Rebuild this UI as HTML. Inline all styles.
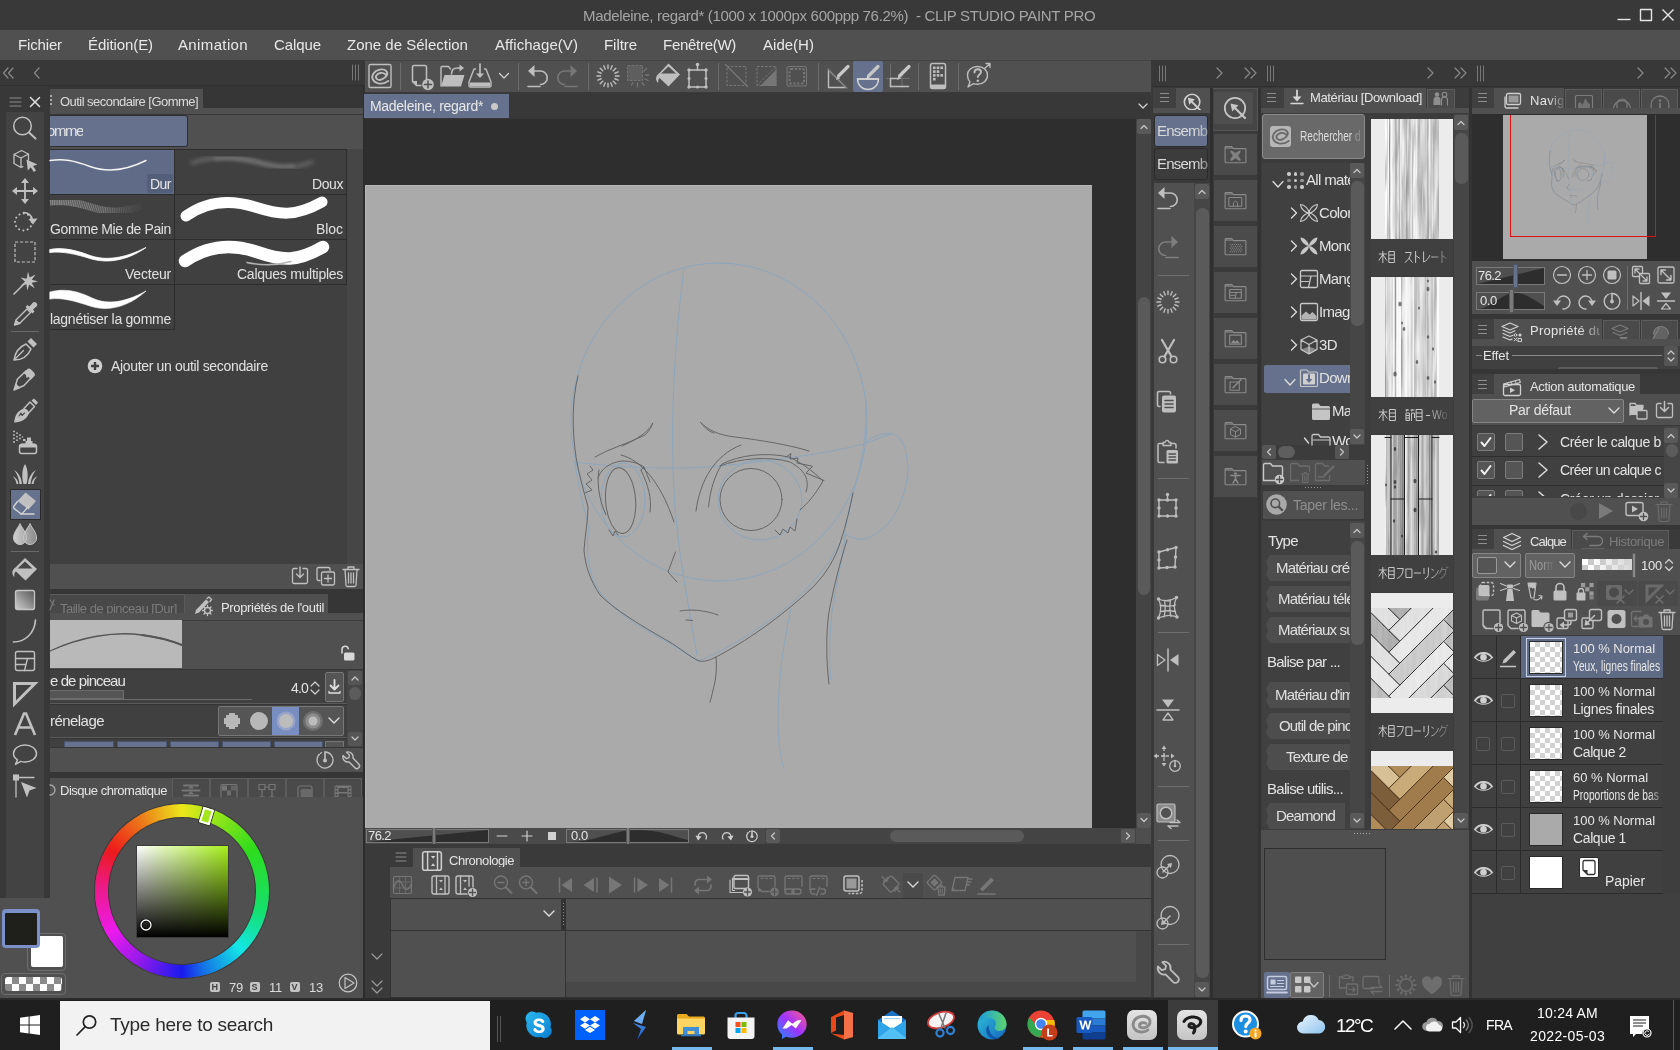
<!DOCTYPE html>
<html><head><meta charset="utf-8"><title>CLIP STUDIO PAINT PRO</title>
<style>
html,body{margin:0;padding:0;width:1680px;height:1050px;overflow:hidden;background:#3a3a3a;font-family:"Liberation Sans",sans-serif;}
div,svg{position:absolute;box-sizing:border-box;}
.t{white-space:pre;font-family:"Liberation Sans",sans-serif;}
#root{left:0;top:0;width:1680px;height:1050px;will-change:transform;}
svg{overflow:visible;fill:none;stroke:currentColor;stroke-width:1.3;stroke-linecap:round;stroke-linejoin:round;color:#b9b9b9}
.f{fill:currentColor;stroke:none}
.ff{fill:currentColor}
</style></head><body><div id="root">
<div style="left:0px;top:0px;width:1680px;height:30px;background:#393939;"></div>
<div class="t" style="left:583px;top:5.0px;height:22px;line-height:22px;font-size:15px;color:#a6a6a6;letter-spacing:-0.32px;">Madeleine, regard* (1000 x 1000px 600ppp 76.2%)  - CLIP STUDIO PAINT PRO</div>
<svg style="left:1612px;top:4px;color:#e6e6e6;stroke-width:1.4;stroke-linecap:butt" width="66" height="22" viewBox="0 0 66 22"><path d="M5.5 15.5h13"/><rect x="28.5" y="5.5" width="11" height="11"/><path d="M50.5 5.5l11 11M61.5 5.5l-11 11"/></svg>
<div style="left:0px;top:30px;width:1680px;height:30px;background:#505050;"></div>
<div class="t" style="left:18px;top:34.0px;height:22px;line-height:22px;font-size:15px;color:#e8e8e8;letter-spacing:-0.15px;">Fichier</div>
<div class="t" style="left:88px;top:34.0px;height:22px;line-height:22px;font-size:15px;color:#e8e8e8;letter-spacing:-0.09px;">Édition(E)</div>
<div class="t" style="left:178px;top:34.0px;height:22px;line-height:22px;font-size:15px;color:#e8e8e8;letter-spacing:0.37px;">Animation</div>
<div class="t" style="left:274px;top:34.0px;height:22px;line-height:22px;font-size:15px;color:#e8e8e8;letter-spacing:-0.09px;">Calque</div>
<div class="t" style="left:347px;top:34.0px;height:22px;line-height:22px;font-size:15px;color:#e8e8e8;letter-spacing:0.00px;">Zone de Sélection</div>
<div class="t" style="left:495px;top:34.0px;height:22px;line-height:22px;font-size:15px;color:#e8e8e8;letter-spacing:0.06px;">Affichage(V)</div>
<div class="t" style="left:604px;top:34.0px;height:22px;line-height:22px;font-size:15px;color:#e8e8e8;letter-spacing:-0.06px;">Filtre</div>
<div class="t" style="left:663px;top:34.0px;height:22px;line-height:22px;font-size:15px;color:#e8e8e8;letter-spacing:-0.28px;">Fenêtre(W)</div>
<div class="t" style="left:763px;top:34.0px;height:22px;line-height:22px;font-size:15px;color:#e8e8e8;letter-spacing:0.02px;">Aide(H)</div>
<div style="left:0px;top:60px;width:1680px;height:28px;background:#383838;"></div>
<div style="left:0px;top:85px;width:365px;height:1px;background:#303030;"></div>
<svg style="left:1px;top:65px;color:#8a8a8a;stroke-width:1.200" width="40" height="16" viewBox="0 0 40 16"><path d="M7 3l-4.500 5 4.500 5M12 3l-4.500 5 4.500 5M38 3l-4.500 5 4.500 5"/></svg>
<svg style="left:350px;top:65px;color:#777;stroke-width:1" width="10" height="16" viewBox="0 0 10 16"><path d="M2.500 0v15M5.500 0v15M8.500 0v15"/></svg>
<div style="left:0px;top:88px;width:50px;height:810px;background:#383838;"></div>
<div style="left:6px;top:112px;width:38px;height:786px;background:#434343;"></div>
<svg style="left:10px;top:97px;color:#8c8c8c;stroke-width:1.100" width="12" height="10" viewBox="0 0 12 10"><path d="M0 1h11M0 5h11M0 9h11"/></svg>
<svg style="left:30px;top:97px;color:#e0e0e0;stroke-width:1.500" width="10" height="10" viewBox="0 0 10 10"><path d="M0.500 0.500l9 9M9.500 0.500l-9 9"/></svg>
<div style="left:11px;top:331px;width:28px;height:1px;background:#6a6a6a;"></div>
<div style="left:11px;top:551px;width:28px;height:1px;background:#6a6a6a;"></div>
<div style="left:10px;top:489px;width:31px;height:31px;background:#65718d;border:1px solid #2c2c2c;"></div>
<div style="left:50px;top:86px;width:315px;height:508px;background:#363636;"></div>
<div style="left:50px;top:89px;width:153px;height:20px;background:#505050;"></div>
<div style="left:50px;top:108px;width:313px;height:6px;background:#505050;"></div>
<svg style="left:50px;top:94px;color:#aaa;stroke-width:2;stroke-linecap:butt" width="4" height="12" viewBox="0 0 4 12"><path d="M1 1v2M1 5v2M1 9v2"/></svg>
<div class="t" style="left:60px;top:91.5px;height:19px;line-height:19px;font-size:13px;color:#dcdcdc;letter-spacing:-0.54px;">Outil secondaire [Gomme]</div>
<div style="left:50px;top:114px;width:313px;height:35px;background:#505050;border-top:1px solid #383838;"></div>
<div style="left:50px;top:115px;width:138px;height:32px;background:#65718d;border:1px solid #2f2f2f;border-left:none;border-radius:0 3px 3px 0;"></div>
<div class="t" style="left:47px;top:120.0px;height:22px;line-height:22px;font-size:15px;color:#e4e4e4;letter-spacing:-1.42px;clip-path:inset(0 0 0 3px);">omme</div>
<div style="left:50px;top:149px;width:297px;height:415px;background:#404040;"></div>
<div style="left:347px;top:149px;width:16px;height:415px;background:#464646;"></div>
<div style="left:50px;top:150px;width:125px;height:45px;background:#5f6b87;border-right:1px solid #2d2d2d;border-bottom:1px solid #2d2d2d;"></div>
<div style="left:175px;top:150px;width:172px;height:45px;background:#404040;border-right:1px solid #2d2d2d;border-bottom:1px solid #2d2d2d;"></div>
<div style="left:50px;top:195px;width:125px;height:45px;background:#404040;border-right:1px solid #2d2d2d;border-bottom:1px solid #2d2d2d;"></div>
<div style="left:175px;top:195px;width:172px;height:45px;background:#404040;border-right:1px solid #2d2d2d;border-bottom:1px solid #2d2d2d;"></div>
<div style="left:50px;top:240px;width:125px;height:45px;background:#404040;border-right:1px solid #2d2d2d;border-bottom:1px solid #2d2d2d;"></div>
<div style="left:175px;top:240px;width:172px;height:45px;background:#404040;border-right:1px solid #2d2d2d;border-bottom:1px solid #2d2d2d;"></div>
<div style="left:50px;top:285px;width:125px;height:45px;background:#404040;border-right:1px solid #2d2d2d;border-bottom:1px solid #2d2d2d;"></div>
<div style="left:50px;top:149px;width:297px;height:1px;background:#2d2d2d;"></div>
<div style="left:147px;top:174px;width:26px;height:19px;background:#535e78;border-radius:2px;"></div>
<div class="t" style="left:150px;top:173.5px;height:21px;line-height:21px;font-size:14px;color:#e6e6e6;letter-spacing:-0.52px;">Dur</div>
<div class="t" style="left:312px;top:173.5px;height:21px;line-height:21px;font-size:14px;color:#e0e0e0;letter-spacing:-0.42px;">Doux</div>
<div class="t" style="left:50px;top:218.5px;height:21px;line-height:21px;font-size:14px;color:#e0e0e0;letter-spacing:-0.39px;">Gomme Mie de Pain</div>
<div class="t" style="left:316px;top:218.5px;height:21px;line-height:21px;font-size:14px;color:#e0e0e0;letter-spacing:-0.06px;">Bloc</div>
<div class="t" style="left:125px;top:263.5px;height:21px;line-height:21px;font-size:14px;color:#e0e0e0;letter-spacing:-0.21px;">Vecteur</div>
<div class="t" style="left:237px;top:263.5px;height:21px;line-height:21px;font-size:14px;color:#e0e0e0;letter-spacing:-0.26px;">Calques multiples</div>
<div class="t" style="left:50px;top:308.5px;height:21px;line-height:21px;font-size:14px;color:#e0e0e0;letter-spacing:-0.27px;">lagnétiser la gomme</div>
<svg style="left:50px;top:150px;" width="125" height="45" viewBox="0 0 125 45"><path d="M0 10.500c14-2 24 0 40 6 18 6.500 38 3 56-6" stroke="#f4f4f4" stroke-width="1.400"/></svg>
<svg style="left:175px;top:150px;" width="172" height="45" viewBox="0 0 172 45"><defs><filter id="bl"><feGaussianBlur stdDeviation="2"/></filter></defs><path d="M17 13C35 6 60 6 82 12S115 20 137 12" stroke="#9a9a9a" stroke-width="2.600" filter="url(#bl)" opacity=".6"/><path d="M40 8.500C55 7 68 8.500 82 12S105 17.500 118 16" stroke="#a8a8a8" stroke-width="2" filter="url(#bl)" opacity=".6"/></svg>
<svg style="left:50px;top:195px;" width="125" height="45" viewBox="0 0 125 45"><defs><filter id="b2"><feGaussianBlur stdDeviation=".55"/></filter></defs><linearGradient id="mp" x1="0" x2="1" y1="0" y2="0" gradientUnits="userSpaceOnUse" gradientTransform="scale(95 1)"><stop offset="0" stop-color="#8c8c8c"/><stop offset=".6" stop-color="#7a7a7a" stop-opacity=".85"/><stop offset="1" stop-color="#6a6a6a" stop-opacity="0"/></linearGradient><path d="M0 7C14 5 28 8 44 13S74 17 92 11" stroke="url(#mp)" stroke-width="7.500" stroke-linecap="butt" stroke-dasharray="1.300 .500" filter="url(#b2)"/></svg>
<svg style="left:175px;top:195px;" width="172" height="45" viewBox="0 0 172 45"><path d="M11 21C32 6 55 4 80 12S120 22 147 7" stroke="#fff" stroke-width="11"/></svg>
<svg style="left:50px;top:240px;" width="125" height="45" viewBox="0 0 125 45"><path d="M0 9.500c12-2.500 26 .5 40 6 16 5.500 34 3 56-8c-20 14-40 16-56 11-14-4.500-28-7.500-40-6z" fill="#fff" stroke="#fff" stroke-width=".8"/></svg>
<svg style="left:175px;top:240px;" width="172" height="45" viewBox="0 0 172 45"><path d="M10 21C32 6 56 3 82 12S122 22 148 7" stroke="#fff" stroke-width="12.500"/><path d="M72 22.500c14 3 30 3 44-1" stroke="#b4b4b4" stroke-width="1.600"/></svg>
<svg style="left:50px;top:285px;" width="125" height="45" viewBox="0 0 125 45"><path d="M0 7c14-4 28-1 42 6 16 7.500 34 4 54-7-18 16-38 21-56 15-14-4.500-28-9-40-7z" fill="#fff" stroke="#fff" stroke-width=".6"/></svg>
<svg style="left:87px;top:358px;color:#d8d8d8;" width="16" height="16" viewBox="0 0 16 16"><circle cx="8" cy="8" r="7.300" class="f" style="fill:#d0d0d0"/><path d="M8 4v8M4 8h8" stroke="#404040" stroke-width="2.400" stroke-linecap="butt"/></svg>
<div class="t" style="left:111px;top:355.5px;height:21px;line-height:21px;font-size:14px;color:#e0e0e0;letter-spacing:-0.33px;">Ajouter un outil secondaire</div>
<div style="left:50px;top:564px;width:313px;height:25px;background:#505050;"></div>
<div style="left:50px;top:594px;width:315px;height:184px;background:#363636;"></div>
<div style="left:50px;top:594px;width:135px;height:19px;background:#484848;border:1px solid #5a5a5a;border-bottom:none;border-left:none;"></div>
<div style="left:185px;top:594px;width:143px;height:20px;background:#505050;"></div>
<div style="left:50px;top:613px;width:313px;height:7px;background:#505050;"></div>
<div class="t" style="left:60px;top:598.5px;height:19px;line-height:19px;font-size:13px;color:#7c7c7c;letter-spacing:-0.51px;clip-path:inset(0 0 4px 0);">Taille de pinceau [Dur]</div>
<div class="t" style="left:221px;top:597.5px;height:19px;line-height:19px;font-size:13px;color:#e6e6e6;letter-spacing:-0.34px;">Propriétés de l'outil</div>
<div style="left:50px;top:620px;width:313px;height:49px;background:#505050;border-top:1px solid #3c3c3c;"></div>
<div style="left:50px;top:620px;width:132px;height:48px;background:#b9b9b9;"></div>
<svg style="left:50px;top:620px;" width="132" height="48" viewBox="0 0 132 48"><path d="M0 31c30-14 64-20 92-16 16 2 30 6 40 10" stroke="#555" stroke-width="1.300"/><path d="M92 15c16 2 30 6 40 10" stroke="#555" stroke-width="2"/></svg>
<div style="left:50px;top:670px;width:297px;height:34px;background:#404040;border-bottom:1px solid #5a5a5a;"></div>
<div style="left:50px;top:705px;width:297px;height:33px;background:#404040;border-bottom:1px solid #5a5a5a;"></div>
<div style="left:50px;top:739px;width:297px;height:8px;background:#404040;"></div>
<div style="left:347px;top:670px;width:16px;height:77px;background:#464646;"></div>
<div class="t" style="left:50px;top:670.0px;height:22px;line-height:22px;font-size:15px;color:#e4e4e4;letter-spacing:-0.91px;">e de pinceau</div>
<div style="left:50px;top:690px;width:74px;height:9px;background:#555555;border:1px solid #6c6c6c;border-left:none;"></div>
<div style="left:50px;top:699px;width:202px;height:1px;background:#6c6c6c;"></div>
<div class="t" style="left:291px;top:677.5px;height:21px;line-height:21px;font-size:14px;color:#e4e4e4;letter-spacing:-0.82px;">4.0</div>
<svg style="left:310px;top:680px;color:#d0d0d0;stroke-width:1.200" width="10" height="16" viewBox="0 0 10 16"><path d="M1 6l4-4 4 4M1 10l4 4 4-4"/></svg>
<div style="left:325px;top:672px;width:19px;height:30px;background:#555;border:1px solid #777;border-radius:2px;"></div>
<svg style="left:328px;top:679px;color:#e0e0e0;" width="13" height="16" viewBox="0 0 13 16"><path d="M6.500 1v9M2.500 6.500l4 4 4-4" stroke-width="1.800"/><path d="M1 12.500v1.500h11v-1.500" stroke-width="1.300"/></svg>
<div class="t" style="left:50px;top:710.0px;height:22px;line-height:22px;font-size:15px;color:#e4e4e4;letter-spacing:-0.55px;">rénelage</div>
<div style="left:218px;top:706px;width:126px;height:30px;background:#555;border:1px solid #777;border-radius:2px;"></div>
<div style="left:272px;top:707px;width:27px;height:28px;background:#788dc0;"></div>
<svg style="left:221px;top:710px;color:#b8b8b8;" width="22" height="22" viewBox="0 0 22 22"><path class="f" d="M8 3h6v2h3v3h2v6h-2v3h-3v2h-6v-2h-3v-3h-2v-6h2v-3h3z"/></svg>
<svg style="left:248px;top:710px;color:#b8b8b8;" width="22" height="22" viewBox="0 0 22 22"><circle cx="11" cy="11" r="9" class="f"/></svg>
<svg style="left:275px;top:710px;" width="22" height="22" viewBox="0 0 22 22"><circle cx="11" cy="11" r="9.500" class="f" style="fill:#97a3c8"/><circle cx="11" cy="11" r="7" class="f" style="fill:#bcbcbc"/></svg>
<svg style="left:302px;top:710px;" width="22" height="22" viewBox="0 0 22 22"><circle cx="11" cy="11" r="10" class="f" style="fill:#6e6e6e"/><circle cx="11" cy="11" r="7.500" class="f" style="fill:#8e8e8e"/><circle cx="11" cy="11" r="4.500" class="f" style="fill:#bcbcbc"/></svg>
<svg style="left:327px;top:715px;color:#e0e0e0;stroke-width:1.400" width="14" height="12" viewBox="0 0 14 12"><path d="M2 3l5 5 5-5"/></svg>
<div style="left:64px;top:741px;width:50px;height:6px;background:#66728e;border:1px solid #4a5470;border-bottom:none;"></div>
<div style="left:117px;top:741px;width:50px;height:6px;background:#66728e;border:1px solid #4a5470;border-bottom:none;"></div>
<div style="left:170px;top:741px;width:49px;height:6px;background:#66728e;border:1px solid #4a5470;border-bottom:none;"></div>
<div style="left:222px;top:741px;width:49px;height:6px;background:#66728e;border:1px solid #4a5470;border-bottom:none;"></div>
<div style="left:274px;top:741px;width:49px;height:6px;background:#66728e;border:1px solid #4a5470;border-bottom:none;"></div>
<div style="left:325px;top:741px;width:19px;height:6px;background:#555;border:1px solid #777;border-bottom:none;"></div>
<div style="left:348px;top:671px;width:14px;height:14px;background:#555;border-radius:2px;"></div>
<svg style="left:350px;top:674px;color:#c8c8c8;stroke-width:1.200" width="10" height="8" viewBox="0 0 10 8"><path d="M2 6l3-3 3 3"/></svg>
<div style="left:349px;top:687px;width:12px;height:13px;background:#5c5c5c;border-radius:6px;"></div>
<div style="left:348px;top:732px;width:14px;height:14px;background:#555;border-radius:2px;"></div>
<svg style="left:350px;top:735px;color:#c8c8c8;stroke-width:1.200" width="10" height="8" viewBox="0 0 10 8"><path d="M2 2l3 3 3-3"/></svg>
<div style="left:50px;top:748px;width:313px;height:24px;background:#505050;"></div>
<div style="left:50px;top:778px;width:315px;height:220px;background:#363636;"></div>
<div style="left:0px;top:898px;width:50px;height:100px;background:#505050;"></div>
<div style="left:50px;top:797px;width:313px;height:201px;background:#505050;"></div>
<div style="left:50px;top:778px;width:122px;height:20px;background:#505050;"></div>
<div style="left:172px;top:778px;width:38px;height:19px;background:#4a4a4a;border:1px solid #5c5c5c;border-bottom:none;"></div>
<div style="left:210px;top:778px;width:38px;height:19px;background:#4a4a4a;border:1px solid #5c5c5c;border-bottom:none;"></div>
<div style="left:248px;top:778px;width:38px;height:19px;background:#4a4a4a;border:1px solid #5c5c5c;border-bottom:none;"></div>
<div style="left:286px;top:778px;width:38px;height:19px;background:#4a4a4a;border:1px solid #5c5c5c;border-bottom:none;"></div>
<div style="left:324px;top:778px;width:38px;height:19px;background:#4a4a4a;border:1px solid #5c5c5c;border-bottom:none;"></div>
<svg style="left:50px;top:785px;color:#aaa;" width="3" height="10" viewBox="0 0 3 10"><path d="M0 0a5 5 0 0 1 0 10"/></svg>
<div class="t" style="left:60px;top:780.5px;height:19px;line-height:19px;font-size:13px;color:#e4e4e4;letter-spacing:-0.48px;">Disque chromatique</div>
<div style="left:95px;top:804px;width:174px;height:174px;border-radius:50%;background:conic-gradient(from 0deg,#ece81a 0deg,#9fe51a 22deg,#2ddc1c 60deg,#14e070 105deg,#14e6e6 135deg,#1470e6 165deg,#1a1aec 180deg,#a01aec 215deg,#ec1aec 240deg,#ec1a80 275deg,#ec1a1a 300deg,#ec7a1a 330deg,#ece81a 360deg);box-shadow:0 0 0 1px #3a3a3a;"></div>
<div style="left:109px;top:818px;width:146px;height:146px;background:#505050;border-radius:50%;box-shadow:0 0 0 1px #3a3a3a;"></div>
<div style="left:201px;top:808px;width:11px;height:16px;background:#a4e51c;border:2px solid #fff;box-shadow:0 0 0 1px #333;transform:rotate(17deg);"></div>
<div style="left:137px;top:846px;width:91px;height:91px;background:linear-gradient(to bottom,rgba(0,0,0,0),#000),linear-gradient(to right,#fff,#a6f01a);box-shadow:0 0 0 1px #3c3c3c;"></div>
<svg style="left:139px;top:918px;" width="14" height="14" viewBox="0 0 14 14"><circle cx="7" cy="7" r="5" stroke="#000" stroke-width="2.600"/><circle cx="7" cy="7" r="5" stroke="#fff" stroke-width="1.300"/></svg>
<div style="left:27px;top:933px;width:39px;height:38px;border:1px solid #6e6e6e;border-radius:4px;"></div>
<div style="left:31px;top:936px;width:32px;height:31px;background:#ffffff;border-radius:2px;"></div>
<div style="left:2px;top:909px;width:38px;height:39px;background:#7b8fc9;border-radius:4px;"></div>
<div style="left:5px;top:913px;width:32px;height:32px;background:#1f201b;border-radius:1px;"></div>
<div style="left:1px;top:973px;width:65px;height:22px;border:1px solid #6e6e6e;border-radius:4px;"></div>
<div style="left:5px;top:977px;width:57px;height:14px;border-radius:3px;background-color:#fff;background-image:linear-gradient(45deg,#8a8a8a 25%,transparent 25%,transparent 75%,#8a8a8a 75%),linear-gradient(45deg,#8a8a8a 25%,transparent 25%,transparent 75%,#8a8a8a 75%);background-size:14px 14px;background-position:0 0,7px 7px;"></div>
<div style="left:210px;top:982px;width:10px;height:10px;background:#c4c4c4;border-radius:2px;"></div>
<div class="t" style="left:211.5px;top:982.0px;height:10px;line-height:10px;font-size:9px;color:#444;font-weight:700;">H</div>
<div style="left:250px;top:982px;width:10px;height:10px;background:#c4c4c4;border-radius:2px;"></div>
<div class="t" style="left:251.5px;top:982.0px;height:10px;line-height:10px;font-size:9px;color:#444;font-weight:700;">S</div>
<div style="left:290px;top:982px;width:10px;height:10px;background:#c4c4c4;border-radius:2px;"></div>
<div class="t" style="left:291.5px;top:982.0px;height:10px;line-height:10px;font-size:9px;color:#444;font-weight:700;">V</div>
<div class="t" style="left:229px;top:977.5px;height:19px;line-height:19px;font-size:13px;color:#dcdcdc;letter-spacing:-0.23px;">79</div>
<div class="t" style="left:269px;top:977.5px;height:19px;line-height:19px;font-size:13px;color:#dcdcdc;letter-spacing:-0.25px;">11</div>
<div class="t" style="left:309px;top:977.5px;height:19px;line-height:19px;font-size:13px;color:#dcdcdc;letter-spacing:-0.23px;">13</div>
<svg style="left:338px;top:973px;color:#c4c4c4;stroke-width:1.200" width="20" height="20" viewBox="0 0 20 20"><circle cx="10" cy="10" r="8.800"/><path d="M7 4.500v11l9-5.500z"/></svg>
<div style="left:363px;top:86px;width:1px;height:912px;background:#2c2c2c;"></div>
<div style="left:364px;top:93px;width:1px;height:905px;background:#2c2c2c;"></div>
<div style="left:365px;top:60px;width:786px;height:33px;background:#505050;border-bottom:1px solid #3a3a3a;border-top:1px solid #444;"></div>
<div style="left:365px;top:93px;width:786px;height:26px;background:#383838;"></div>
<div style="left:364px;top:94px;width:145px;height:24px;background:#65718d;"></div>
<div class="t" style="left:370px;top:95.5px;height:21px;line-height:21px;font-size:14px;color:#e8e8e8;letter-spacing:-0.29px;">Madeleine, regard*</div>
<div style="left:491px;top:103px;width:7px;height:7px;background:#c9c9c9;border-radius:50%;"></div>
<svg style="left:1137px;top:101px;color:#d0d0d0;stroke-width:1.300" width="12" height="10" viewBox="0 0 12 10"><path d="M2 3l4 4 4-4"/></svg>
<div style="left:365px;top:119px;width:786px;height:709px;background:#2e2e2e;"></div>
<div style="left:365px;top:185px;width:727px;height:643px;background:#aaaaaa;border-top:1px solid #b6b6b6;border-left:1px solid #b6b6b6;"></div>
<div style="left:1136px;top:119px;width:15px;height:709px;background:#444444;"></div>
<div style="left:1137px;top:119px;width:14px;height:15px;background:#595959;border-radius:2px;"></div>
<svg style="left:1139px;top:122px;color:#c8c8c8;stroke-width:1.200" width="10" height="9" viewBox="0 0 10 9"><path d="M2 6.500l3-3 3 3"/></svg>
<div style="left:1138px;top:297px;width:12px;height:298px;background:#5a5a5a;border-radius:6px;"></div>
<div style="left:1137px;top:813px;width:14px;height:15px;background:#595959;border-radius:2px;"></div>
<svg style="left:1139px;top:816px;color:#c8c8c8;stroke-width:1.200" width="10" height="9" viewBox="0 0 10 9"><path d="M2 2.500l3 3 3-3"/></svg>
<div style="left:365px;top:828px;width:786px;height:16px;background:#4a4a4a;"></div>
<div style="left:366px;top:829px;width:123px;height:14px;background:#4f4f4f;border:1px solid #7a7a7a;"></div>
<svg style="left:367px;top:830px;stroke:none" width="121" height="12" viewBox="0 0 121 12"><polygon points="0,12 121,0 121,12" fill="#2d2d2d"/></svg>
<div class="t" style="left:368px;top:829.0px;height:14px;line-height:14px;font-size:13px;color:#e6e6e6;letter-spacing:-0.58px;">76.2</div>
<div style="left:432px;top:828px;width:4px;height:16px;background:#7a7a7a;border-left:1px solid #555;border-right:1px solid #555;"></div>
<svg style="left:495px;top:830px;color:#cfcfcf;" width="64" height="12" viewBox="0 0 64 12"><path d="M2 6h10M27 6h10M32 1v10" stroke-width="1.200"/><rect x="53" y="2" width="8" height="8" class="f"/></svg>
<div style="left:566px;top:829px;width:123px;height:14px;background:#4f4f4f;border:1px solid #7a7a7a;"></div>
<svg style="left:567px;top:830px;stroke:none" width="121" height="12" viewBox="0 0 121 12"><path d="M0 12C30 12 45 0 70 0C92 0 105 6 121 10L121 12Z" fill="#2d2d2d"/></svg>
<div class="t" style="left:571px;top:829.0px;height:14px;line-height:14px;font-size:13px;color:#e6e6e6;letter-spacing:-0.36px;">0.0</div>
<div style="left:626px;top:828px;width:4px;height:16px;background:#7a7a7a;border-left:1px solid #555;border-right:1px solid #555;"></div>
<svg style="left:695px;top:829px;color:#cfcfcf;" width="14" height="14" viewBox="0 0 14 14"><path d="M3.500 10a4.300 4.300 0 1 1 7.500 0" stroke-width="1.300"/><path class="f" d="M0.500 6.500l2.500 5 3.500-4z"/></svg>
<svg style="left:720px;top:829px;color:#cfcfcf;" width="14" height="14" viewBox="0 0 14 14"><path d="M10.500 10a4.300 4.300 0 1 0-7.500 0" stroke-width="1.300"/><path class="f" d="M13.500 6.500l-2.500 5-3.500-4z"/></svg>
<svg style="left:745px;top:829px;color:#cfcfcf;" width="14" height="14" viewBox="0 0 14 14"><path d="M7 2a5.300 5.300 0 1 1-3.800 1.600" stroke-width="1.200"/><path d="M2.500 4.500a5.300 5.300 0 0 1 3-2.300" stroke-width="1.200" stroke-dasharray="1 1.500"/><path d="M7 2v5" stroke-width="1.500"/><circle cx="7" cy="7.500" r="1.500" class="f"/></svg>
<div style="left:765px;top:828px;width:371px;height:16px;background:#444444;"></div>
<div style="left:1136px;top:828px;width:15px;height:16px;background:#4e4e4e;"></div>
<div style="left:766px;top:829px;width:14px;height:14px;background:#595959;border-radius:2px;"></div>
<svg style="left:768px;top:831px;color:#c8c8c8;stroke-width:1.200" width="10" height="10" viewBox="0 0 10 10"><path d="M6.500 2l-3 3 3 3"/></svg>
<div style="left:890px;top:830px;width:134px;height:12px;background:#5a5a5a;border-radius:6px;"></div>
<div style="left:1121px;top:829px;width:14px;height:14px;background:#595959;border-radius:2px;"></div>
<svg style="left:1123px;top:831px;color:#c8c8c8;stroke-width:1.200" width="10" height="10" viewBox="0 0 10 10"><path d="M3.500 2l3 3-3 3"/></svg>
<div style="left:365px;top:844px;width:786px;height:154px;background:#3a3a3a;"></div>
<div style="left:413px;top:848px;width:107px;height:20px;background:#505050;"></div>
<svg style="left:396px;top:852px;color:#8c8c8c;stroke-width:1.100" width="11" height="10" viewBox="0 0 11 10"><path d="M0 1h10M0 5h10M0 9h10"/></svg>
<div class="t" style="left:449px;top:850.5px;height:19px;line-height:19px;font-size:13px;color:#e4e4e4;letter-spacing:-0.46px;">Chronologie</div>
<div style="left:390px;top:867px;width:761px;height:31px;background:#505050;"></div>
<div style="left:390px;top:898px;width:761px;height:100px;background:#333;"></div>
<div style="left:391px;top:899px;width:170px;height:31px;background:#505050;"></div>
<div style="left:566px;top:899px;width:585px;height:31px;background:#505050;"></div>
<div style="left:391px;top:931px;width:174px;height:66px;background:#505050;"></div>
<div style="left:566px;top:931px;width:570px;height:51px;background:#505050;"></div>
<div style="left:566px;top:982px;width:570px;height:15px;background:#484848;"></div>
<div style="left:1136px;top:931px;width:15px;height:66px;background:#484848;"></div>
<svg style="left:542px;top:908px;color:#e0e0e0;stroke-width:1.400" width="14" height="12" viewBox="0 0 14 12"><path d="M2 3l5 5 5-5"/></svg>
<svg style="left:562px;top:902px;color:#888;stroke-width:1;stroke-linecap:butt" width="3" height="26" viewBox="0 0 3 26"><path d="M1.500 1v24" stroke-dasharray="1 2"/></svg>
<svg style="left:370px;top:950px;color:#9a9a9a;stroke-width:1.200" width="14" height="14" viewBox="0 0 14 14"><path d="M2 4l5 5 5-5"/></svg>
<svg style="left:370px;top:978px;color:#9a9a9a;stroke-width:1.200" width="14" height="18" viewBox="0 0 14 18"><path d="M2 3l5 5 5-5M2 10l5 5 5-5"/></svg>
<div style="left:1152px;top:60px;width:528px;height:938px;background:#383838;"></div>
<div style="left:1152px;top:86px;width:528px;height:1px;background:#303030;"></div>
<svg style="left:1158px;top:66px;color:#777;stroke-width:1" width="10" height="16" viewBox="0 0 10 16"><path d="M1.500 0v15M4.500 0v15M7.500 0v15"/></svg>
<svg style="left:1216px;top:66px;color:#8a8a8a;stroke-width:1.200" width="8" height="14" viewBox="0 0 8 14"><path d="M1 2l5 5-5 5"/></svg>
<svg style="left:1244px;top:66px;color:#8a8a8a;stroke-width:1.200" width="14" height="14" viewBox="0 0 14 14"><path d="M1 2l5 5-5 5M7 2l5 5-5 5"/></svg>
<svg style="left:1266px;top:66px;color:#777;stroke-width:1" width="10" height="16" viewBox="0 0 10 16"><path d="M1.500 0v15M4.500 0v15M7.500 0v15"/></svg>
<svg style="left:1427px;top:66px;color:#8a8a8a;stroke-width:1.200" width="8" height="14" viewBox="0 0 8 14"><path d="M1 2l5 5-5 5"/></svg>
<svg style="left:1454px;top:66px;color:#8a8a8a;stroke-width:1.200" width="14" height="14" viewBox="0 0 14 14"><path d="M1 2l5 5-5 5M7 2l5 5-5 5"/></svg>
<svg style="left:1476px;top:66px;color:#777;stroke-width:1" width="10" height="16" viewBox="0 0 10 16"><path d="M1.500 0v15M4.500 0v15M7.500 0v15"/></svg>
<svg style="left:1637px;top:66px;color:#8a8a8a;stroke-width:1.200" width="8" height="14" viewBox="0 0 8 14"><path d="M1 2l5 5-5 5"/></svg>
<svg style="left:1664px;top:66px;color:#8a8a8a;stroke-width:1.200" width="14" height="14" viewBox="0 0 14 14"><path d="M1 2l5 5-5 5M7 2l5 5-5 5"/></svg>
<div style="left:1153px;top:88px;width:58px;height:910px;background:#3a3a3a;"></div>
<div style="left:1153px;top:88px;width:23px;height:20px;background:#404040;"></div>
<svg style="left:1160px;top:93px;color:#8e8e8e;stroke-width:1;stroke-linecap:butt" width="10" height="10" viewBox="0 0 10 10"><path d="M0 .5h9M0 4.500h9M0 8.500h9"/></svg>
<div style="left:1176px;top:88px;width:34px;height:22px;background:#505050;"></div>
<div style="left:1153px;top:108px;width:57px;height:5px;background:#505050;"></div>
<div style="left:1154px;top:115px;width:54px;height:32px;background:#65718d;border:1px solid #2b2b2b;border-radius:3px;"></div>
<div style="left:1154px;top:148px;width:54px;height:32px;background:#3c3c3c;border:1px solid #2b2b2b;border-radius:3px;"></div>
<div class="t" style="left:1157px;top:120px;width:51px;height:22px;line-height:22px;font-size:15px;color:#dadada;overflow:hidden;letter-spacing:-0.8px;-webkit-mask-image:linear-gradient(to right,#000 75%,rgba(0,0,0,.45));">Ensemble</div>
<div class="t" style="left:1157px;top:153px;width:51px;height:22px;line-height:22px;font-size:15px;color:#dadada;overflow:hidden;letter-spacing:-0.8px;-webkit-mask-image:linear-gradient(to right,#000 75%,rgba(0,0,0,.45));">Ensemble</div>
<div style="left:1154px;top:183px;width:40px;height:814px;background:#505050;"></div>
<div style="left:1194px;top:183px;width:16px;height:814px;background:#464646;"></div>
<div style="left:1195px;top:184px;width:14px;height:15px;background:#595959;border-radius:2px;"></div>
<svg style="left:1197px;top:187px;color:#c8c8c8;stroke-width:1.200" width="10" height="9" viewBox="0 0 10 9"><path d="M2 6.500l3-3 3 3"/></svg>
<div style="left:1196px;top:208px;width:13px;height:770px;background:#5a5a5a;border-radius:6px;"></div>
<div style="left:1195px;top:982px;width:14px;height:15px;background:#595959;border-radius:2px;"></div>
<svg style="left:1197px;top:985px;color:#c8c8c8;stroke-width:1.200" width="10" height="9" viewBox="0 0 10 9"><path d="M2 3l3 3 3-3"/></svg>
<div style="left:1158px;top:275px;width:31px;height:1px;background:#6e6e6e;"></div>
<div style="left:1158px;top:478px;width:31px;height:1px;background:#6e6e6e;"></div>
<div style="left:1158px;top:632px;width:31px;height:1px;background:#6e6e6e;"></div>
<div style="left:1158px;top:786px;width:31px;height:1px;background:#6e6e6e;"></div>
<div style="left:1158px;top:840px;width:31px;height:1px;background:#6e6e6e;"></div>
<div style="left:1158px;top:944px;width:31px;height:1px;background:#6e6e6e;"></div>
<div style="left:1210px;top:88px;width:3px;height:910px;background:#2f2f2f;"></div>
<div style="left:1213px;top:88px;width:47px;height:910px;background:#3a3a3a;"></div>
<div style="left:1213px;top:88px;width:45px;height:43px;background:#454545;border:1px solid #555;border-left:none;"></div>
<div style="left:1214px;top:92px;width:39px;height:32px;background:#4e4e4e;border-radius:2px;"></div>
<div style="left:1214px;top:134px;width:43px;height:41px;background:#4b4b4b;"></div>
<div style="left:1214px;top:180px;width:43px;height:41px;background:#4b4b4b;"></div>
<div style="left:1214px;top:226px;width:43px;height:41px;background:#4b4b4b;"></div>
<div style="left:1214px;top:272px;width:43px;height:41px;background:#4b4b4b;"></div>
<div style="left:1214px;top:318px;width:43px;height:41px;background:#4b4b4b;"></div>
<div style="left:1214px;top:364px;width:43px;height:41px;background:#4b4b4b;"></div>
<div style="left:1214px;top:410px;width:43px;height:41px;background:#4b4b4b;"></div>
<div style="left:1214px;top:456px;width:43px;height:41px;background:#4b4b4b;"></div>
<div style="left:1258px;top:88px;width:3px;height:910px;background:#333;"></div>
<div style="left:1261px;top:88px;width:208px;height:910px;background:#3c3c3c;"></div>
<div style="left:1261px;top:88px;width:23px;height:20px;background:#404040;"></div>
<svg style="left:1267px;top:93px;color:#8e8e8e;stroke-width:1;stroke-linecap:butt" width="10" height="10" viewBox="0 0 10 10"><path d="M0 .5h9M0 4.500h9M0 8.500h9"/></svg>
<div style="left:1284px;top:88px;width:142px;height:21px;background:#505050;"></div>
<div style="left:1427px;top:89px;width:28px;height:19px;background:#4a4a4a;border:1px solid #5c5c5c;border-bottom:none;"></div>
<div style="left:1261px;top:108px;width:208px;height:5px;background:#505050;"></div>
<div class="t" style="left:1310px;top:87.5px;height:19px;line-height:19px;font-size:13px;color:#e4e4e4;letter-spacing:-0.38px;">Matériau [Download]</div>
<div style="left:1262px;top:114px;width:103px;height:45px;background:#696969;border:1px solid #8a8a8a;border-radius:3px;"></div>
<div class="t" style="left:1300px;top:126px;width:62px;height:20px;line-height:20px;font-size:14px;color:#dedede;overflow:hidden;transform:scaleX(.72);transform-origin:0 50%;width:86px;-webkit-mask-image:linear-gradient(to right,#000 84%,rgba(0,0,0,.3) 92%);">Rechercher d</div>
<div style="left:1262px;top:163px;width:88px;height:282px;background:#404040;"></div>
<div style="left:1350px;top:163px;width:15px;height:282px;background:#464646;"></div>
<div style="left:1350px;top:163px;width:14px;height:15px;background:#595959;border-radius:2px;"></div>
<svg style="left:1352px;top:166px;color:#c8c8c8;stroke-width:1.200" width="10" height="9" viewBox="0 0 10 9"><path d="M2 6.500l3-3 3 3"/></svg>
<div style="left:1351px;top:181px;width:13px;height:145px;background:#5a5a5a;border-radius:6px;"></div>
<div style="left:1350px;top:429px;width:14px;height:15px;background:#595959;border-radius:2px;"></div>
<svg style="left:1352px;top:432px;color:#c8c8c8;stroke-width:1.200" width="10" height="9" viewBox="0 0 10 9"><path d="M2 3l3 3 3-3"/></svg>
<div style="left:1264px;top:365px;width:86px;height:28px;background:#65718d;border-radius:2px 0 0 2px;"></div>
<div class="t" style="left:1306px;top:169px;width:44px;height:22px;line-height:22px;font-size:15px;color:#e2e2e2;overflow:hidden;letter-spacing:-0.65px;">All materials</div>
<div class="t" style="left:1319px;top:202px;width:31px;height:22px;line-height:22px;font-size:15px;color:#e2e2e2;overflow:hidden;letter-spacing:-0.65px;">Color pattern</div>
<div class="t" style="left:1319px;top:235px;width:31px;height:22px;line-height:22px;font-size:15px;color:#e2e2e2;overflow:hidden;letter-spacing:-0.65px;">Monochromatic</div>
<div class="t" style="left:1319px;top:268px;width:31px;height:22px;line-height:22px;font-size:15px;color:#e2e2e2;overflow:hidden;letter-spacing:-0.65px;">Manga material</div>
<div class="t" style="left:1319px;top:301px;width:31px;height:22px;line-height:22px;font-size:15px;color:#e2e2e2;overflow:hidden;letter-spacing:-0.65px;">Image material</div>
<div class="t" style="left:1319px;top:334px;width:31px;height:22px;line-height:22px;font-size:15px;color:#e2e2e2;overflow:hidden;letter-spacing:-0.65px;">3D</div>
<div class="t" style="left:1319px;top:367px;width:31px;height:22px;line-height:22px;font-size:15px;color:#e2e2e2;overflow:hidden;letter-spacing:-0.65px;">Download</div>
<div class="t" style="left:1332px;top:400px;width:18px;height:22px;line-height:22px;font-size:15px;color:#e2e2e2;overflow:hidden;letter-spacing:-0.65px;">Material</div>
<div class="t" style="left:1332px;top:430px;width:18px;height:15px;line-height:22px;font-size:15px;color:#e2e2e2;overflow:hidden;letter-spacing:-0.65px;">Wood</div>
<div style="left:1262px;top:445px;width:103px;height:14px;background:#3c3c3c;"></div>
<div style="left:1262px;top:445px;width:14px;height:14px;background:#555;border-radius:2px;"></div>
<svg style="left:1264px;top:447px;color:#c8c8c8;stroke-width:1.200" width="10" height="10" viewBox="0 0 10 10"><path d="M6.500 2l-3 3 3 3"/></svg>
<div style="left:1278px;top:446px;width:17px;height:12px;background:#5e5e5e;border-radius:6px;"></div>
<div style="left:1335px;top:445px;width:14px;height:14px;background:#555;border-radius:2px;"></div>
<svg style="left:1337px;top:447px;color:#c8c8c8;stroke-width:1.200" width="10" height="10" viewBox="0 0 10 10"><path d="M3.500 2l3 3-3 3"/></svg>
<div style="left:1262px;top:460px;width:103px;height:25px;background:#505050;"></div>
<svg style="left:1366px;top:464px;color:#999;stroke-width:1;stroke-linecap:butt" width="3" height="22" viewBox="0 0 3 22"><path d="M1.500 1v20" stroke-dasharray="1 2"/></svg>
<svg style="left:1305px;top:486px;color:#999;stroke-width:1;stroke-linecap:butt" width="20" height="3" viewBox="0 0 20 3"><path d="M0 1.500h18" stroke-dasharray="1 2"/></svg>
<div style="left:1262px;top:490px;width:103px;height:30px;background:#505050;border:1px solid #3a3a3a;border-radius:2px;"></div>
<div class="t" style="left:1293px;top:494.5px;height:21px;line-height:21px;font-size:14px;color:#8e8e8e;letter-spacing:-0.29px;">Taper les...</div>
<div style="left:1262px;top:521px;width:88px;height:308px;background:#404040;"></div>
<div style="left:1350px;top:521px;width:15px;height:308px;background:#464646;"></div>
<div style="left:1350px;top:523px;width:14px;height:15px;background:#595959;border-radius:2px;"></div>
<svg style="left:1352px;top:526px;color:#c8c8c8;stroke-width:1.200" width="10" height="9" viewBox="0 0 10 9"><path d="M2 6.500l3-3 3 3"/></svg>
<div style="left:1351px;top:541px;width:13px;height:104px;background:#5a5a5a;border-radius:6px;"></div>
<div style="left:1350px;top:813px;width:14px;height:15px;background:#595959;border-radius:2px;"></div>
<svg style="left:1352px;top:816px;color:#c8c8c8;stroke-width:1.200" width="10" height="9" viewBox="0 0 10 9"><path d="M2 3l3 3 3-3"/></svg>
<div class="t" style="left:1268px;top:530.0px;height:22px;line-height:22px;font-size:15px;color:#e2e2e2;letter-spacing:-0.63px;">Type</div>
<div class="t" style="left:1267px;top:651.0px;height:22px;line-height:22px;font-size:15px;color:#e2e2e2;letter-spacing:-0.74px;">Balise par ...</div>
<div class="t" style="left:1267px;top:778.0px;height:22px;line-height:22px;font-size:15px;color:#e2e2e2;letter-spacing:-0.72px;">Balise utilis...</div>
<div style="left:1266px;top:555px;width:84px;height:26px;background:#4d4d4d;clip-path:polygon(4px 0,100% 0,100% 100%,4px 100%,0 75%,2px 50%,0 25%);"></div>
<div class="t" style="left:1276px;top:557px;width:74px;height:22px;line-height:22px;font-size:15px;color:#e0e0e0;overflow:hidden;letter-spacing:-0.85px;">Matériau créé</div>
<div style="left:1266px;top:586px;width:84px;height:26px;background:#4d4d4d;clip-path:polygon(4px 0,100% 0,100% 100%,4px 100%,0 75%,2px 50%,0 25%);"></div>
<div class="t" style="left:1278px;top:588px;width:72px;height:22px;line-height:22px;font-size:15px;color:#e0e0e0;overflow:hidden;letter-spacing:-0.85px;">Matériau télé</div>
<div style="left:1266px;top:617px;width:84px;height:26px;background:#4d4d4d;clip-path:polygon(4px 0,100% 0,100% 100%,4px 100%,0 75%,2px 50%,0 25%);"></div>
<div class="t" style="left:1278px;top:619px;width:72px;height:22px;line-height:22px;font-size:15px;color:#e0e0e0;overflow:hidden;letter-spacing:-0.85px;">Matériaux su</div>
<div style="left:1266px;top:682px;width:84px;height:26px;background:#4d4d4d;clip-path:polygon(4px 0,100% 0,100% 100%,4px 100%,0 75%,2px 50%,0 25%);"></div>
<div class="t" style="left:1275px;top:684px;width:75px;height:22px;line-height:22px;font-size:15px;color:#e0e0e0;overflow:hidden;letter-spacing:-0.85px;">Matériau d'im</div>
<div style="left:1266px;top:713px;width:84px;height:26px;background:#4d4d4d;clip-path:polygon(4px 0,100% 0,100% 100%,4px 100%,0 75%,2px 50%,0 25%);"></div>
<div class="t" style="left:1279px;top:715px;width:71px;height:22px;line-height:22px;font-size:15px;color:#e0e0e0;overflow:hidden;letter-spacing:-0.85px;">Outil de pinc</div>
<div style="left:1266px;top:744px;width:84px;height:26px;background:#4d4d4d;clip-path:polygon(4px 0,100% 0,100% 100%,4px 100%,0 75%,2px 50%,0 25%);"></div>
<div class="t" style="left:1286px;top:746px;width:64px;height:22px;line-height:22px;font-size:15px;color:#e0e0e0;overflow:hidden;letter-spacing:-0.85px;">Texture de</div>
<div style="left:1266px;top:803px;width:79px;height:26px;background:#4d4d4d;clip-path:polygon(4px 0,100% 0,100% 100%,4px 100%,0 75%,2px 50%,0 25%);"></div>
<div class="t" style="left:1276px;top:805px;width:69px;height:24px;line-height:22px;font-size:15px;color:#e0e0e0;overflow:hidden;letter-spacing:-0.85px;">Deamond</div>
<div style="left:1266px;top:829px;width:100px;height:1px;background:#3c3c3c;"></div>
<div style="left:1370px;top:114px;width:84px;height:715px;background:#3c3c3c;"></div>
<div style="left:1454px;top:114px;width:15px;height:715px;background:#464646;"></div>
<div style="left:1454px;top:115px;width:14px;height:15px;background:#595959;border-radius:2px;"></div>
<svg style="left:1456px;top:118px;color:#c8c8c8;stroke-width:1.200" width="10" height="9" viewBox="0 0 10 9"><path d="M2 6.500l3-3 3 3"/></svg>
<div style="left:1455px;top:133px;width:13px;height:51px;background:#5a5a5a;border-radius:6px;"></div>
<div style="left:1454px;top:813px;width:14px;height:15px;background:#595959;border-radius:2px;"></div>
<svg style="left:1456px;top:816px;color:#c8c8c8;stroke-width:1.200" width="10" height="9" viewBox="0 0 10 9"><path d="M2 3l3 3 3-3"/></svg>
<div style="left:1261px;top:830px;width:208px;height:168px;background:#505050;"></div>
<svg style="left:1354px;top:832px;color:#aaa;stroke-width:1;stroke-linecap:butt" width="20" height="3" viewBox="0 0 20 3"><path d="M0 1.500h18" stroke-dasharray="1 2"/></svg>
<div style="left:1264px;top:848px;width:122px;height:112px;background:#4e4e4e;border:1px solid #2e2e2e;"></div>
<div style="left:1264px;top:972px;width:26px;height:26px;background:#65718d;border-radius:2px;"></div>
<div style="left:1290px;top:972px;width:34px;height:26px;background:#636363;border:1px solid #808080;border-radius:2px;"></div>
<div style="left:1329px;top:975px;width:1px;height:22px;background:#6e6e6e;"></div>
<div style="left:1389px;top:975px;width:1px;height:22px;background:#6e6e6e;"></div>
<div style="left:1469px;top:88px;width:3px;height:910px;background:#333;"></div>
<div style="left:1472px;top:88px;width:208px;height:226px;background:#3a3a3a;"></div>
<div style="left:1472px;top:88px;width:22px;height:20px;background:#404040;"></div>
<svg style="left:1478px;top:93px;color:#8e8e8e;stroke-width:1;stroke-linecap:butt" width="10" height="10" viewBox="0 0 10 10"><path d="M0 .5h9M0 4.500h9M0 8.500h9"/></svg>
<div style="left:1494px;top:88px;width:70px;height:21px;background:#505050;"></div>
<div style="left:1565px;top:89px;width:37px;height:19px;background:#4a4a4a;border:1px solid #5c5c5c;border-bottom:none;"></div>
<div style="left:1603px;top:89px;width:37px;height:19px;background:#4a4a4a;border:1px solid #5c5c5c;border-bottom:none;"></div>
<div style="left:1641px;top:89px;width:37px;height:19px;background:#4a4a4a;border:1px solid #5c5c5c;border-bottom:none;"></div>
<div style="left:1472px;top:108px;width:208px;height:6px;background:#505050;"></div>
<div class="t" style="left:1530px;top:91px;width:33px;height:20px;line-height:20px;font-size:13px;color:#e4e4e4;overflow:hidden;letter-spacing:.3px;-webkit-mask-image:linear-gradient(to right,#000 55%,rgba(0,0,0,.2));">Navigateur</div>
<div style="left:1472px;top:114px;width:208px;height:147px;background:#2e2e2e;"></div>
<div style="left:1503px;top:115px;width:144px;height:144px;background:#aaaaaa;"></div>
<div style="left:1510px;top:100px;width:146px;height:137px;border:1.500px solid #e01010;clip-path:inset(15px 0 0 0);"></div>
<div style="left:1472px;top:261px;width:208px;height:53px;background:#505050;"></div>
<div style="left:1476px;top:267px;width:69px;height:18px;background:#4f4f4f;border:1px solid #7a7a7a;"></div>
<svg style="left:1477px;top:268px;stroke:none" width="67" height="16" viewBox="0 0 67 16"><polygon points="0,16 67,0 67,16" fill="#2d2d2d"/></svg>
<div class="t" style="left:1478px;top:268.0px;height:16px;line-height:16px;font-size:13px;color:#e6e6e6;letter-spacing:-0.58px;">76.2</div>
<div style="left:1513px;top:264px;width:5px;height:24px;background:#67728c;border:1px solid #4d5568;"></div>
<div style="left:1476px;top:292px;width:69px;height:18px;background:#4f4f4f;border:1px solid #7a7a7a;"></div>
<svg style="left:1477px;top:293px;stroke:none" width="67" height="16" viewBox="0 0 67 16"><path d="M0 16C14 16 24 0 38 0C50 0 58 8 67 13L67 16Z" fill="#2d2d2d"/></svg>
<div class="t" style="left:1480px;top:293.0px;height:16px;line-height:16px;font-size:13px;color:#e6e6e6;letter-spacing:-0.36px;">0.0</div>
<div style="left:1509px;top:289px;width:5px;height:24px;background:#7a7a7a;border:1px solid #555;"></div>
<div style="left:1627px;top:266px;width:1px;height:44px;background:#6e6e6e;"></div>
<div style="left:1472px;top:314px;width:208px;height:5px;background:#363636;"></div>
<div style="left:1472px;top:319px;width:208px;height:52px;background:#3a3a3a;"></div>
<div style="left:1472px;top:319px;width:22px;height:20px;background:#404040;"></div>
<svg style="left:1478px;top:325px;color:#8e8e8e;stroke-width:1;stroke-linecap:butt" width="10" height="10" viewBox="0 0 10 10"><path d="M0 .5h9M0 4.500h9M0 8.500h9"/></svg>
<div style="left:1494px;top:319px;width:108px;height:21px;background:#505050;"></div>
<div style="left:1603px;top:320px;width:37px;height:19px;background:#4a4a4a;border:1px solid #5c5c5c;border-bottom:none;"></div>
<div style="left:1641px;top:320px;width:37px;height:19px;background:#4a4a4a;border:1px solid #5c5c5c;border-bottom:none;"></div>
<div style="left:1472px;top:339px;width:208px;height:7px;background:#505050;"></div>
<div class="t" style="left:1530px;top:321px;width:70px;height:20px;line-height:20px;font-size:13px;color:#e4e4e4;overflow:hidden;letter-spacing:.25px;-webkit-mask-image:linear-gradient(to right,#000 70%,rgba(0,0,0,.3));">Propriété du calque</div>
<div style="left:1472px;top:346px;width:208px;height:20px;background:#404040;"></div>
<div style="left:1476px;top:355px;width:6px;height:1px;background:#8a8a8a;"></div>
<div style="left:1512px;top:355px;width:150px;height:1px;background:#8a8a8a;"></div>
<div class="t" style="left:1483px;top:345.5px;height:19px;line-height:19px;font-size:13px;color:#e4e4e4;letter-spacing:-0.10px;">Effet</div>
<div style="left:1664px;top:346px;width:14px;height:20px;background:#555;border-radius:2px;"></div>
<svg style="left:1666px;top:348px;color:#c8c8c8;stroke-width:1.200" width="10" height="16" viewBox="0 0 10 16"><path d="M2 6l3-3 3 3M2 10l3 3 3-3"/></svg>
<div style="left:1472px;top:366px;width:208px;height:3px;background:#404040;"></div>
<div style="left:1558px;top:367px;width:100px;height:2px;background:#5c5c5c;border-radius:2px 2px 0 0;"></div>
<div style="left:1472px;top:369px;width:208px;height:5px;background:#363636;"></div>
<div style="left:1472px;top:374px;width:208px;height:151px;background:#3a3a3a;"></div>
<div style="left:1472px;top:374px;width:22px;height:20px;background:#404040;"></div>
<svg style="left:1478px;top:380px;color:#8e8e8e;stroke-width:1;stroke-linecap:butt" width="10" height="10" viewBox="0 0 10 10"><path d="M0 .5h9M0 4.500h9M0 8.500h9"/></svg>
<div style="left:1494px;top:374px;width:146px;height:21px;background:#505050;"></div>
<div style="left:1472px;top:394px;width:208px;height:5px;background:#505050;"></div>
<div class="t" style="left:1530px;top:376.5px;height:19px;line-height:19px;font-size:13px;color:#e4e4e4;letter-spacing:-0.35px;">Action automatique</div>
<div style="left:1472px;top:398px;width:208px;height:27px;background:#505050;"></div>
<div style="left:1472px;top:399px;width:152px;height:24px;background:#626262;border:1px solid #858585;border-radius:2px;"></div>
<div class="t" style="left:1509px;top:399.5px;height:21px;line-height:21px;font-size:14px;color:#e4e4e4;letter-spacing:-0.26px;">Par défaut</div>
<svg style="left:1607px;top:405px;color:#e0e0e0;stroke-width:1.300" width="14" height="12" viewBox="0 0 14 12"><path d="M2 3l5 5 5-5"/></svg>
<div style="left:1472px;top:426px;width:192px;height:72px;background:#404040;"></div>
<div style="left:1664px;top:426px;width:16px;height:72px;background:#464646;"></div>
<div style="left:1472px;top:456px;width:192px;height:1px;background:#2e2e2e;"></div>
<div style="left:1472px;top:485px;width:192px;height:1px;background:#2e2e2e;"></div>
<div style="left:1477px;top:433px;width:18px;height:18px;background:#555;border:1px solid #7c7c7c;border-radius:2px;clip-path:inset(0 0 0px 0);"></div>
<svg style="left:1479px;top:435px;color:#f0f0f0;stroke-width:2;clip-path:inset(0 0 0px 0);" width="14" height="14" viewBox="0 0 14 14"><path d="M2.500 7.500l3 3.500 6-8"/></svg>
<div style="left:1505px;top:433px;width:18px;height:18px;background:#555;border:1px solid #7c7c7c;border-radius:2px;clip-path:inset(0 0 0px 0);"></div>
<svg style="left:1537px;top:434px;color:#dcdcdc;stroke-width:1.500;clip-path:inset(0 0 0px 0);" width="12" height="16" viewBox="0 0 12 16"><path d="M2 1l8 7-8 7"/></svg>
<div class="t" style="left:1560px;top:431.0px;height:22px;line-height:22px;font-size:14px;color:#e4e4e4;letter-spacing:-0.33px;">Créer le calque b</div>
<div style="left:1477px;top:461px;width:18px;height:18px;background:#555;border:1px solid #7c7c7c;border-radius:2px;clip-path:inset(0 0 0px 0);"></div>
<svg style="left:1479px;top:463px;color:#f0f0f0;stroke-width:2;clip-path:inset(0 0 0px 0);" width="14" height="14" viewBox="0 0 14 14"><path d="M2.500 7.500l3 3.500 6-8"/></svg>
<div style="left:1505px;top:461px;width:18px;height:18px;background:#555;border:1px solid #7c7c7c;border-radius:2px;clip-path:inset(0 0 0px 0);"></div>
<svg style="left:1537px;top:462px;color:#dcdcdc;stroke-width:1.500;clip-path:inset(0 0 0px 0);" width="12" height="16" viewBox="0 0 12 16"><path d="M2 1l8 7-8 7"/></svg>
<div class="t" style="left:1560px;top:459.0px;height:22px;line-height:22px;font-size:14px;color:#e4e4e4;letter-spacing:-0.56px;">Créer un calque c</div>
<div style="left:1477px;top:490px;width:18px;height:18px;background:#555;border:1px solid #7c7c7c;border-radius:2px;clip-path:inset(0 0 12px 0);"></div>
<svg style="left:1479px;top:492px;color:#f0f0f0;stroke-width:2;clip-path:inset(0 0 10px 0);" width="14" height="14" viewBox="0 0 14 14"><path d="M2.500 7.500l3 3.500 6-8"/></svg>
<div style="left:1505px;top:490px;width:18px;height:18px;background:#555;border:1px solid #7c7c7c;border-radius:2px;clip-path:inset(0 0 12px 0);"></div>
<svg style="left:1537px;top:491px;color:#dcdcdc;stroke-width:1.500;clip-path:inset(0 0 11px 0);" width="12" height="16" viewBox="0 0 12 16"><path d="M2 1l8 7-8 7"/></svg>
<div class="t" style="left:1560px;top:488px;width:101px;height:9px;line-height:22px;font-size:14px;color:#e4e4e4;overflow:hidden;letter-spacing:-0.3px;">Créer un dossier</div>
<div style="left:1664px;top:428px;width:14px;height:15px;background:#595959;border-radius:2px;"></div>
<svg style="left:1666px;top:431px;color:#c8c8c8;stroke-width:1.200" width="10" height="9" viewBox="0 0 10 9"><path d="M2 6.500l3-3 3 3"/></svg>
<div style="left:1666px;top:444px;width:12px;height:13px;background:#5c5c5c;border-radius:6px;"></div>
<div style="left:1664px;top:483px;width:14px;height:15px;background:#595959;border-radius:2px;"></div>
<svg style="left:1666px;top:486px;color:#c8c8c8;stroke-width:1.200" width="10" height="9" viewBox="0 0 10 9"><path d="M2 3l3 3 3-3"/></svg>
<div style="left:1472px;top:498px;width:208px;height:27px;background:#505050;"></div>
<div style="left:1472px;top:525px;width:208px;height:4px;background:#363636;"></div>
<div style="left:1472px;top:529px;width:208px;height:469px;background:#3a3a3a;"></div>
<div style="left:1472px;top:529px;width:22px;height:20px;background:#404040;"></div>
<svg style="left:1478px;top:535px;color:#8e8e8e;stroke-width:1;stroke-linecap:butt" width="10" height="10" viewBox="0 0 10 10"><path d="M0 .5h9M0 4.500h9M0 8.500h9"/></svg>
<div style="left:1494px;top:529px;width:77px;height:21px;background:#505050;"></div>
<div style="left:1572px;top:530px;width:97px;height:19px;background:#4a4a4a;border:1px solid #5c5c5c;border-bottom:none;"></div>
<div style="left:1472px;top:549px;width:208px;height:5px;background:#505050;"></div>
<div class="t" style="left:1530px;top:531.5px;height:19px;line-height:19px;font-size:13px;color:#e4e4e4;letter-spacing:-0.87px;">Calque</div>
<div class="t" style="left:1609px;top:531.5px;height:19px;line-height:19px;font-size:13px;color:#7c7c7c;letter-spacing:-0.35px;">Historique</div>
<div style="left:1472px;top:553px;width:208px;height:82px;background:#505050;"></div>
<div style="left:1472px;top:553px;width:49px;height:25px;background:#626262;border:1px solid #858585;border-radius:2px;"></div>
<div style="left:1477px;top:557px;width:20px;height:17px;background:#555;border:1.500px solid #9a9a9a;border-radius:2px;"></div>
<svg style="left:1503px;top:559px;color:#e0e0e0;stroke-width:1.300" width="14" height="12" viewBox="0 0 14 12"><path d="M2 3l5 5 5-5"/></svg>
<div style="left:1525px;top:553px;width:50px;height:25px;background:#626262;border:1px solid #858585;border-radius:2px;"></div>
<div class="t" style="left:1529px;top:555px;width:30px;height:20px;line-height:20px;font-size:14px;color:#9a9a9a;overflow:hidden;transform:scaleX(.8);transform-origin:0 50%;-webkit-mask-image:linear-gradient(to right,#000 60%,rgba(0,0,0,.2));">Normal</div>
<svg style="left:1558px;top:559px;color:#e0e0e0;stroke-width:1.300" width="14" height="12" viewBox="0 0 14 12"><path d="M2 3l5 5 5-5"/></svg>
<div style="left:1582px;top:559px;width:52px;height:11px;background-color:#fff;background-image:linear-gradient(45deg,#c8c8c8 25%,transparent 25%,transparent 75%,#c8c8c8 75%),linear-gradient(45deg,#c8c8c8 25%,transparent 25%,transparent 75%,#c8c8c8 75%);background-size:12px 12px;background-position:0 0,6px 6px;"></div>
<div style="left:1582px;top:559px;width:52px;height:11px;background:linear-gradient(to right,rgba(214,214,214,0) 10%,rgba(214,214,214,.95) 95%);"></div>
<div style="left:1632px;top:553px;width:4px;height:25px;background:#8a8a8a;border:1px solid #5a5a5a;"></div>
<div class="t" style="left:1641px;top:555.5px;height:19px;line-height:19px;font-size:13px;color:#e6e6e6;letter-spacing:-0.23px;">100</div>
<svg style="left:1664px;top:557px;color:#d0d0d0;stroke-width:1.200" width="10" height="16" viewBox="0 0 10 16"><path d="M1.500 6l3.500-3.500 3.500 3.500M1.500 10l3.500 3.500 3.500-3.500"/></svg>
<div style="left:1597px;top:581px;width:40px;height:25px;background:#4a4a4a;border-radius:2px;"></div>
<div style="left:1638px;top:581px;width:40px;height:25px;background:#4a4a4a;border-radius:2px;"></div>
<div style="left:1472px;top:636px;width:191px;height:258px;background:#404040;"></div>
<div style="left:1472px;top:894px;width:208px;height:104px;background:#404040;"></div>
<div style="left:1663px;top:636px;width:17px;height:258px;background:#3e3e3e;"></div>
<div style="left:1521px;top:636px;width:142px;height:43px;background:#5f6a84;"></div>
<div style="left:1472px;top:678px;width:191px;height:1px;background:#2c2c2c;"></div>
<div style="left:1496px;top:636px;width:1px;height:43px;background:#2c2c2c;"></div>
<div style="left:1520px;top:636px;width:1px;height:43px;background:#2c2c2c;"></div>
<div style="left:1526px;top:638px;width:40px;height:39px;border:1px solid #c8d0e6;"></div>
<div style="left:1529px;top:641px;width:34px;height:33px;border:1px solid #2a2a2a;background-color:#fff;background-image:linear-gradient(45deg,#d2d2d2 25%,transparent 25%,transparent 75%,#d2d2d2 75%),linear-gradient(45deg,#d2d2d2 25%,transparent 25%,transparent 75%,#d2d2d2 75%);background-size:10px 10px;background-position:0 0,5px 5px;"></div>
<svg style="left:1474px;top:650px;color:#cfcfcf;" width="20" height="14" viewBox="0 0 20 14"><path d="M1 7.500c4-6 13-6 17 0" stroke-width="1.900"/><path d="M1 7.500c4 5 13 5 17 0" stroke-width="1.200"/><circle cx="9.500" cy="7.300" r="3.300" class="f"/></svg>
<svg style="left:1498px;top:646px;" width="22" height="24" viewBox="0 0 22 24"><path d="M5.500 14l10-10 2.500 2.500-10 10-3.500 1z" class="f" style="fill:#c4c4c4"/><path d="M2.500 20.500h15" stroke="#c4c4c4" stroke-width="1.300"/></svg>
<div class="t" style="left:1573px;top:638.5px;height:19px;line-height:19px;font-size:13px;color:#e6e6e6;letter-spacing:-0.03px;">100 % Normal</div>
<div class="t" style="left:1573px;top:656px;width:121px;height:20px;line-height:20px;font-size:14px;color:#e6e6e6;overflow:hidden;transform:scaleX(.73);transform-origin:0 50%;">Yeux, lignes finales</div>
<div style="left:1472px;top:721px;width:191px;height:1px;background:#2c2c2c;"></div>
<div style="left:1496px;top:679px;width:1px;height:43px;background:#2c2c2c;"></div>
<div style="left:1520px;top:679px;width:1px;height:43px;background:#2c2c2c;"></div>
<div style="left:1529px;top:684px;width:34px;height:33px;border:1px solid #2a2a2a;background-color:#fff;background-image:linear-gradient(45deg,#d2d2d2 25%,transparent 25%,transparent 75%,#d2d2d2 75%),linear-gradient(45deg,#d2d2d2 25%,transparent 25%,transparent 75%,#d2d2d2 75%);background-size:10px 10px;background-position:0 0,5px 5px;"></div>
<svg style="left:1474px;top:693px;color:#cfcfcf;" width="20" height="14" viewBox="0 0 20 14"><path d="M1 7.500c4-6 13-6 17 0" stroke-width="1.900"/><path d="M1 7.500c4 5 13 5 17 0" stroke-width="1.200"/><circle cx="9.500" cy="7.300" r="3.300" class="f"/></svg>
<div style="left:1501px;top:694px;width:14px;height:14px;border:1px solid #5a5a5a;border-radius:2px;"></div>
<div class="t" style="left:1573px;top:681.5px;height:19px;line-height:19px;font-size:13px;color:#e6e6e6;letter-spacing:-0.03px;">100 % Normal</div>
<div class="t" style="left:1573px;top:698.5px;height:21px;line-height:21px;font-size:14px;color:#e6e6e6;letter-spacing:-0.33px;">Lignes finales</div>
<div style="left:1472px;top:764px;width:191px;height:1px;background:#2c2c2c;"></div>
<div style="left:1496px;top:722px;width:1px;height:43px;background:#2c2c2c;"></div>
<div style="left:1520px;top:722px;width:1px;height:43px;background:#2c2c2c;"></div>
<div style="left:1529px;top:727px;width:34px;height:33px;border:1px solid #2a2a2a;background-color:#fff;background-image:linear-gradient(45deg,#d2d2d2 25%,transparent 25%,transparent 75%,#d2d2d2 75%),linear-gradient(45deg,#d2d2d2 25%,transparent 25%,transparent 75%,#d2d2d2 75%);background-size:10px 10px;background-position:0 0,5px 5px;"></div>
<div style="left:1476px;top:737px;width:14px;height:14px;border:1px solid #5a5a5a;border-radius:2px;"></div>
<div style="left:1501px;top:737px;width:14px;height:14px;border:1px solid #5a5a5a;border-radius:2px;"></div>
<div class="t" style="left:1573px;top:724.5px;height:19px;line-height:19px;font-size:13px;color:#e6e6e6;letter-spacing:-0.03px;">100 % Normal</div>
<div class="t" style="left:1573px;top:741.5px;height:21px;line-height:21px;font-size:14px;color:#e6e6e6;letter-spacing:-0.38px;">Calque 2</div>
<div style="left:1472px;top:807px;width:191px;height:1px;background:#2c2c2c;"></div>
<div style="left:1496px;top:765px;width:1px;height:43px;background:#2c2c2c;"></div>
<div style="left:1520px;top:765px;width:1px;height:43px;background:#2c2c2c;"></div>
<div style="left:1529px;top:770px;width:34px;height:33px;border:1px solid #2a2a2a;background-color:#fff;background-image:linear-gradient(45deg,#d2d2d2 25%,transparent 25%,transparent 75%,#d2d2d2 75%),linear-gradient(45deg,#d2d2d2 25%,transparent 25%,transparent 75%,#d2d2d2 75%);background-size:10px 10px;background-position:0 0,5px 5px;"></div>
<svg style="left:1474px;top:779px;color:#cfcfcf;" width="20" height="14" viewBox="0 0 20 14"><path d="M1 7.500c4-6 13-6 17 0" stroke-width="1.900"/><path d="M1 7.500c4 5 13 5 17 0" stroke-width="1.200"/><circle cx="9.500" cy="7.300" r="3.300" class="f"/></svg>
<div style="left:1501px;top:780px;width:14px;height:14px;border:1px solid #5a5a5a;border-radius:2px;"></div>
<div class="t" style="left:1573px;top:767.5px;height:19px;line-height:19px;font-size:13px;color:#e6e6e6;letter-spacing:-0.01px;">60 % Normal</div>
<div class="t" style="left:1573px;top:785px;width:121px;height:20px;line-height:20px;font-size:14px;color:#e6e6e6;overflow:hidden;transform:scaleX(.73);transform-origin:0 50%;-webkit-mask-image:linear-gradient(to right,#000 85%,rgba(0,0,0,.3));">Proportions de bas</div>
<div style="left:1472px;top:850px;width:191px;height:1px;background:#2c2c2c;"></div>
<div style="left:1496px;top:808px;width:1px;height:43px;background:#2c2c2c;"></div>
<div style="left:1520px;top:808px;width:1px;height:43px;background:#2c2c2c;"></div>
<div style="left:1529px;top:813px;width:34px;height:33px;background:#aaaaaa;border:1px solid #2a2a2a;"></div>
<svg style="left:1474px;top:822px;color:#cfcfcf;" width="20" height="14" viewBox="0 0 20 14"><path d="M1 7.500c4-6 13-6 17 0" stroke-width="1.900"/><path d="M1 7.500c4 5 13 5 17 0" stroke-width="1.200"/><circle cx="9.500" cy="7.300" r="3.300" class="f"/></svg>
<div style="left:1501px;top:823px;width:14px;height:14px;border:1px solid #5a5a5a;border-radius:2px;"></div>
<div class="t" style="left:1573px;top:810.5px;height:19px;line-height:19px;font-size:13px;color:#e6e6e6;letter-spacing:-0.03px;">100 % Normal</div>
<div class="t" style="left:1573px;top:827.5px;height:21px;line-height:21px;font-size:14px;color:#e6e6e6;letter-spacing:-0.38px;">Calque 1</div>
<div style="left:1472px;top:893px;width:191px;height:1px;background:#2c2c2c;"></div>
<div style="left:1496px;top:851px;width:1px;height:43px;background:#2c2c2c;"></div>
<div style="left:1520px;top:851px;width:1px;height:43px;background:#2c2c2c;"></div>
<div style="left:1529px;top:856px;width:34px;height:33px;background:#fff;border:1px solid #2a2a2a;"></div>
<svg style="left:1474px;top:865px;color:#cfcfcf;" width="20" height="14" viewBox="0 0 20 14"><path d="M1 7.500c4-6 13-6 17 0" stroke-width="1.900"/><path d="M1 7.500c4 5 13 5 17 0" stroke-width="1.200"/><circle cx="9.500" cy="7.300" r="3.300" class="f"/></svg>
<div style="left:1501px;top:866px;width:14px;height:14px;border:1px solid #5a5a5a;border-radius:2px;"></div>
<div style="left:1579px;top:857px;width:20px;height:21px;background:#fff;border:1px solid #2a2a2a;border-radius:2px;"></div>
<svg style="left:1581px;top:859px;" width="16" height="17" viewBox="0 0 16 17"><path d="M3.500 1.500h9a1.500 1.500 0 0 1 1.500 1.500v11a1.500 1.500 0 0 1-1.500 1.500h-6l-4.500-4.500v-8a1.500 1.500 0 0 1 1.500-1.500z" stroke="#333" stroke-width="1.300"/><path d="M2 11h4.500v4.500z" class="f" style="fill:#333"/></svg>
<div class="t" style="left:1605px;top:870.5px;height:21px;line-height:21px;font-size:14px;color:#e6e6e6;letter-spacing:-0.08px;">Papier</div>
<svg style="left:11px;top:115px;color:#c0c0c0;stroke-width:1.5" width="28" height="28" viewBox="0 0 28 28"><circle cx="11.500" cy="11" r="8.800"/><path d="M18 17.500l6.500 6" stroke-width="2"/></svg>
<svg style="left:11px;top:146px;color:#c0c0c0;stroke-width:1.5" width="28" height="28" viewBox="0 0 28 28"><path d="M3 8.500l7.500-4 7 3.500v6M3 8.500v9l7 4 2-1M3 8.500l7 3.500 7.500-4M10 12v9.500" stroke-width="1.300"/><path class="f" d="M15.500 13.500l11 5-4.500 1.500 3 4.500-2.200 1.400-3-4.600-3 3.200z"/></svg>
<svg style="left:11px;top:177px;color:#c0c0c0;stroke-width:1.5" width="28" height="28" viewBox="0 0 28 28"><path d="M14 4v20M4 14h20" stroke-width="1.800"/><path class="f" d="M14 1l4 5h-8zM14 27l4-5h-8zM1 14l5-4v8zM27 14l-5-4v8z"/></svg>
<svg style="left:11px;top:207px;color:#c0c0c0;stroke-width:1.5" width="28" height="28" viewBox="0 0 28 28"><circle cx="12.500" cy="15" r="8.500" stroke-dasharray="0.100 4.350" stroke-width="2"/><path d="M12.500 5.500a9 9 0 0 1 9 7" stroke-width="1.700"/><path class="f" d="M17.500 12l9-.5-4.500 6z"/></svg>
<svg style="left:11px;top:238px;color:#c0c0c0;stroke-width:1.5" width="28" height="28" viewBox="0 0 28 28"><rect x="4" y="4" width="20" height="20" stroke-dasharray="3.200 1.800" stroke-width="1.200" stroke-linecap="butt"/></svg>
<svg style="left:11px;top:269px;color:#c0c0c0;stroke-width:1.5" width="28" height="28" viewBox="0 0 28 28"><path d="M3 25l12-12" stroke-width="1.600"/><path class="f" d="M17 2.500l1.700 6 5.800-3-3.700 5.200 6.200 1.800-6.300 1.200 3 5.600-5.500-3.600-2 5.800-.8-6.200-5.900 1.500 4.700-4-4.700-4.300 6.200 1.200z"/></svg>
<svg style="left:11px;top:300px;color:#c0c0c0;stroke-width:1.5" width="28" height="28" viewBox="0 0 28 28"><path d="M3.500 25l1.500-5 11-11 3.500 3.500-11 11z" stroke-width="1.400"/><path class="f" d="M3.500 25l1.500-5 5 3.500z"/><path class="f" d="M14.500 7l2-2 2 1.500 3-3.500a2.600 2.600 0 0 1 4 3.500l-3.500 3 1.500 2-2 2z"/></svg>
<svg style="left:11px;top:335px;color:#c0c0c0;stroke-width:1.5" width="28" height="28" viewBox="0 0 28 28"><path d="M3 25c1-7 5-13 12-16l5 5c-3 7-9 11-17 11z" stroke-width="1.500"/><path d="M4 24l8.500-8.500" stroke-width="1.300"/><path class="f" d="M16.500 6.500l3.500-3.500 6 6-3.500 3.500z"/></svg>
<svg style="left:11px;top:365px;color:#c0c0c0;stroke-width:1.5" width="28" height="28" viewBox="0 0 28 28"><path d="M3 25l3.500-11 8.500-8 6 6-8 8.500z" stroke-width="1.500"/><path class="f" d="M3 25l2-6.500 4.500 4.500zM12.500 8l3.500-3.500a3 3 0 0 1 4 0l3 3a3 3 0 0 1 0 4l-3.500 3.500-1.500-3-2.500 1-.5-3z"/></svg>
<svg style="left:11px;top:397px;color:#c0c0c0;stroke-width:1.5" width="28" height="28" viewBox="0 0 28 28"><path class="f" d="M3 25.500c1-8 4-12 10-14 3 .5 4.500 2 5 5-2.500 5.500-7 8.500-15 9z"/><path d="M13 11.500l6-6.500 4.500 4.500-6 6.500" stroke-width="1.500"/><path class="f" d="M20.500 3.500l2.500-2 4 4-2 2.500z"/><path d="M8 19l2-3 1 2.500 2.500-2.500" stroke="#474747" stroke-width="1.100"/></svg>
<svg style="left:11px;top:428px;color:#c0c0c0;stroke-width:1.5" width="28" height="28" viewBox="0 0 28 28"><path d="M10.500 16.500h13a2 2 0 0 1 2 2v5a2 2 0 0 1-2 2h-13a2 2 0 0 1-2-2v-5a2 2 0 0 1 2-2z" stroke-width="1.500"/><path class="f" d="M8.500 18a2.500 2.500 0 0 1 2.500-2.500h12a2.500 2.500 0 0 1 2.500 2.500v1.500h-17zM14.500 15.500v-2.500h1.500v-3.500h4v3.500h1.500v2.500z"/><path class="f" d="M12 11h2.500v2h-2.500z"/><g class="f"><circle cx="3" cy="3.500" r=".9"/><circle cx="3" cy="7" r=".9"/><circle cx="3" cy="10.500" r=".9"/><circle cx="3" cy="14" r=".9"/><circle cx="6" cy="5.200" r=".9"/><circle cx="6" cy="8.700" r=".9"/><circle cx="6" cy="12.200" r=".9"/><circle cx="9" cy="7" r=".9"/><circle cx="9" cy="10.500" r=".9"/><circle cx="11.500" cy="9" r=".8"/></g></svg>
<svg style="left:11px;top:460px;color:#c0c0c0;stroke-width:1.5" width="28" height="28" viewBox="0 0 28 28"><path class="f" d="M14 4c3 5 3.500 13 1.500 20h-3c-2-7-1.500-15 1.500-20zM3 10c5 3 7.500 8 8 14h-2.500c-.5-5-2-10-5.500-14zM25 10c-5 3-7.500 8-8 14h2.500c.5-5 2-10 5.500-14zM1.500 16c3.500 1.500 5.500 4.500 6 8h-2c-.5-3-1.500-5.500-4-8zM26.500 16c-3.500 1.500-5.500 4.500-6 8h2c.5-3 1.500-5.500 4-8z"/></svg>
<svg style="left:11px;top:490px;color:#c0c0c0;stroke-width:1.5" width="28" height="28" viewBox="0 0 28 28"><path class="f" d="M14.500 2.500l10.500 8.500-7.500 8.500-11-8.500z" fill="#d4d4d4"/><path d="M6.500 11.500l-3.500 4.500a1.800 1.800 0 0 0 .3 2.600l6 4.600a1.800 1.800 0 0 0 2.500-.3l5.700-6.400" stroke="#d4d4d4" stroke-width="1.400"/><path d="M9.500 24h13.500" stroke="#d4d4d4" stroke-width="1.500"/></svg>
<svg style="left:11px;top:521px;color:#c0c0c0;stroke-width:1.5" width="28" height="28" viewBox="0 0 28 28"><defs><linearGradient id="bd" x1="0" y1="0" x2="1" y2="0"><stop offset="0" stop-color="#d0d0d0"/><stop offset="1" stop-color="#8a8a8a"/></linearGradient></defs><path d="M9 3c3 5 6.500 9 6.500 14a6.500 6.500 0 0 1-13 0c0-5 3.500-9 6.500-14zM19 3c3 5 6.500 9 6.500 14a6.500 6.500 0 0 1-13 0c0-5 3.500-9 6.500-14z" fill="url(#bd)" stroke="#c6c6c6" stroke-width="1"/></svg>
<svg style="left:11px;top:556px;color:#c0c0c0;stroke-width:1.5" width="28" height="28" viewBox="0 0 28 28"><path class="f" d="M14 2l12 11-11.500 11.500-9.500-9c-1.500 1-2 2.500-1.500 5.500-3-2.500-3-7 1-9.500z"/><path d="M6.500 12.500h15l-7.500-7z" class="f" style="fill:#474747"/></svg>
<svg style="left:11px;top:586px;color:#c0c0c0;stroke-width:1.5" width="28" height="28" viewBox="0 0 28 28"><defs><linearGradient id="gr" x1="1" y1="0" x2="0" y2="1"><stop offset="0" stop-color="#555"/><stop offset="1" stop-color="#cfcfcf"/></linearGradient></defs><rect x="4.500" y="4.500" width="19" height="19" rx="2" fill="url(#gr)" stroke="#c6c6c6" stroke-width="1.300"/></svg>
<svg style="left:11px;top:617px;color:#c0c0c0;stroke-width:1.5" width="28" height="28" viewBox="0 0 28 28"><path d="M2.500 25c11 0 21-8 22-22" stroke-width="1.700"/></svg>
<svg style="left:11px;top:647px;color:#c0c0c0;stroke-width:1.5" width="28" height="28" viewBox="0 0 28 28"><rect x="4.500" y="4.500" width="19" height="19" rx="2" stroke-width="1.400"/><path d="M4.500 11.500h19M4.500 17.500h9.500M16.500 11.500l-3 12" stroke-width="1.400"/></svg>
<svg style="left:11px;top:679px;color:#c0c0c0;stroke-width:1.5" width="28" height="28" viewBox="0 0 28 28"><path d="M3.500 4.500h20.500l-20.500 20.500z" stroke-width="3" stroke-linejoin="miter"/></svg>
<svg style="left:11px;top:710px;color:#c0c0c0;stroke-width:1.5" width="28" height="28" viewBox="0 0 28 28"><path d="M4 25l9-21.500h2l9 21.500M7.500 17.500h13" stroke-width="2.600" stroke-linecap="butt" stroke-linejoin="miter"/></svg>
<svg style="left:11px;top:741px;color:#c0c0c0;stroke-width:1.5" width="28" height="28" viewBox="0 0 28 28"><path d="M14 4c6.500 0 11.500 3.800 11.500 8.500s-5 8.500-11.500 8.500c-1.500 0-3-.2-4.300-.6l-5.200 3 2-4.500c-2.500-1.600-4-3.900-4-6.400 0-4.700 5-8.500 11.500-8.500z" stroke-width="1.500"/></svg>
<svg style="left:11px;top:772px;color:#c0c0c0;stroke-width:1.5" width="28" height="28" viewBox="0 0 28 28"><path d="M5 3v22M5 5.500h18" stroke-width="1.300"/><rect class="f" x="2" y="2.500" width="6" height="6"/><path class="f" d="M10 10l15.500 6-7 2.500-2.500 7z"/></svg>
<div style="left:400px;top:63px;width:1px;height:27px;background:#6c6c6c;"></div>
<div style="left:518px;top:63px;width:1px;height:27px;background:#6c6c6c;"></div>
<div style="left:588px;top:63px;width:1px;height:27px;background:#6c6c6c;"></div>
<div style="left:718px;top:63px;width:1px;height:27px;background:#6c6c6c;"></div>
<div style="left:818px;top:63px;width:1px;height:27px;background:#6c6c6c;"></div>
<div style="left:918px;top:63px;width:1px;height:27px;background:#6c6c6c;"></div>
<div style="left:958px;top:63px;width:1px;height:27px;background:#6c6c6c;"></div>
<svg style="left:366px;top:62px;color:#bebebe;stroke-width:1.4" width="28" height="28" viewBox="0 0 28 28"><rect x="3" y="2.500" width="22" height="23" rx="1.500" stroke-width="1.400"/><path d="M19.400 12.400C16.600 9.600 11.600 11 10.100 13.900C9.100 16.700 12.300 18.900 15.900 17.400C20.100 15.700 23 11.700 20.100 8.900C17.300 6 10.100 7.400 7.300 11.700C5.100 15.300 6.600 20.300 12.300 21.400C15.900 22 19.400 21 22.300 18.900" stroke-width="1.900"/></svg>
<svg style="left:407px;top:62px;color:#bebebe;stroke-width:1.4" width="28" height="28" viewBox="0 0 28 28"><path d="M7 3.500h11a1.500 1.500 0 0 1 1.500 1.500v12.500M14 23.500h-4.500l-4-4v-14.500a1.500 1.500 0 0 1 1.500-1.500" stroke-width="1.500"/><path class="f" d="M5.500 19h4.500v4.500z"/><circle cx="21" cy="22.500" r="5.800" class="f"/><path d="M21 19v7M17.500 22.500h7" stroke="#505050" stroke-width="1.500"/></svg>
<svg style="left:437px;top:62px;color:#bebebe;stroke-width:1.4" width="28" height="28" viewBox="0 0 28 28"><path d="M4 24v-18.500a1 1 0 0 1 1-1h6.500l2 2.500" stroke-width="1.400"/><path class="f" d="M7.500 13h20l-3.500 11.500h-20z"/><path d="M14.500 12c0-4 2-6 6-6h3" stroke-width="1.600"/><path class="f" d="M22.500 2.500l4.500 3.500-4.500 3.500z"/></svg>
<svg style="left:466px;top:62px;color:#bebebe;stroke-width:1.4" width="28" height="28" viewBox="0 0 28 28"><path d="M9.500 7h-1.500l-5 13v3.500a1.500 1.500 0 0 0 1.500 1.500h19a1.500 1.500 0 0 0 1.500-1.500v-3.500l-5-13h-1.500" stroke-width="1.400"/><rect class="f" x="4" y="20.500" width="20" height="3.500"/><path d="M14 2v11" stroke-width="1.700"/><path class="f" d="M10 11.500h8l-4 4.500z"/></svg>
<svg style="left:498px;top:71px;color:#d0d0d0;stroke-width:1.300" width="12" height="10" viewBox="0 0 12 10"><path d="M1.500 2.500l4.500 4.500 4.500-4.500"/></svg>
<svg style="left:524px;top:62px;color:#bebebe;stroke-width:1.4" width="28" height="28" viewBox="0 0 28 28"><path d="M8 9h8.500a6.500 6.500 0 0 1 0 13.500M4 24.500h12" stroke-width="1.600"/><path class="f" d="M4 9l6.500-6v12z"/></svg>
<svg style="left:553px;top:62px;color:#767676;stroke-width:1.4" width="28" height="28" viewBox="0 0 28 28"><path d="M20 9h-8.500a6.500 6.500 0 0 0 0 13.500M24 24.500h-12" stroke-width="1.600"/><path class="f" d="M24 9l-6.500-6v12z"/></svg>
<svg style="left:594px;top:62px;color:#bebebe;stroke-width:1.4" width="28" height="28" viewBox="0 0 28 28"><path d="M14 3v3.600" transform="rotate(0 14 14)"/><path d="M14 3v3.600" transform="rotate(22 14 14)"/><path d="M14 3v3.600" transform="rotate(45 14 14)"/><path d="M14 3v3.600" transform="rotate(68 14 14)"/><path d="M14 3v3.600" transform="rotate(90 14 14)"/><path d="M14 3v3.600" transform="rotate(112 14 14)"/><path d="M14 3v3.600" transform="rotate(135 14 14)"/><path d="M14 3v3.600" transform="rotate(158 14 14)"/><path d="M14 3v3.600" transform="rotate(180 14 14)"/><path d="M14 3v3.600" transform="rotate(202 14 14)"/><path d="M14 3v3.600" transform="rotate(225 14 14)"/><path d="M14 3v3.600" transform="rotate(248 14 14)"/><path d="M14 3v3.600" transform="rotate(270 14 14)"/><path d="M14 3v3.600" transform="rotate(292 14 14)"/><path d="M14 3v3.600" transform="rotate(315 14 14)"/><path d="M14 3v3.600" transform="rotate(338 14 14)"/></svg>
<svg style="left:624px;top:62px;color:#767676;stroke-width:1.4" width="28" height="28" viewBox="0 0 28 28"><rect x="3.500" y="3.500" width="15" height="15" class="ff" style="fill:#5e5e5e" stroke-dasharray="2.500 1.500" stroke-width="1" stroke-linecap="butt"/><path d="M20 9l2.500-2.500M21.500 13h3M21 17l3 1.500M18 20.500l2 2.500M13.500 21v3.500M9 20.500l-1.500 2.500" stroke-width="1.300"/></svg>
<svg style="left:654px;top:62px;color:#bebebe;stroke-width:1.4" width="28" height="28" viewBox="0 0 28 28"><path class="f" d="M14.500 1.500l11.500 11-11.500 12-9-8.500c-1 1-1.500 2.500-1.300 5-3-2.500-3-7 .800-9.500z"/><path d="M7 11.500h15l-7.500-7z" class="f" style="fill:#505050"/></svg>
<svg style="left:684px;top:62px;color:#bebebe;stroke-width:1.4" width="28" height="28" viewBox="0 0 28 28"><rect x="5" y="8" width="17" height="17" stroke-width="1.500"/><path d="M13.500 8v-5" stroke-width="1.500"/><g class="f"><circle cx="13.500" cy="2.500" r="1.800"/><circle cx="5" cy="8" r="1.700"/><circle cx="22" cy="8" r="1.700"/><circle cx="5" cy="25" r="1.700"/><circle cx="22" cy="25" r="1.700"/><circle cx="13.500" cy="25" r="1.500"/><circle cx="5" cy="16.500" r="1.500"/><circle cx="22" cy="16.500" r="1.500"/></g></svg>
<svg style="left:723px;top:62px;color:#767676;stroke-width:1.4" width="28" height="28" viewBox="0 0 28 28"><rect x="4" y="4.500" width="19" height="19" stroke-dasharray="2.500 1.500" stroke-width="1" stroke-linecap="butt"/><path d="M2.500 2.500l22 22" stroke-width="1.300"/></svg>
<svg style="left:753px;top:62px;color:#767676;stroke-width:1.4" width="28" height="28" viewBox="0 0 28 28"><rect x="4" y="4.500" width="19" height="19" stroke-dasharray="2.500 1.500" stroke-width="1" stroke-linecap="butt"/><path class="f" d="M23.500 7.500v16.500h-16.500z"/><path d="M4 23.500l19-19" stroke-dasharray="2.500 1.500" stroke-width="1" stroke-linecap="butt"/></svg>
<svg style="left:783px;top:62px;color:#767676;stroke-width:1.4" width="28" height="28" viewBox="0 0 28 28"><rect x="4" y="4.500" width="19.500" height="19.500" rx="2" stroke-width="1.100"/><rect x="6.500" y="7" width="14.500" height="14.500" rx="1.500" stroke-dasharray="2.200 1.600" stroke-width="2" stroke-linecap="butt"/></svg>
<div style="left:853px;top:61px;width:30px;height:31px;background:#65718d;border-radius:2px;"></div>
<svg style="left:824px;top:62px;color:#bebebe;stroke-width:1.4" width="28" height="28" viewBox="0 0 28 28"><path d="M4.500 8v17.500h17.500z" stroke-width="1.400" stroke-linejoin="miter"/><path d="M4.500 8l17.500 17.500" stroke="#7a7a7a"/><path d="M14.500 14l9.500-9.500" stroke-width="3.200" stroke="#c8c8c8"/><path class="f" d="M12 18l1.200-4 3 2.500z"/></svg>
<svg style="left:854px;top:62px;color:#d4d4d4;stroke-width:1.4" width="28" height="28" viewBox="0 0 28 28"><path d="M3.500 17a10.500 10.500 0 0 0 21 0z" stroke-width="1.400"/><path d="M3.500 17h21" stroke-width="1.400"/><path d="M14.500 14l9.500-9.500" stroke-width="3.200" stroke="#c8c8c8"/><path class="f" d="M12 18l1.200-4 3 2.500z"/></svg>
<svg style="left:885px;top:62px;color:#bebebe;stroke-width:1.4" width="28" height="28" viewBox="0 0 28 28"><path d="M5.500 2v24M17 8v18M1.500 16.500h23" stroke="#6f6f6f" stroke-width="1"/><path d="M5.500 24.500v-8h7" stroke-width="1.500"/><path d="M5.500 24.500h18" stroke-width="1.500"/><path d="M14.500 14l9.500-9.500" stroke-width="3.200" stroke="#c8c8c8"/><path class="f" d="M12 18l1.200-4 3 2.500z"/></svg>
<svg style="left:924px;top:62px;color:#bebebe;stroke-width:1.4" width="28" height="28" viewBox="0 0 28 28"><rect x="6.500" y="1.500" width="15" height="25" rx="2" stroke-width="1.500"/><rect class="f" x="6.500" y="22.500" width="15" height="4"/><g class="f"><rect x="9" y="4.500" width="2.600" height="2.600"/><rect x="12.700" y="4.500" width="2.600" height="2.600"/><rect x="16.400" y="4.500" width="2.600" height="2.600"/><rect x="9" y="8.300" width="2.600" height="2.600"/><rect x="12.700" y="8.300" width="2.600" height="2.600"/><rect x="9" y="12.100" width="2.600" height="2.600"/><rect x="12.700" y="12.100" width="2.600" height="2.600"/><rect x="16.400" y="12.100" width="2.600" height="2.600"/><rect x="9" y="15.900" width="2.600" height="2.600"/></g></svg>
<svg style="left:964px;top:62px;color:#bebebe;stroke-width:1.4" width="28" height="28" viewBox="0 0 28 28"><path d="M13.500 4.500c6 0 10 4 10 8.800 0 5-4.500 9-10 9-1.500 0-2.800-.2-4-.7l-5.500 3.400 2-5c-1.600-1.700-2.500-4-2.500-6.700 0-4.800 4-8.800 10-8.800z" stroke-width="1.400"/><path d="M10.500 10.500c0-2 1.400-3.200 3.300-3.200s3.200 1.100 3.200 2.800c0 2.300-3.200 2.500-3.200 5" stroke-width="1.900"/><circle class="f" cx="13.800" cy="18.700" r="1.300"/><path d="M20.500 6.500l5-4.500M22 1.500h4v4" stroke-width="1.300"/></svg>
<svg style="left:1179px;top:89px;color:#d0d0d0;overflow:hidden" width="28" height="21" viewBox="-1 -1 30 22.500"><circle cx="13" cy="13" r="8.300" stroke-width="1.700"/><path d="M11 11l10.500 10.500" stroke-width="2"/><path class="f" d="M8.500 8.500l7.500 1.500-6 6z"/></svg>
<svg style="left:1154px;top:184px;color:#bebebe;stroke-width:1.4" width="28" height="28" viewBox="0 0 28 28"><path d="M8 9h8.500a6.500 6.500 0 0 1 0 13.500M4 24.500h12" stroke-width="1.600"/><path class="f" d="M4 9l6.500-6v12z"/></svg>
<svg style="left:1154px;top:233px;color:#7e7e7e;stroke-width:1.4" width="28" height="28" viewBox="0 0 28 28"><path d="M20 9h-8.500a6.500 6.500 0 0 0 0 13.500M24 24.500h-12" stroke-width="1.600"/><path class="f" d="M24 9l-6.500-6v12z"/></svg>
<svg style="left:1154px;top:288px;color:#bebebe;stroke-width:1.4" width="28" height="28" viewBox="0 0 28 28"><path d="M14 3v3.600" transform="rotate(0 14 14)"/><path d="M14 3v3.600" transform="rotate(22 14 14)"/><path d="M14 3v3.600" transform="rotate(45 14 14)"/><path d="M14 3v3.600" transform="rotate(68 14 14)"/><path d="M14 3v3.600" transform="rotate(90 14 14)"/><path d="M14 3v3.600" transform="rotate(112 14 14)"/><path d="M14 3v3.600" transform="rotate(135 14 14)"/><path d="M14 3v3.600" transform="rotate(158 14 14)"/><path d="M14 3v3.600" transform="rotate(180 14 14)"/><path d="M14 3v3.600" transform="rotate(202 14 14)"/><path d="M14 3v3.600" transform="rotate(225 14 14)"/><path d="M14 3v3.600" transform="rotate(248 14 14)"/><path d="M14 3v3.600" transform="rotate(270 14 14)"/><path d="M14 3v3.600" transform="rotate(292 14 14)"/><path d="M14 3v3.600" transform="rotate(315 14 14)"/><path d="M14 3v3.600" transform="rotate(338 14 14)"/></svg>
<svg style="left:1154px;top:338px;color:#bebebe;stroke-width:1.4" width="28" height="28" viewBox="0 0 28 28"><path d="M8 2l9.500 16.500M20 2l-9.500 16.500" stroke-width="2.200"/><circle cx="8.500" cy="21.500" r="3.300" stroke-width="1.600"/><circle cx="19.500" cy="21.500" r="3.300" stroke-width="1.600"/></svg>
<svg style="left:1154px;top:388px;color:#bebebe;stroke-width:1.4" width="28" height="28" viewBox="0 0 28 28"><path d="M6 18.500h-1a1.500 1.500 0 0 1-1.500-1.500v-12a1.500 1.500 0 0 1 1.500-1.500h10a1.500 1.500 0 0 1 1.500 1.500v1" stroke-width="1.500"/><rect x="8" y="7.500" width="14" height="17" rx="2" class="f"/><path d="M11 12.500h8M11 16h8M11 19.500h8" stroke="#505050" stroke-width="1.500"/></svg>
<svg style="left:1154px;top:438px;color:#bebebe;stroke-width:1.4" width="28" height="28" viewBox="0 0 28 28"><path d="M10 24.500h-4.500a1.500 1.500 0 0 1-1.500-1.500v-16a1.500 1.500 0 0 1 1.500-1.500h3.500M17 5.500h3.500a1.500 1.500 0 0 1 1.500 1.500v3" stroke-width="1.500"/><path d="M9 7.500v-3h2a2 2 0 0 1 4 0h2v3z" stroke-width="1.300"/><rect x="12.500" y="12" width="11.500" height="13.500" rx="1.500" class="f"/><path d="M15 16h6.500M15 19h6.500M15 22h6.500" stroke="#505050" stroke-width="1.400"/></svg>
<svg style="left:1154px;top:492px;color:#bebebe;stroke-width:1.4" width="28" height="28" viewBox="0 0 28 28"><rect x="5" y="8" width="17" height="16" stroke-width="1.400"/><path d="M13.500 8v-5.500"/><g class="f"><circle cx="13.5" cy="2.5" r="1.700"/><circle cx="5" cy="8" r="1.700"/><circle cx="22" cy="8" r="1.700"/><circle cx="5" cy="24" r="1.700"/><circle cx="22" cy="24" r="1.700"/><circle cx="13.5" cy="24" r="1.700"/><circle cx="5" cy="16" r="1.700"/><circle cx="22" cy="16" r="1.700"/><circle cx="13.5" cy="8" r="1.700"/></g></svg>
<svg style="left:1154px;top:543px;color:#bebebe;stroke-width:1.4" width="28" height="28" viewBox="0 0 28 28"><path d="M5 9l17-4.500-1 19.500-16 1z" stroke-width="1.400"/><g class="f"><circle cx="5" cy="9" r="1.700"/><circle cx="22" cy="4.5" r="1.700"/><circle cx="21" cy="24" r="1.700"/><circle cx="5" cy="25" r="1.700"/><circle cx="13.5" cy="6.7" r="1.700"/><circle cx="21.5" cy="14" r="1.700"/><circle cx="13" cy="24.5" r="1.700"/><circle cx="5" cy="17" r="1.700"/></g></svg>
<svg style="left:1154px;top:593px;color:#bebebe;stroke-width:1.4" width="28" height="28" viewBox="0 0 28 28"><path d="M4.500 6c6 3 12 2 18-1.500-3 6-3 12 .5 19.500-6-2.500-12-2-18.500 1 3-7 3-13 0-19zM10.500 7.500c1 6 1 11-.500 16.500M16.500 7c-1 6-1 11 .500 16.500M6 12c5.500 1.500 11 1.500 15.500 0M6.500 18.500c5-1 10-1 15 0" stroke-width="1.300"/><g class="f"><circle cx="4.5" cy="6" r="1.700"/><circle cx="22.5" cy="4.5" r="1.700"/><circle cx="23" cy="24" r="1.700"/><circle cx="4.5" cy="25" r="1.700"/></g></svg>
<svg style="left:1154px;top:646px;color:#bebebe;stroke-width:1.4" width="28" height="28" viewBox="0 0 28 28"><path d="M14 3v22" stroke-width="1.500"/><path d="M3.500 8.500v11l7.500-5.500z" stroke-width="1.300"/><path class="f" d="M24.500 8v12l-8.500-6z"/></svg>
<svg style="left:1154px;top:696px;color:#bebebe;stroke-width:1.4" width="28" height="28" viewBox="0 0 28 28"><path d="M3 14h22" stroke-width="1.500"/><path class="f" d="M8 3.500h12l-6 8z"/><path d="M9 24h10l-5-7z" stroke-width="1.300"/></svg>
<svg style="left:1154px;top:745px;color:#bebebe;stroke-width:1.4" width="28" height="28" viewBox="0 0 28 28"><path d="M10 3v16M2 11h16" stroke-width="1.300" stroke-dasharray="3 2" stroke-linecap="butt"/><path class="f" d="M10 .500l2.500 3.500h-5zM10 21.500l2.500-3.500h-5zM-.500 11l3.500-2.500v5zM20.500 11l-3.500-2.500v5z"/><circle cx="10" cy="11" r="1.600" class="f"/><circle cx="21" cy="21" r="5.300" stroke-width="1.300"/><path d="M21 15.500v5.500" stroke-width="1.500"/><circle cx="21" cy="21" r="1.300" class="f"/></svg>
<svg style="left:1154px;top:801px;color:#bebebe;stroke-width:1.4" width="28" height="28" viewBox="0 0 28 28"><defs><pattern id="ht" width="2" height="2" patternUnits="userSpaceOnUse"><rect width="1" height="1" fill="#c4c4c4"/><rect x="1" y="1" width="1" height="1" fill="#c4c4c4"/></pattern></defs><rect x="3" y="3" width="18" height="18" rx="1.500" fill="#8a8a8a" stroke-width="1.200"/><circle cx="12" cy="12" r="5.800" class="ff" style="fill:#505050" stroke-width="1.500"/><path d="M16 21.500h10M23 19l3 2.500M14 25h10M17 27.500l-3-2.500" stroke-width="1.400"/></svg>
<svg style="left:1154px;top:853px;color:#bebebe;stroke-width:1.4" width="28" height="28" viewBox="0 0 28 28"><circle cx="16" cy="11.500" r="9" stroke-width="1.300"/><circle cx="8.500" cy="19.500" r="5.500" stroke-width="1.300"/><path d="M9 19l7-7" stroke-width="1.500"/><path class="f" d="M18 10l-5 1 4 4z"/></svg>
<svg style="left:1154px;top:904px;color:#bebebe;stroke-width:1.4" width="28" height="28" viewBox="0 0 28 28"><circle cx="16" cy="11.500" r="9" stroke-width="1.300"/><circle cx="8.500" cy="19.500" r="5.500" stroke-width="1.300"/><path d="M16 12l-6 6" stroke-width="1.500"/><path class="f" d="M7 21l5-1-4-4z"/></svg>
<svg style="left:1154px;top:958px;color:#bebebe;" width="28" height="28" viewBox="0 0 22 22"><g transform="rotate(-45 11 11)"><path d="M8.600 2.300v4.200l2.400 1.400 2.400-1.400v-4.200a5 5 0 0 1 .300 8.700v8.200a2.700 2.700 0 0 1-5.400 0v-8.200a5 5 0 0 1 .300-8.700z" stroke-width="1.400"/></g></svg>
<svg style="left:1219px;top:92px;color:#c4c4c4;" width="32" height="32" viewBox="0 0 32 32"><circle cx="16" cy="16" r="10.200" stroke-width="1.800"/><path d="M15 15l11 11" stroke-width="2.200"/><path class="f" d="M11.500 11.500l8 1.700-6.300 6.300z"/></svg>
<svg style="left:1223px;top:144px;color:#8b8b8b;stroke-width:1.200" width="25" height="20" viewBox="0 0 30 24"><path d="M2.500 21.500v-17.500a1 1 0 0 1 1-1h7l2 2.500h14a1 1 0 0 1 1 1v15a1 1 0 0 1-1 1h-23a1 1 0 0 1-1-1z" stroke-width="1.300"/><path class="f" d="M2.500 3.500h8l2 2.500h-10z" opacity=".6"/><g class="f" opacity=".85"><ellipse cx="15" cy="14" rx="8.500" ry="2.300" transform="rotate(45 15 14)"/><ellipse cx="15" cy="14" rx="8.500" ry="2.300" transform="rotate(-45 15 14)"/></g></svg>
<svg style="left:1223px;top:190px;color:#8b8b8b;stroke-width:1.200" width="25" height="20" viewBox="0 0 30 24"><path d="M2.500 21.500v-17.500a1 1 0 0 1 1-1h7l2 2.500h14a1 1 0 0 1 1 1v15a1 1 0 0 1-1 1h-23a1 1 0 0 1-1-1z" stroke-width="1.300"/><path class="f" d="M2.500 3.500h8l2 2.500h-10z" opacity=".6"/><rect x="7.500" y="9" width="15" height="10.500" stroke-width="1.200"/><path d="M12.500 19.500v-4l2.500-2.500 2.500 2.500v4" stroke-width="1.200"/></svg>
<svg style="left:1223px;top:236px;color:#8b8b8b;stroke-width:1.200" width="25" height="20" viewBox="0 0 30 24"><path d="M2.500 21.500v-17.500a1 1 0 0 1 1-1h7l2 2.500h14a1 1 0 0 1 1 1v15a1 1 0 0 1-1 1h-23a1 1 0 0 1-1-1z" stroke-width="1.300"/><path class="f" d="M2.500 3.500h8l2 2.500h-10z" opacity=".6"/><rect x="8" y="9" width="14" height="10.500" stroke-width="0" /><g class="f"><rect x="8.5" y="9.5" width="1.200" height="1.200"/><rect x="9.7" y="11.7" width="1.200" height="1.200"/><rect x="8.5" y="13.9" width="1.200" height="1.200"/><rect x="9.7" y="16.1" width="1.200" height="1.200"/><rect x="8.5" y="18.3" width="1.200" height="1.200"/><rect x="10.9" y="9.5" width="1.200" height="1.200"/><rect x="12.1" y="11.7" width="1.200" height="1.200"/><rect x="10.9" y="13.9" width="1.200" height="1.200"/><rect x="12.1" y="16.1" width="1.200" height="1.200"/><rect x="10.9" y="18.3" width="1.200" height="1.200"/><rect x="13.3" y="9.5" width="1.200" height="1.200"/><rect x="14.5" y="11.7" width="1.200" height="1.200"/><rect x="13.3" y="13.9" width="1.200" height="1.200"/><rect x="14.5" y="16.1" width="1.200" height="1.200"/><rect x="13.3" y="18.3" width="1.200" height="1.200"/><rect x="15.7" y="9.5" width="1.200" height="1.200"/><rect x="16.9" y="11.7" width="1.200" height="1.200"/><rect x="15.7" y="13.9" width="1.200" height="1.200"/><rect x="16.9" y="16.1" width="1.200" height="1.200"/><rect x="15.7" y="18.3" width="1.200" height="1.200"/><rect x="18.1" y="9.5" width="1.200" height="1.200"/><rect x="19.3" y="11.7" width="1.200" height="1.200"/><rect x="18.1" y="13.9" width="1.200" height="1.200"/><rect x="19.3" y="16.1" width="1.200" height="1.200"/><rect x="18.1" y="18.3" width="1.200" height="1.200"/><rect x="20.5" y="9.5" width="1.200" height="1.200"/><rect x="21.7" y="11.7" width="1.200" height="1.200"/><rect x="20.5" y="13.9" width="1.200" height="1.200"/><rect x="21.7" y="16.1" width="1.200" height="1.200"/><rect x="20.5" y="18.3" width="1.200" height="1.200"/></g></svg>
<svg style="left:1223px;top:282px;color:#8b8b8b;stroke-width:1.200" width="25" height="20" viewBox="0 0 30 24"><path d="M2.500 21.500v-17.500a1 1 0 0 1 1-1h7l2 2.500h14a1 1 0 0 1 1 1v15a1 1 0 0 1-1 1h-23a1 1 0 0 1-1-1z" stroke-width="1.300"/><path class="f" d="M2.500 3.500h8l2 2.500h-10z" opacity=".6"/><rect x="8" y="9" width="14" height="10.500" stroke-width="1.300"/><path d="M8 12.500h14M8 16h6.500M16 12.500l-1.500 7" stroke-width="1.200"/></svg>
<svg style="left:1223px;top:328px;color:#8b8b8b;stroke-width:1.200" width="25" height="20" viewBox="0 0 30 24"><path d="M2.500 21.500v-17.500a1 1 0 0 1 1-1h7l2 2.500h14a1 1 0 0 1 1 1v15a1 1 0 0 1-1 1h-23a1 1 0 0 1-1-1z" stroke-width="1.300"/><path class="f" d="M2.500 3.500h8l2 2.500h-10z" opacity=".6"/><rect x="8" y="8.500" width="14" height="11" stroke-width="1.300"/><path class="f" d="M9 18.500l3.500-4.500 2.500 2.500 2-2 3.500 4z"/></svg>
<svg style="left:1223px;top:374px;color:#8b8b8b;stroke-width:1.200" width="25" height="20" viewBox="0 0 30 24"><path d="M2.500 21.500v-17.500a1 1 0 0 1 1-1h7l2 2.500h14a1 1 0 0 1 1 1v15a1 1 0 0 1-1 1h-23a1 1 0 0 1-1-1z" stroke-width="1.300"/><path class="f" d="M2.500 3.500h8l2 2.500h-10z" opacity=".6"/><rect x="8.500" y="9.500" width="11" height="10" stroke-width="1.300"/><path d="M12 16.500l9.500-9.500" stroke-width="1.800"/></svg>
<svg style="left:1223px;top:420px;color:#8b8b8b;stroke-width:1.200" width="25" height="20" viewBox="0 0 30 24"><path d="M2.500 21.500v-17.500a1 1 0 0 1 1-1h7l2 2.500h14a1 1 0 0 1 1 1v15a1 1 0 0 1-1 1h-23a1 1 0 0 1-1-1z" stroke-width="1.300"/><path class="f" d="M2.500 3.500h8l2 2.500h-10z" opacity=".6"/><path d="M15 8l6 3v6.500l-6 3-6-3v-6.500zM9 11l6 3 6-3M15 14v6.500" stroke-width="1.200"/></svg>
<svg style="left:1223px;top:466px;color:#8b8b8b;stroke-width:1.200" width="25" height="20" viewBox="0 0 30 24"><path d="M2.500 21.500v-17.500a1 1 0 0 1 1-1h7l2 2.500h14a1 1 0 0 1 1 1v15a1 1 0 0 1-1 1h-23a1 1 0 0 1-1-1z" stroke-width="1.300"/><path class="f" d="M2.500 3.500h8l2 2.500h-10z" opacity=".6"/><circle class="f" cx="15" cy="9" r="1.600"/><path d="M9.500 11.500h11M15 11.500v4M15 15.500l-3 5M15 15.500l3 5" stroke-width="1.800"/></svg>
<svg style="left:1290px;top:89px;color:#d6d6d6;" width="14" height="16" viewBox="0 0 14 16"><path d="M7 1.500v8" stroke-width="1.800"/><path class="f" d="M2.500 7.500h9l-4.500 5z"/><path d="M1 14.500h12" stroke-width="1.400"/></svg>
<svg style="left:1431px;top:91px;color:#8e8e8e;" width="20" height="15" viewBox="0 0 20 15"><circle class="f" cx="6" cy="3.500" r="2.300"/><path class="f" d="M2.500 14v-5a3.500 3.500 0 0 1 7 0v5z"/><circle cx="13.500" cy="3.500" r="2.300" stroke-width="1.100"/><path d="M10.500 14v-5a3 3 0 0 1 6 0v5" stroke-width="1.100"/></svg>
<div style="left:1270px;top:126px;width:21px;height:21px;background:#b6b6b6;border-radius:3px;"></div>
<svg style="left:1270px;top:126px;color:#6a6a6a;" width="21" height="21" viewBox="0 0 21 21"><g transform="translate(-3.500 -4) scale(1)"><path d="M19.400 12.400C16.600 9.600 11.600 11 10.100 13.900C9.100 16.700 12.300 18.900 15.900 17.400C20.100 15.700 23 11.700 20.100 8.900C17.300 6 10.100 7.400 7.300 11.700C5.100 15.300 6.600 20.300 12.300 21.400C15.900 22 19.400 21 22.300 18.900" stroke-width="1.900"/></g></svg>
<svg style="left:1272px;top:180px;color:#dcdcdc;stroke-width:1.300" width="12" height="9" viewBox="0 0 12 9"><path d="M1 1.500l5 5.500 5-5.500"/></svg>
<div style="left:1287.3px;top:172.3px;width:3.4px;height:3.4px;background:#c8c8c8;border-radius:50%;"></div>
<div style="left:1293.8px;top:172.3px;width:3.4px;height:3.4px;background:#c8c8c8;border-radius:50%;"></div>
<div style="left:1300.3px;top:172.3px;width:3.4px;height:3.4px;background:#9a9a9a;border-radius:50%;"></div>
<div style="left:1287.3px;top:178.8px;width:3.4px;height:3.4px;background:#8a8a8a;border-radius:50%;"></div>
<div style="left:1293.8px;top:178.8px;width:3.4px;height:3.4px;background:#c8c8c8;border-radius:50%;"></div>
<div style="left:1300.3px;top:178.8px;width:3.4px;height:3.4px;background:#9a9a9a;border-radius:50%;"></div>
<div style="left:1287.3px;top:185.3px;width:3.4px;height:3.4px;background:#c8c8c8;border-radius:50%;"></div>
<div style="left:1293.8px;top:185.3px;width:3.4px;height:3.4px;background:#9a9a9a;border-radius:50%;"></div>
<div style="left:1300.3px;top:185.3px;width:3.4px;height:3.4px;background:#c8c8c8;border-radius:50%;"></div>
<svg style="left:1290px;top:207px;color:#dcdcdc;stroke-width:1.300" width="8" height="12" viewBox="0 0 8 12"><path d="M1.500 1l5 5-5 5"/></svg>
<svg style="left:1299px;top:203px;color:#c8c8c8;stroke-width:1.2" width="20" height="20" viewBox="0 0 20 20"><path d="M1.500 1.500c4 0 8.500 5 8.500 8.500 0-3.500 4.500-8.500 8.500-8.500 0 4-5 8.500-8.500 8.500 3.500 0 8.500 4.500 8.500 8.500-4 0-8.500-5-8.500-8.500 0 3.500-4.500 8.500-8.500 8.500 0-4 5-8.500 8.500-8.500-3.500 0-8.500-4.500-8.500-8.500z" stroke-width="1.100"/></svg>
<svg style="left:1290px;top:240px;color:#dcdcdc;stroke-width:1.300" width="8" height="12" viewBox="0 0 8 12"><path d="M1.500 1l5 5-5 5"/></svg>
<svg style="left:1299px;top:236px;color:#c8c8c8;stroke-width:1.2" width="20" height="20" viewBox="0 0 20 20"><path class="f" d="M1.500 1.500c4 0 8.500 5 8.500 8.500 0-3.500 4.500-8.500 8.500-8.500 0 4-5 8.500-8.500 8.500 3.500 0 8.500 4.500 8.500 8.500-4 0-8.500-5-8.500-8.500 0 3.500-4.500 8.500-8.500 8.500 0-4 5-8.500 8.500-8.500-3.500 0-8.500-4.500-8.500-8.500z"/></svg>
<svg style="left:1290px;top:273px;color:#dcdcdc;stroke-width:1.300" width="8" height="12" viewBox="0 0 8 12"><path d="M1.500 1l5 5-5 5"/></svg>
<svg style="left:1299px;top:269px;color:#c8c8c8;stroke-width:1.2" width="20" height="20" viewBox="0 0 20 20"><rect x="1.500" y="1.500" width="17" height="17" rx="1.500" stroke-width="1.300"/><path d="M1.500 7h17M1.500 12.500h8M12 7l-2.500 11.500" stroke-width="1.200"/></svg>
<svg style="left:1290px;top:306px;color:#dcdcdc;stroke-width:1.300" width="8" height="12" viewBox="0 0 8 12"><path d="M1.500 1l5 5-5 5"/></svg>
<svg style="left:1299px;top:302px;color:#c8c8c8;stroke-width:1.2" width="20" height="20" viewBox="0 0 20 20"><rect x="1.500" y="1.500" width="17" height="17" rx="1.500" stroke-width="1.300"/><path class="f" d="M2.500 17.500v-4l4.500-4 3.500 3 3-2.500 4 4v3.500z" opacity=".85"/></svg>
<svg style="left:1290px;top:339px;color:#dcdcdc;stroke-width:1.300" width="8" height="12" viewBox="0 0 8 12"><path d="M1.500 1l5 5-5 5"/></svg>
<svg style="left:1299px;top:335px;color:#c8c8c8;stroke-width:1.2" width="20" height="20" viewBox="0 0 20 20"><path d="M10 1l8 4v9.500l-8 4.500-8-4.500v-9.500zM2 5l8 4.500 8-4.500M10 9.500v9.500" stroke-width="1.200"/><path class="f" d="M2 14.500l8-3 8 3-8 4.500z" opacity=".55"/></svg>
<svg style="left:1284px;top:378px;color:#dcdcdc;stroke-width:1.300" width="12" height="9" viewBox="0 0 12 9"><path d="M1 1.500l5 5.500 5-5.500"/></svg>
<svg style="left:1299px;top:368px;color:#c8c8c8;stroke-width:1.2" width="20" height="20" viewBox="0 0 20 20"><path d="M1.500 17.500v-14.500a1 1 0 0 1 1-1h5.500l1.500 2h8a1 1 0 0 1 1 1v12.500a1 1 0 0 1-1 1h-15a1 1 0 0 1-1-1z" stroke-width="1.200" class="ff" style="fill:#65718d"/><rect x="4" y="5.500" width="12" height="11" rx="1" class="f" style="fill:#d0d0d0"/><path d="M10 7v6" stroke="#65718d" stroke-width="2"/><path d="M6.500 11h7l-3.500 4z" class="f" style="fill:#65718d"/></svg>
<svg style="left:1311px;top:402px;color:#c4c4c4;" width="20" height="18" viewBox="0 0 20 18"><path class="f" d="M1 16.500v-13.500a1.500 1.500 0 0 1 1.500-1.500h5l2 2.500h8a1.500 1.500 0 0 1 1.500 1.500v11a1.500 1.500 0 0 1-1.500 1.500h-15a1.500 1.500 0 0 1-1.500-1.500z"/><path d="M1.500 7h17" stroke="#404040" stroke-width=".8"/></svg>
<svg style="left:1303px;top:437px;color:#dcdcdc;stroke-width:1.300" width="8" height="8" viewBox="0 0 8 8"><path d="M1.500 1l4 5" /></svg>
<svg style="left:1311px;top:433px;color:#c4c4c4;" width="20" height="12" viewBox="0 0 20 12"><path d="M1 12v-9a1.500 1.500 0 0 1 1.500-1.500h5l2 2.500h8a1.500 1.500 0 0 1 1.500 1.500v6.500" stroke-width="1.300"/><path d="M2 7h17" stroke-width="1.200"/></svg>
<svg style="left:1262px;top:461px;color:#c8c8c8;" width="34" height="24" viewBox="0 0 34 24"><path d="M1.500 19.500v-15.500a1.500 1.500 0 0 1 1.500-1.500h5.500l2 2.500h8.500a1.500 1.500 0 0 1 1.500 1.500v8" stroke-width="1.400"/><path d="M1.500 19.500h11" stroke-width="1.400"/><circle class="f" cx="17.500" cy="18.500" r="4.800"/><path d="M17.500 15.500v6M14.500 18.500h6" stroke="#505050" stroke-width="1.300"/></svg>
<svg style="left:1289px;top:461px;color:#6c6c6c;" width="34" height="24" viewBox="0 0 34 24"><path d="M1.500 19.500v-15.500a1.500 1.500 0 0 1 1.500-1.500h5.500l2 2.500h8.500a1.500 1.500 0 0 1 1.500 1.500v4M1.500 19.500h8" stroke-width="1.300"/><path d="M12.500 13h7.500M13.500 13v8.500h5.500v-8.500M15 11.500h2.500M15.300 15v5M17.200 15v5" stroke-width="1"/></svg>
<svg style="left:1314px;top:461px;color:#6c6c6c;" width="34" height="24" viewBox="0 0 34 24"><path d="M1.500 19.500v-15.500a1.500 1.500 0 0 1 1.500-1.500h5.500l2 2.500h4M1.500 19.500h14v-5" stroke-width="1.300"/><path d="M10.500 14.500l9-9" stroke-width="2.400"/><path d="M4.500 16h5" stroke-width="1.600"/></svg>
<svg style="left:1266px;top:494px;color:#a9a9a9;" width="22" height="22" viewBox="0 0 22 22"><circle class="f" cx="10.500" cy="10.500" r="10.300"/><circle cx="9.300" cy="9.300" r="4.300" stroke="#505050" stroke-width="1.600"/><path d="M12.600 12.600l4.200 4.200" stroke="#505050" stroke-width="2.300" stroke-linecap="butt"/></svg>
<svg style="left:1266px;top:975px;color:#c6cce0;" width="22" height="20" viewBox="0 0 22 20"><rect x="1.500" y="1.500" width="19" height="13" rx="1.500" stroke-width="1.500"/><rect class="f" x="4.500" y="4.500" width="5" height="5"/><path d="M11.500 5.500h6M11.500 8.500h6M4.500 11.500h13" stroke-width="1.200"/><path d="M1 17.500h20" stroke-width="1.800"/></svg>
<svg style="left:1293px;top:975px;color:#c8c8c8;" width="30" height="20" viewBox="0 0 30 20"><g class="f"><rect x="2" y="1.500" width="6.500" height="6.500" rx="1"/><rect x="11" y="1.500" width="6.500" height="6.500" rx="1"/><rect x="2" y="11" width="6.500" height="6.500" rx="1"/><rect x="11" y="11" width="6.500" height="6.500" rx="1"/></g><path d="M17 7.500l4 4.500 4-4.500" stroke-width="1.300"/></svg>
<svg style="left:1336px;top:973px;color:#6e6e6e;" width="24" height="24" viewBox="0 0 24 24"><path d="M10 15h-6.500v-11h3M14 4h3v4" stroke-width="1.300"/><path d="M6.500 5.500v-2.500h2a1.800 1.800 0 0 1 3.500 0h2v2.500z" stroke-width="1.100"/><rect x="10.500" y="11" width="11" height="10.500" rx="1" stroke-width="1.300"/><path d="M13 16.500h6M17 14.500l2 2-2 2" stroke-width="1.100"/></svg>
<svg style="left:1361px;top:973px;color:#6e6e6e;" width="24" height="24" viewBox="0 0 24 24"><path d="M13 15.500h-9.500a1.500 1.500 0 0 1-1.500-1.500v-9a1.500 1.500 0 0 1 1.500-1.500h13a1.500 1.500 0 0 1 1.500 1.500v5.500" stroke-width="1.300"/><path d="M10 14.500h11M18.500 12l2.500 2.500M21 18.500h-11M12.500 21l-2.500-2.500" stroke-width="1.300"/></svg>
<svg style="left:1394px;top:973px;color:#6e6e6e;stroke-width:1.800;stroke-linecap:butt" width="24" height="24" viewBox="0 0 24 24"><circle cx="12" cy="12" r="6.300" stroke-width="1.500"/><path d="M12 1.500v3" transform="rotate(0 12 12)"/><path d="M12 1.500v3" transform="rotate(30 12 12)"/><path d="M12 1.500v3" transform="rotate(60 12 12)"/><path d="M12 1.500v3" transform="rotate(90 12 12)"/><path d="M12 1.500v3" transform="rotate(120 12 12)"/><path d="M12 1.500v3" transform="rotate(150 12 12)"/><path d="M12 1.500v3" transform="rotate(180 12 12)"/><path d="M12 1.500v3" transform="rotate(210 12 12)"/><path d="M12 1.500v3" transform="rotate(240 12 12)"/><path d="M12 1.500v3" transform="rotate(270 12 12)"/><path d="M12 1.500v3" transform="rotate(300 12 12)"/><path d="M12 1.500v3" transform="rotate(330 12 12)"/></svg>
<svg style="left:1420px;top:974px;color:#6e6e6e;" width="24" height="22" viewBox="0 0 24 22"><path class="f" d="M12 20.500c-6-4.500-10-8-10-12.500a5 5 0 0 1 10-1.500 5 5 0 0 1 10 1.500c0 4.500-4 8-10 12.500z"/></svg>
<svg style="left:1446px;top:973px;color:#6e6e6e;" width="20" height="24" viewBox="0 0 20 24"><path d="M2 5.500h16M4 5.500l1 15.500a1.500 1.500 0 0 0 1.500 1.500h7a1.500 1.500 0 0 0 1.500-1.500l1-15.500M7 5.500v-2.500h6v2.500M7.500 9v10M10 9v10M12.500 9v10" stroke-width="1.200"/></svg>
<svg style="left:1502px;top:92px;color:#d0d0d0;" width="20" height="18" viewBox="0 0 20 18"><rect x="4.500" y="1.500" width="14" height="11" rx="1.500" stroke-width="1.300"/><rect class="f" x="6.500" y="3.500" width="10" height="7" style="fill:#9a9a9a"/><path d="M3 5v9.500a1.500 1.500 0 0 0 1.500 1.500h11.500" stroke-width="1.300"/></svg>
<svg style="left:1573px;top:93px;color:#7c7c7c;overflow:hidden" width="22" height="15" viewBox="0 0 22 15"><rect x="2.500" y="2.500" width="17" height="16" rx="1.500" stroke-width="1.200"/><path class="f" d="M5 15.500v-5l2.500-1.500 2 3 3-7 2.500 5 2 1v4.500z" opacity=".8"/></svg>
<svg style="left:1611px;top:93px;color:#7c7c7c;overflow:hidden" width="22" height="15" viewBox="0 0 22 15"><path d="M2.500 16a8.500 8.500 0 0 1 17 0z" stroke-width="1.300"/><path d="M6 17v-6a5 5 0 0 1 10 0v6M2.500 16h17" stroke-width="1.200"/></svg>
<svg style="left:1649px;top:93px;color:#7c7c7c;overflow:hidden" width="22" height="15" viewBox="0 0 22 15"><circle cx="11" cy="12" r="9" stroke-width="1.300"/><circle class="f" cx="11" cy="7.500" r="1.300"/><path d="M11 10.500v7" stroke-width="1.800"/></svg>
<svg style="left:1552px;top:265px;color:#c0c0c0;" width="20" height="20" viewBox="0 0 20 20"><circle cx="10" cy="10" r="8.500" stroke-width="1.200"/><path d="M5.500 10h9" stroke-width="1.300"/></svg>
<svg style="left:1577px;top:265px;color:#c0c0c0;" width="20" height="20" viewBox="0 0 20 20"><circle cx="10" cy="10" r="8.500" stroke-width="1.200"/><path d="M5.500 10h9M10 5.500v9" stroke-width="1.300"/></svg>
<svg style="left:1602px;top:265px;color:#c0c0c0;" width="20" height="20" viewBox="0 0 20 20"><circle cx="10" cy="10" r="8.500" stroke-width="1.200"/><rect class="f" x="5.500" y="5.500" width="9" height="9" rx="1.500"/></svg>
<svg style="left:1631px;top:265px;color:#c0c0c0;" width="20" height="20" viewBox="0 0 20 20"><rect x="1.500" y="1.500" width="10" height="10" rx="1" stroke-width="1.300"/><rect x="8.500" y="8.500" width="10" height="10" rx="1" stroke-width="1.300" class="ff" style="fill:#505050"/><path d="M4.500 4.500l11 11M4 8v-4h4M16 12v4h-4" stroke-width="1.300"/></svg>
<svg style="left:1656px;top:265px;color:#c0c0c0;" width="20" height="20" viewBox="0 0 20 20"><rect x="2" y="2" width="16" height="16" rx="1.500" stroke-width="1.300"/><path d="M5.500 5.500l9 9M5 9.500v-4.500h4.500M15 10.500v4.500h-4.500" stroke-width="1.400"/></svg>
<svg style="left:1552px;top:291px;color:#c0c0c0;" width="20" height="20" viewBox="0 0 20 20"><path d="M5 12a6.500 6.500 0 1 1 6 6" stroke-width="1.400"/><path class="f" d="M1 9.500l4 5.500 4-5.500z"/></svg>
<svg style="left:1577px;top:291px;color:#c0c0c0;" width="20" height="20" viewBox="0 0 20 20"><path d="M15 12a6.500 6.500 0 1 0-6 6" stroke-width="1.400"/><path class="f" d="M19 9.500l-4 5.500-4-5.500z"/></svg>
<svg style="left:1602px;top:291px;color:#c0c0c0;" width="20" height="20" viewBox="0 0 20 20"><path d="M10 2.500a7.800 7.800 0 1 1-5.500 2.300" stroke-width="1.300"/><path d="M3.300 6.300a7.800 7.800 0 0 1 5-3.600" stroke-width="1.300" stroke-dasharray="1.200 1.800"/><path d="M10 2.500v7.500" stroke-width="1.600"/><circle class="f" cx="10" cy="10.500" r="1.900"/></svg>
<svg style="left:1631px;top:291px;color:#c0c0c0;" width="20" height="20" viewBox="0 0 20 20"><path d="M10 1.500v17" stroke-width="1.400"/><path d="M2 5v10l6-5z" stroke-width="1.200"/><path class="f" d="M18.500 4.500v11l-7-5.500z"/></svg>
<svg style="left:1656px;top:291px;color:#c0c0c0;" width="20" height="20" viewBox="0 0 20 20"><path d="M1.500 10h17" stroke-width="1.400"/><path class="f" d="M5 1.500h10l-5 6.500z"/><path d="M5.500 18h9l-4.500-5.500z" stroke-width="1.200"/></svg>
<svg style="left:1501px;top:321px;color:#d0d0d0;" width="24" height="22" viewBox="0 0 24 22"><path d="M9 2l8 3.500-8 3.500-8-3.500zM2 9l7 3 5-2.200M2 12.500l7 3 3-1.300M2 16l7 3 2-.900" stroke-width="1.200"/><g stroke-width="1"><circle cx="14.500" cy="14" r="1.300"/><circle class="f" cx="19" cy="14" r="1.600"/><path d="M13 17l3 3M16 17l-3 3"/><rect x="17.500" y="17.500" width="3" height="3"/></g></svg>
<svg style="left:1610px;top:322px;color:#7c7c7c;overflow:hidden" width="24" height="17" viewBox="0 0 24 17"><path d="M10 3l8 3.500-8 3.500-8-3.500zM3 10.500l7 3 7-3" stroke-width="1.200"/><path class="f" d="M9 15h9l-4.500 5z"/></svg>
<svg style="left:1648px;top:322px;color:#7c7c7c;overflow:hidden" width="24" height="17" viewBox="0 0 24 17"><circle cx="13" cy="12" r="7.500" class="f" opacity=".5"/><path d="M4 19l7-13" stroke-width="1.500"/><path d="M5.500 12a7.500 7.500 0 0 1 15 0" stroke-width="1.200"/></svg>
<svg style="left:1501px;top:376px;color:#d0d0d0;" width="24" height="22" viewBox="0 0 24 22"><rect x="2.500" y="8.500" width="17" height="11" rx="1.500" stroke-width="1.300"/><path d="M2.500 8l16-4.500.800 3-16 4.500z" stroke-width="1.100"/><path d="M6 7l1.500 2.500M10 6l1.500 2.500M14 5l1.500 2.500" stroke-width="1"/><path class="f" d="M9 11.500l5 2.800-5 2.800z"/></svg>
<svg style="left:1628px;top:400px;color:#c0c0c0;" width="22" height="22" viewBox="0 0 22 22"><path d="M2 15v-11.500h5l1.500 2h6.500v2.500" stroke-width="1.300"/><path class="f" d="M2 6.500h13v8.500h-13z" opacity=".0"/><rect class="f" x="2" y="6" width="13" height="9" rx="1"/><rect x="9" y="10.500" width="10" height="8.500" rx="1" stroke-width="1.300" class="ff" style="fill:#505050"/></svg>
<svg style="left:1654px;top:400px;color:#c0c0c0;" width="22" height="22" viewBox="0 0 22 22"><path d="M7 3.500h-3a1.500 1.500 0 0 0-1.500 1.500v11a1.500 1.500 0 0 0 1.500 1.500h13a1.500 1.500 0 0 0 1.500-1.500v-11a1.500 1.500 0 0 0-1.500-1.500h-3" stroke-width="1.300"/><path d="M10.500 1.500v9M6.500 7.500l4 4 4-4" stroke-width="1.500"/></svg>
<div style="left:1570px;top:503px;width:17px;height:17px;background:#484848;border-radius:50%;"></div>
<svg style="left:1596px;top:501px;color:#7a7a7a;" width="20" height="20" viewBox="0 0 20 20"><path class="f" d="M3 2l14 8-14 8z"/></svg>
<svg style="left:1624px;top:500px;color:#c0c0c0;" width="26" height="22" viewBox="0 0 26 22"><rect x="2" y="2.500" width="17" height="13" rx="2" stroke-width="1.400"/><path class="f" d="M8 5.500l6 3.500-6 3.500z"/><circle class="f" cx="19.500" cy="16.500" r="4.800"/><path d="M19.500 13.500v6M16.500 16.500h6" stroke="#505050" stroke-width="1.300"/></svg>
<svg style="left:1654px;top:499px;color:#6c6c6c;" width="20" height="24" viewBox="0 0 20 24"><path d="M2 5.500h16M4 5.500l1 15.500a1.500 1.500 0 0 0 1.500 1.500h7a1.500 1.500 0 0 0 1.500-1.500l1-15.500M7 5.500v-2.500h6v2.500M7.500 9v10M10 9v10M12.500 9v10" stroke-width="1.200"/></svg>
<svg style="left:1501px;top:531px;color:#d6d6d6;" width="24" height="22" viewBox="0 0 24 22"><path d="M11 2.500l8.500 4-8.500 4-8.500-4zM2.500 10.500l8.500 4 8.500-4M2.500 14.500l8.500 4 8.500-4" stroke-width="1.300"/></svg>
<svg style="left:1580px;top:532px;color:#7c7c7c;overflow:hidden" width="26" height="17" viewBox="0 0 26 17"><path d="M4 4.500h14a4.500 4.500 0 0 1 0 9h-8" stroke-width="1.400"/><path d="M7 1.500l-3.500 3 3.500 3" stroke-width="1.400"/><path d="M2 17h22" stroke-width="1.200"/></svg>
<svg style="left:1475px;top:581px;color:#c0c0c0;" width="20" height="22" viewBox="0 0 20 22"><rect class="f" x="1" y="6.500" width="13" height="13" rx="2" style="fill:#7a7a7a"/><rect class="f" x="3.500" y="4" width="11" height="11" rx="1.500"/><rect x="5.500" y="1.500" width="13" height="13" rx="2" stroke-dasharray="2.600 1.600" stroke-width="1.300" stroke-linecap="butt"/></svg>
<svg style="left:1499px;top:581px;color:#c0c0c0;" width="22" height="22" viewBox="0 0 22 22"><path class="f" d="M8.500 8h5l1.500 12h-8z"/><rect class="f" x="8" y="3.500" width="6" height="4" rx="1"/><path d="M1.500 2.500l6 2.500M1.500 9.500l6-2M20.500 2.500l-6 2.500M20.500 9.500l-6-2" stroke-width="1.200"/></svg>
<svg style="left:1526px;top:581px;color:#c0c0c0;" width="20" height="22" viewBox="0 0 20 22"><path d="M2 2h8l-2 15h-3z" stroke-width="1.200"/><path class="f" d="M2.500 2h7l-.700 6c-1-1.500-1.800-1.500-2.300 0-.700-2-1.800-2-2.800-.500z"/><path d="M8 18.500c3 1 5.500 0 7.500-3M13 14.500l3 .500-.500 3" stroke-width="1.200"/></svg>
<svg style="left:1551px;top:581px;color:#c0c0c0;" width="18" height="22" viewBox="0 0 18 22"><path d="M5 10v-3.500a4 4 0 0 1 8 0v3.500" stroke-width="1.600"/><rect class="f" x="2.500" y="9.500" width="13" height="10" rx="1.500"/></svg>
<svg style="left:1575px;top:581px;color:#c0c0c0;" width="20" height="22" viewBox="0 0 20 22"><g class="f" style="fill:#9a9a9a"><rect x="6" y="2" width="4.200" height="4.200"/><rect x="14.400" y="2" width="4.200" height="4.200"/><rect x="10.200" y="6.200" width="4.200" height="4.200"/><rect x="14.400" y="10.400" width="4.200" height="4.200"/><rect x="14.400" y="15" width="4.200" height="3.500" opacity=".7"/></g><path d="M3.500 12v-2a2.500 2.500 0 0 1 5 0v2" stroke-width="1.300"/><rect class="f" x="1.500" y="11.500" width="9" height="8" rx="1"/></svg>
<svg style="left:1601px;top:581px;color:#6e6e6e;" width="36" height="24" viewBox="0 0 36 24"><rect class="f" x="5" y="4" width="16" height="15" rx="2" style="fill:#6a6a6a"/><circle cx="13" cy="11.500" r="5" class="f" style="fill:#4b4b4b"/><path d="M16 15l7 7M23 15l-7 7" stroke-width="1.500"/><path d="M24 9l4 4 4-4" stroke-width="1.300"/></svg>
<svg style="left:1642px;top:581px;color:#6e6e6e;" width="36" height="24" viewBox="0 0 36 24"><path d="M5 5h14l-14 14z" stroke-width="3" stroke-linejoin="miter" stroke="#6a6a6a"/><path d="M14 15l7 7M21 15l-7 7" stroke-width="1.500"/><path d="M24 9l4 4 4-4" stroke-width="1.300"/></svg>
<svg style="left:1481px;top:608px;color:#c0c0c0;" width="24" height="24" viewBox="0 0 24 24"><path d="M12 20.500h-7l-3-3v-14a1.500 1.500 0 0 1 1.500-1.500h14a1.500 1.500 0 0 1 1.500 1.500v11" stroke-width="1.400"/><path class="f" d="M2.500 16.500l4 4h-4z" opacity=".8"/><circle class="f" cx="17.5" cy="19.5" r="4.600"/><path d="M17.5 16.5v6M14.5 19.5h6" stroke="#505050" stroke-width="1.300"/></svg>
<svg style="left:1506px;top:608px;color:#c0c0c0;" width="24" height="24" viewBox="0 0 24 24"><path d="M12 20.500h-7l-3-3v-14a1.500 1.500 0 0 1 1.500-1.500h14a1.500 1.500 0 0 1 1.500 1.500v11" stroke-width="1.400"/><path d="M10.500 5l5 2.500v5.500l-5 2.500-5-2.500v-5.500zM5.500 7.500l5 2.500 5-2.500M10.500 10v5.500" stroke-width="1.100"/><circle class="f" cx="17.5" cy="19.5" r="4.600"/><path d="M17.5 16.5v6M14.5 19.5h6" stroke="#505050" stroke-width="1.300"/></svg>
<svg style="left:1530px;top:608px;color:#c0c0c0;" width="26" height="24" viewBox="0 0 26 24"><path class="f" d="M1.500 17.500v-14a1.500 1.500 0 0 1 1.500-1.500h5.500l2 2.500h7.500a1.500 1.500 0 0 1 1.500 1.500v11.500a1.500 1.500 0 0 1-1.500 1.500h-15a1.500 1.500 0 0 1-1.500-1.500z"/><circle cx="19" cy="19.500" r="5.800" class="f" style="fill:#505050"/><circle class="f" cx="19" cy="19.5" r="4.600"/><path d="M19 16.5v6M16 19.5h6" stroke="#505050" stroke-width="1.300"/></svg>
<svg style="left:1555px;top:608px;color:#c0c0c0;" width="24" height="24" viewBox="0 0 24 24"><rect x="9.500" y="1.500" width="12" height="11" rx="2" stroke-width="1.400"/><rect class="f" x="13" y="4.500" width="5" height="5" style="fill:#9a9a9a"/><path d="M13 12.500v6.500a1.500 1.500 0 0 1-1.500 1.500h-8a1.500 1.500 0 0 1-1.500-1.500v-7.500a1.500 1.500 0 0 1 1.500-1.500h6" stroke-width="1.400"/><path d="M16 13v1.500a2.500 2.500 0 0 1-2.500 2.500h-6" stroke-width="1.400"/><path class="f" d="M9 13.500v7l-4.500-3.500z"/></svg>
<svg style="left:1580px;top:608px;color:#c0c0c0;" width="24" height="24" viewBox="0 0 24 24"><rect x="9.500" y="1.500" width="12" height="11" rx="2" stroke-width="1.400"/><path d="M13 12.500v6.500a1.500 1.500 0 0 1-1.500 1.500h-8a1.500 1.500 0 0 1-1.500-1.500v-7.500a1.500 1.500 0 0 1 1.500-1.500h6" stroke-width="1.400"/><path d="M14.500 7.500l-8 8" stroke-width="1.500"/><path class="f" d="M4.500 17.500l1-6 5 5z"/></svg>
<svg style="left:1606px;top:608px;color:#c0c0c0;" width="22" height="24" viewBox="0 0 22 24"><rect class="f" x="1.500" y="2" width="18" height="18" rx="2.500"/><circle class="f" cx="10.500" cy="11" r="5" style="fill:#505050"/></svg>
<svg style="left:1630px;top:608px;color:#727272;" width="24" height="24" viewBox="0 0 24 24"><path d="M11 3.500h-8a1.500 1.500 0 0 0-1.500 1.500v12a1.500 1.500 0 0 0 1.500 1.500h5" stroke-width="1.300"/><path d="M4 10.500h6M6.500 8l-2.500 2.500 2.500 2.500" stroke-width="1.300"/><path class="f" d="M10 8.500h3l1-2h4l1 2h2a1.500 1.500 0 0 1 1.500 1.500v8a1.500 1.500 0 0 1-1.500 1.500h-11a1.500 1.500 0 0 1-1.500-1.500v-8a1.500 1.500 0 0 1 1.500-1.500z"/><circle class="f" cx="16" cy="14" r="3" style="fill:#505050"/></svg>
<svg style="left:1657px;top:607px;color:#c0c0c0;" width="20" height="24" viewBox="0 0 20 24"><path d="M2 5.500h16M4 5.500l1 15.500a1.500 1.500 0 0 0 1.500 1.500h7a1.500 1.500 0 0 0 1.500-1.500l1-15.500M7 5.500v-2.500h6v2.500M7.500 9v10M10 9v10M12.500 9v10" stroke-width="1.300"/></svg>
<svg style="left:421px;top:850px;color:#d0d0d0;" width="22" height="22" viewBox="0 0 20 20"><rect x="1.500" y="1.500" width="17" height="17" rx="2" stroke-width="1.400"/><path d="M6 1.500v17M15 1.500v17" stroke-width="1.300"/><path class="f" d="M9 5.500h4l-2 2.500zM9 14.500h4l-2-2.500z"/></svg>
<svg style="left:391px;top:873px;color:#767676;" width="24" height="24" viewBox="0 0 24 24"><rect x="2.500" y="3.500" width="18" height="17" rx="1.500" stroke-width="1.200"/><path d="M2.500 9h18M2.500 15h18M8.500 3.500v17M14.500 3.500v17" stroke-width=".6"/><path d="M3 14c3-8 6-8 8.500-2s5.500 6 9-1" stroke-width="1.400"/></svg>
<svg style="left:430px;top:873px;color:#c0c0c0;" width="24" height="24" viewBox="0 0 24 24"><rect x="2" y="3" width="17" height="18" rx="2" stroke-width="1.400"/><path d="M6.500 3v18M15 3v18" stroke-width="1.300"/><path class="f" d="M9 7h4l-2 2.500zM9 17h4l-2-2.500z"/></svg>
<svg style="left:454px;top:873px;color:#c0c0c0;" width="24" height="24" viewBox="0 0 24 24"><path d="M19 14v-9a2 2 0 0 0-2-2h-13a2 2 0 0 0-2 2v14a2 2 0 0 0 2 2h9" stroke-width="1.400"/><path d="M6.500 3v18M15 3v10" stroke-width="1.300"/><path class="f" d="M9 7h4l-2 2.500zM9 17h4l-2-2.500z"/><circle class="f" cx="18.500" cy="19.500" r="4.600"/><path d="M18.500 16.500v6M15.500 19.500h6" stroke="#505050" stroke-width="1.300"/></svg>
<svg style="left:492px;top:873px;color:#767676;" width="24" height="24" viewBox="0 0 24 24"><circle cx="9" cy="9.500" r="6.500" stroke-width="1.400"/><path d="M14 14.500l5.500 5.500" stroke-width="2"/><path d="M6 9.500h6" stroke-width="1.300"/></svg>
<svg style="left:517px;top:873px;color:#767676;" width="24" height="24" viewBox="0 0 24 24"><circle cx="9" cy="9.500" r="6.500" stroke-width="1.400"/><path d="M14 14.500l5.500 5.500" stroke-width="2"/><path d="M6 9.500h6M9 6.500v6" stroke-width="1.300"/></svg>
<svg style="left:553px;top:873px;color:#767676;" width="24" height="24" viewBox="0 0 24 24"><path d="M6.500 5v14" stroke-width="1.500"/><path class="f" d="M19 5v14l-10.500-7z"/></svg>
<svg style="left:578px;top:873px;color:#767676;" width="24" height="24" viewBox="0 0 24 24"><path d="M19 5v14" stroke-width="1.500"/><path class="f" d="M16 5v14l-10.500-7z"/></svg>
<svg style="left:603px;top:873px;color:#767676;" width="24" height="24" viewBox="0 0 24 24"><path class="f" d="M6 3.500l13 8.500-13 8.500z"/></svg>
<svg style="left:629px;top:873px;color:#767676;" width="24" height="24" viewBox="0 0 24 24"><path d="M5.500 5v14" stroke-width="1.500"/><path class="f" d="M8.500 5v14l10.500-7z"/></svg>
<svg style="left:653px;top:873px;color:#767676;" width="24" height="24" viewBox="0 0 24 24"><path d="M18.500 5v14" stroke-width="1.500"/><path class="f" d="M6 5v14l10.500-7z"/></svg>
<svg style="left:691px;top:873px;color:#767676;" width="24" height="24" viewBox="0 0 24 24"><path d="M4 12v-1.500a4 4 0 0 1 4-4h10M20 12v1.500a4 4 0 0 1-4 4h-10" stroke-width="1.700"/><path class="f" d="M16 2.500l5 4-5 4zM8 13.500l-5 4 5 4z"/></svg>
<svg style="left:727px;top:873px;color:#c0c0c0;" width="26" height="24" viewBox="0 0 26 24"><path d="M3 7v12.500h14M5.500 5v12.500h2" stroke-width="1.100"/><rect x="7" y="2.500" width="14.500" height="13" rx="1.500" stroke-width="1.400"/><path d="M7 6h14.500" stroke-width="2"/><path d="M10 4.200h1.500M14 4.200h1.500M18 4.200h1.500" stroke="#505050" stroke-width="1"/><circle class="f" cx="20.500" cy="19" r="4.600"/><path d="M20.500 16v6M17.500 19h6" stroke="#505050" stroke-width="1.300"/></svg>
<svg style="left:755px;top:873px;color:#767676;" width="24" height="24" viewBox="0 0 24 24"><path d="M14 18.500h-7l-4-4v-10a1.500 1.500 0 0 1 1.500-1.500h14a1.500 1.500 0 0 1 1.500 1.500v9" stroke-width="1.300"/><path class="f" d="M3 14.500l4 4h-4z"/><path d="M6 5.500h2M10.500 5.500h2M15 5.500h2" stroke-width="1.200"/><circle class="f" cx="19.500" cy="19" r="4.400"/><path d="M19.500 16.200v5.600M16.700 19h5.600" stroke="#505050" stroke-width="1.200"/></svg>
<svg style="left:780px;top:873px;color:#767676;" width="26" height="24" viewBox="0 0 26 24"><path d="M5 17v-12.500a1.500 1.500 0 0 1 1.500-1.500h14a1.500 1.500 0 0 1 1.500 1.500v9" stroke-width="1.300"/><path d="M8 5.500h2M12.500 5.500h2M17 5.500h2" stroke-width="1.200"/><rect x="5" y="16" width="9" height="5" rx="2.500" stroke-width="1.400"/><rect x="12" y="16" width="9" height="5" rx="2.500" stroke-width="1.400"/></svg>
<svg style="left:806px;top:873px;color:#767676;" width="26" height="24" viewBox="0 0 26 24"><path d="M4 17v-12.500a1.500 1.500 0 0 1 1.500-1.500h14a1.500 1.500 0 0 1 1.500 1.500v9" stroke-width="1.300"/><path d="M7 5.500h2M11.500 5.500h2M16 5.500h2" stroke-width="1.200"/><path d="M9 21h-2a2.500 2.500 0 0 1 0-5h2M15 16h2a2.500 2.500 0 0 1 0 5h-2M13.500 14.500l-3 8" stroke-width="1.400"/></svg>
<svg style="left:841px;top:873px;color:#c0c0c0;" width="24" height="24" viewBox="0 0 24 24"><rect x="3" y="3" width="15" height="15" rx="2" stroke-width="1.500"/><rect class="f" x="5.500" y="5.500" width="10" height="10" style="fill:#9a9a9a"/><path d="M21 7v11a2.500 2.500 0 0 1-2.500 2.500h-11" stroke-width="1.500" stroke-dasharray="2.500 1.500" stroke-linecap="butt"/></svg>
<div style="left:903px;top:873px;width:20px;height:25px;background:#4a4a4a;"></div>
<svg style="left:879px;top:873px;color:#767676;" width="24" height="24" viewBox="0 0 24 24"><rect x="6" y="5" width="12" height="12" rx="1.500" transform="rotate(45 12 11)" stroke-width="1.300"/><path d="M3 4l5 4M8 4.500v3.500h-3.500M21 19l-5-4M16 18.500v-3.500h3.500" stroke-width="1.300"/></svg>
<svg style="left:906px;top:879px;color:#d8d8d8;stroke-width:1.400" width="14" height="12" viewBox="0 0 14 12"><path d="M2 3l5 5 5-5"/></svg>
<svg style="left:924px;top:873px;color:#767676;" width="24" height="24" viewBox="0 0 24 24"><rect x="5" y="4" width="11" height="11" rx="1.500" transform="rotate(45 10.500 9.500)" stroke-width="1.300"/><rect class="f" x="7.500" y="6.500" width="6" height="6" transform="rotate(45 10.500 9.500)"/><path d="M13 14h8M14 14l.700 8h5.600l.700-8M15.500 12.500h3" stroke-width="1.200" /><rect class="f" x="14.500" y="14.500" width="5" height="7" style="fill:#505050"/><path d="M13 14h8M14 14l.700 8h5.600l.700-8M15.500 12.500h3M16.200 16v4M18.300 16v4" stroke-width="1.100"/></svg>
<svg style="left:949px;top:873px;color:#767676;" width="26" height="24" viewBox="0 0 26 24"><path d="M6 4.500h13l-3 13h-13z" stroke-width="1.300"/><path d="M19 6h4M18.500 9h3.500M17.500 12h3" stroke-width="1.300"/><path class="f" d="M3 17.500l2-3 1 3z"/></svg>
<svg style="left:975px;top:873px;color:#767676;" width="24" height="24" viewBox="0 0 24 24"><path d="M5 16l11-11.500 3 3-11.500 11z" class="f"/><path d="M3 21h17" stroke-width="1.600"/></svg>
<svg style="left:290px;top:565px;color:#c0c0c0;" width="20" height="22" viewBox="0 0 20 22"><path d="M7 3.500h-3a1.500 1.500 0 0 0-1.500 1.500v12a1.500 1.500 0 0 0 1.500 1.500h12a1.500 1.500 0 0 0 1.500-1.500v-12a1.500 1.500 0 0 0-1.500-1.500h-3" stroke-width="1.300"/><path d="M10 2v10M6.500 9l3.500 3.500 3.500-3.500" stroke-width="1.400"/></svg>
<svg style="left:315px;top:565px;color:#c0c0c0;" width="22" height="22" viewBox="0 0 22 22"><path d="M5 15.500h-1.500a1.500 1.500 0 0 1-1.500-1.500v-10a1.500 1.500 0 0 1 1.500-1.500h10a1.500 1.500 0 0 1 1.500 1.500v1.500" stroke-width="1.300"/><rect x="6.500" y="7" width="13" height="13" rx="1.500" stroke-width="1.300"/><path d="M13 10v7M9.500 13.500h7" stroke-width="1.300"/></svg>
<svg style="left:341px;top:564px;color:#c0c0c0;" width="20" height="24" viewBox="0 0 20 24"><path d="M2 5.500h16M4 5.500l1 15.500a1.500 1.500 0 0 0 1.500 1.500h7a1.500 1.500 0 0 0 1.500-1.500l1-15.500M7 5.500v-2.500h6v2.500M7.500 9v10M10 9v10M12.500 9v10" stroke-width="1.300"/></svg>
<svg style="left:193px;top:596px;color:#c0c0c0;" width="22" height="20" viewBox="0 0 22 20"><path class="f" d="M3 14l10-10.500 3 2.500-10 10.500-4 1.500z"/><path d="M14 2.500l2-1.500 2.500 2.500-1.500 2" stroke-width="1.400"/><circle cx="14.500" cy="14.500" r="3" stroke-width="1.400"/><path d="M14.500 9.500v1.500M14.500 18v1.500M9.500 14.500h1.500M18 14.500h1.500M11 11l1 1M17 17l1 1M18 11l-1 1M11 18l1-1" stroke-width="1.300"/></svg>
<svg style="left:50px;top:598px;color:#7a7a7a;" width="5" height="14" viewBox="0 0 5 14"><path d="M0 2l4 5M4 2l-4 10" stroke-width="1.200"/></svg>
<svg style="left:338px;top:644px;color:#d8d8d8;" width="18" height="18" viewBox="0 0 18 18"><path d="M4 9v-3.500a3.200 3.200 0 0 1 6.300-.800" stroke-width="1.500"/><rect class="f" x="6" y="8.500" width="10.500" height="8" rx="1.500"/></svg>
<svg style="left:314px;top:749px;color:#c0c0c0;" width="22" height="22" viewBox="0 0 22 22"><path d="M11 3a8 8 0 1 1-5.700 2.400" stroke-width="1.300"/><path d="M4.300 6.500a8 8 0 0 1 4.700-3.300" stroke-width="1.300" stroke-dasharray="1.200 1.800"/><path d="M11 3v8" stroke-width="1.600"/><circle class="f" cx="11" cy="11.500" r="2"/></svg>
<svg style="left:340px;top:749px;color:#c0c0c0;" width="22" height="22" viewBox="0 0 22 22"><g transform="rotate(-45 11 11)"><path d="M8.600 2.300v4.200l2.400 1.400 2.400-1.400v-4.200a5 5 0 0 1 .300 8.700v8.200a2.700 2.700 0 0 1-5.400 0v-8.200a5 5 0 0 1 .300-8.700z" stroke-width="1.400"/></g></svg>
<svg style="left:181px;top:782px;color:#767676;overflow:hidden" width="20" height="15" viewBox="0 0 20 15"><path d="M3 3.500h14M1.500 8.500h17M3 13.500h14" stroke-width="2"/><path class="f" d="M7 6.500l3-3 3 3zM7 12l3-3 3 3z"/></svg>
<svg style="left:219px;top:782px;color:#767676;overflow:hidden" width="20" height="15" viewBox="0 0 20 15"><rect x="2" y="2.500" width="16" height="16" rx="1.500" stroke-width="1.200"/><g class="f"><rect x="3" y="3.500" width="5" height="5"/><rect x="12" y="3.500" width="5" height="5" opacity=".6"/><rect x="8" y="8.500" width="4" height="5" opacity=".8"/></g></svg>
<svg style="left:257px;top:782px;color:#767676;overflow:hidden" width="20" height="15" viewBox="0 0 20 15"><rect x="2" y="2.500" width="6" height="5" stroke-width="1.200"/><rect x="12" y="2.500" width="6" height="5" stroke-width="1.200"/><path d="M8 5h4M5 7.500v8M15 7.500v8M2.500 15h5M12.500 15h5" stroke-width="1.200"/></svg>
<svg style="left:295px;top:782px;color:#767676;overflow:hidden" width="20" height="15" viewBox="0 0 20 15"><path d="M3 15v-9a2 2 0 0 1 2-2h10a2 2 0 0 1 2 2v9" stroke-width="1.200"/><rect class="f" x="5.500" y="7" width="11" height="10" rx="1.500" opacity=".7"/></svg>
<svg style="left:333px;top:782px;color:#767676;overflow:hidden" width="20" height="15" viewBox="0 0 20 15"><rect class="f" x="1.500" y="3.500" width="17" height="14" rx="1.500"/><g class="f" style="fill:#4a4a4a"><rect x="5.500" y="6" width="9" height="4"/><rect x="5.500" y="11.500" width="9" height="4"/><rect x="2.500" y="5" width="1.800" height="1.800"/><rect x="2.500" y="8.500" width="1.800" height="1.800"/><rect x="2.500" y="12" width="1.800" height="1.800"/><rect x="15.700" y="5" width="1.800" height="1.800"/><rect x="15.700" y="8.500" width="1.800" height="1.800"/><rect x="15.700" y="12" width="1.800" height="1.800"/></g></svg>
<svg style="left:365px;top:185px;" width="727" height="643" viewBox="365 185 727 643"><g id="skb" stroke="#7aa3c6" stroke-width="1" opacity=".6"><ellipse cx="719" cy="422" rx="148" ry="159"/><path d="M684 269C676 330 671 400 673 468S684 580 697 655"/><path d="M574 462C620 468 680 470 720 466S820 455 864 444C875 440 884 436 891 434"/><path d="M864 444C872 436 884 432 893 434C902 437 907 448 908 470C906 495 898 512 888 524C878 534 866 541 858 539C852 538 848 536 846 534"/><path d="M866 400C866 420 865 435 864 444C861 465 856 482 852 497C848 512 846 525 844 538"/><path d="M575 462C578 490 585 510 589 528C586 545 587 560 593 580C601 600 626 619 651 633C671 644 686 653 698 661C713 656 741 641 776 616C806 593 829 566 841 541"/><path d="M791 609C784 640 778 680 778 720C778 745 781 760 784 769"/><ellipse cx="760" cy="500" rx="42" ry="40"/><ellipse cx="623" cy="500" rx="22" ry="37"/><path d="M846 534C842 560 836 585 832 612C829 640 829 665 831 680"/></g><g id="skd" stroke="#3c3c3c" stroke-width="1" opacity=".62"><path d="M578 376C572 400 572 430 576 457C579 475 584 492 588 507C588 520 585 535 584 550C585 565 590 580 600 595C615 610 640 625 668 641C680 648 690 657 699 661C705 662 710 660 716 657C745 642 780 618 812 588C825 575 835 560 841 540C846 525 850 508 853 493"/><path d="M716 657C717 668 716 680 713 690C712 695 711 699 710 702"/><path d="M847 540C840 562 833 590 829 612C826 632 826 660 829 684"/><path d="M675.500 552L668 572L677 582"/><path d="M680 611C690 609 705 610 718 615M686 620L692.600 620.500"/><path d="M595 457C610 448 630 443 645 435C650 430 652 426 652.600 423C650 430 640 438 622 446"/><path d="M700.600 422.400C708 430 718 435 735 437C760 440 790 445 809 451M700.600 422.400C705 428 708 431 714 433"/><ellipse cx="620.600" cy="500.600" rx="15" ry="33" transform="rotate(-4 620.600 500.600)"/><path d="M598 478C600 470 610 462 622 461C632 461 640 464 644 467L641 470M621 455C640 460 660 480 674 522M599 470C597 480 598 498 606 515"/><path d="M590 466L593 470L587 474L592 480L586 484L592 490L585 493M609 530L613 536L615 531L618 535"/><path d="M641 470C648 485 652 498 650 512M644 467L650 482"/><circle cx="751" cy="499.500" r="31"/><path d="M708.600 507C710 490 715 475 722 464C740 455 765 452 789 457C800 462 812 470 823 481C815 495 808 503 800 510"/><path d="M720 466C740 458 770 456 790 462C805 470 810 480 806 492"/><path d="M696 511C700 480 715 455 741 445M786 457L791 453.500L790 459L798 458L797 463L812.600 466.300L806 473L824 480.500"/><path d="M775 530L780 535L783 529L788 533L790 527L795 531L797 519"/></g></svg>
<svg style="left:1503px;top:115px;overflow:hidden" width="144" height="144" viewBox="0 0 144 144"><g transform="scale(.189) translate(-328 -185)"><g stroke="#7aa3c6" stroke-width="2.300" opacity=".45"><ellipse cx="719" cy="422" rx="148" ry="159"/><path d="M684 269C676 330 671 400 673 468S684 580 697 655"/><path d="M574 462C620 468 680 470 720 466S820 455 864 444C875 440 884 436 891 434"/><path d="M864 444C872 436 884 432 893 434C902 437 907 448 908 470C906 495 898 512 888 524C878 534 866 541 858 539C852 538 848 536 846 534"/><path d="M866 400C866 420 865 435 864 444C861 465 856 482 852 497C848 512 846 525 844 538"/><path d="M575 462C578 490 585 510 589 528C586 545 587 560 593 580C601 600 626 619 651 633C671 644 686 653 698 661C713 656 741 641 776 616C806 593 829 566 841 541"/><path d="M791 609C784 640 778 680 778 720C778 745 781 760 784 769"/><ellipse cx="760" cy="500" rx="42" ry="40"/><ellipse cx="623" cy="500" rx="22" ry="37"/><path d="M846 534C842 560 836 585 832 612C829 640 829 665 831 680"/></g><g stroke="#3c3c3c" stroke-width="2.300" opacity=".42"><path d="M578 376C572 400 572 430 576 457C579 475 584 492 588 507C588 520 585 535 584 550C585 565 590 580 600 595C615 610 640 625 668 641C680 648 690 657 699 661C705 662 710 660 716 657C745 642 780 618 812 588C825 575 835 560 841 540C846 525 850 508 853 493"/><path d="M716 657C717 668 716 680 713 690C712 695 711 699 710 702"/><path d="M847 540C840 562 833 590 829 612C826 632 826 660 829 684"/><path d="M675.500 552L668 572L677 582"/><path d="M680 611C690 609 705 610 718 615M686 620L692.600 620.500"/><path d="M595 457C610 448 630 443 645 435C650 430 652 426 652.600 423C650 430 640 438 622 446"/><path d="M700.600 422.400C708 430 718 435 735 437C760 440 790 445 809 451M700.600 422.400C705 428 708 431 714 433"/><ellipse cx="620.600" cy="500.600" rx="15" ry="33" transform="rotate(-4 620.600 500.600)"/><path d="M598 478C600 470 610 462 622 461C632 461 640 464 644 467L641 470M621 455C640 460 660 480 674 522M599 470C597 480 598 498 606 515"/><path d="M590 466L593 470L587 474L592 480L586 484L592 490L585 493M609 530L613 536L615 531L618 535"/><path d="M641 470C648 485 652 498 650 512M644 467L650 482"/><circle cx="751" cy="499.500" r="31"/><path d="M708.600 507C710 490 715 475 722 464C740 455 765 452 789 457C800 462 812 470 823 481C815 495 808 503 800 510"/><path d="M720 466C740 458 770 456 790 462C805 470 810 480 806 492"/><path d="M696 511C700 480 715 455 741 445M786 457L791 453.500L790 459L798 458L797 463L812.600 466.300L806 473L824 480.500"/><path d="M775 530L780 535L783 529L788 533L790 527L795 531L797 519"/></g></g></svg>
<svg style="left:1371px;top:119px;overflow:hidden;stroke:none" width="82" height="120" viewBox="0 0 82 120"><defs><linearGradient id="g1" x1="0" x2="1" y1="0" y2="0"><stop offset="0.000" stop-color="rgb(250,250,250)"/><stop offset="0.008" stop-color="rgb(250,250,250)"/><stop offset="0.016" stop-color="rgb(250,250,250)"/><stop offset="0.023" stop-color="rgb(250,250,250)"/><stop offset="0.031" stop-color="rgb(250,250,250)"/><stop offset="0.039" stop-color="rgb(220,220,220)"/><stop offset="0.047" stop-color="rgb(196,196,196)"/><stop offset="0.054" stop-color="rgb(150,150,150)"/><stop offset="0.062" stop-color="rgb(250,250,250)"/><stop offset="0.070" stop-color="rgb(250,250,250)"/><stop offset="0.078" stop-color="rgb(158,158,158)"/><stop offset="0.085" stop-color="rgb(137,137,137)"/><stop offset="0.093" stop-color="rgb(204,204,204)"/><stop offset="0.101" stop-color="rgb(221,221,221)"/><stop offset="0.109" stop-color="rgb(250,250,250)"/><stop offset="0.116" stop-color="rgb(250,250,250)"/><stop offset="0.124" stop-color="rgb(245,245,245)"/><stop offset="0.132" stop-color="rgb(166,166,166)"/><stop offset="0.140" stop-color="rgb(243,243,243)"/><stop offset="0.147" stop-color="rgb(250,250,250)"/><stop offset="0.155" stop-color="rgb(218,218,218)"/><stop offset="0.163" stop-color="rgb(216,216,216)"/><stop offset="0.171" stop-color="rgb(239,239,239)"/><stop offset="0.178" stop-color="rgb(205,205,205)"/><stop offset="0.186" stop-color="rgb(180,180,180)"/><stop offset="0.194" stop-color="rgb(180,180,180)"/><stop offset="0.202" stop-color="rgb(180,180,180)"/><stop offset="0.209" stop-color="rgb(180,180,180)"/><stop offset="0.217" stop-color="rgb(180,180,180)"/><stop offset="0.225" stop-color="rgb(188,188,188)"/><stop offset="0.233" stop-color="rgb(218,218,218)"/><stop offset="0.240" stop-color="rgb(210,210,210)"/><stop offset="0.248" stop-color="rgb(207,207,207)"/><stop offset="0.256" stop-color="rgb(217,217,217)"/><stop offset="0.264" stop-color="rgb(190,190,190)"/><stop offset="0.271" stop-color="rgb(154,154,154)"/><stop offset="0.279" stop-color="rgb(200,200,200)"/><stop offset="0.287" stop-color="rgb(229,229,229)"/><stop offset="0.295" stop-color="rgb(250,250,250)"/><stop offset="0.302" stop-color="rgb(224,224,224)"/><stop offset="0.310" stop-color="rgb(231,231,231)"/><stop offset="0.318" stop-color="rgb(242,242,242)"/><stop offset="0.326" stop-color="rgb(200,200,200)"/><stop offset="0.333" stop-color="rgb(233,233,233)"/><stop offset="0.341" stop-color="rgb(193,193,193)"/><stop offset="0.349" stop-color="rgb(201,201,201)"/><stop offset="0.357" stop-color="rgb(236,236,236)"/><stop offset="0.364" stop-color="rgb(134,134,134)"/><stop offset="0.372" stop-color="rgb(191,191,191)"/><stop offset="0.380" stop-color="rgb(180,180,180)"/><stop offset="0.388" stop-color="rgb(180,180,180)"/><stop offset="0.395" stop-color="rgb(130,130,130)"/><stop offset="0.403" stop-color="rgb(180,180,180)"/><stop offset="0.411" stop-color="rgb(148,148,148)"/><stop offset="0.419" stop-color="rgb(185,185,185)"/><stop offset="0.426" stop-color="rgb(180,180,180)"/><stop offset="0.434" stop-color="rgb(199,199,199)"/><stop offset="0.442" stop-color="rgb(180,180,180)"/><stop offset="0.450" stop-color="rgb(180,180,180)"/><stop offset="0.457" stop-color="rgb(180,180,180)"/><stop offset="0.465" stop-color="rgb(216,216,216)"/><stop offset="0.473" stop-color="rgb(198,198,198)"/><stop offset="0.481" stop-color="rgb(236,236,236)"/><stop offset="0.488" stop-color="rgb(219,219,219)"/><stop offset="0.496" stop-color="rgb(226,226,226)"/><stop offset="0.504" stop-color="rgb(128,128,128)"/><stop offset="0.512" stop-color="rgb(221,221,221)"/><stop offset="0.519" stop-color="rgb(244,244,244)"/><stop offset="0.527" stop-color="rgb(232,232,232)"/><stop offset="0.535" stop-color="rgb(240,240,240)"/><stop offset="0.543" stop-color="rgb(250,250,250)"/><stop offset="0.550" stop-color="rgb(250,250,250)"/><stop offset="0.558" stop-color="rgb(216,216,216)"/><stop offset="0.566" stop-color="rgb(235,235,235)"/><stop offset="0.574" stop-color="rgb(250,250,250)"/><stop offset="0.581" stop-color="rgb(243,243,243)"/><stop offset="0.589" stop-color="rgb(227,227,227)"/><stop offset="0.597" stop-color="rgb(193,193,193)"/><stop offset="0.605" stop-color="rgb(208,208,208)"/><stop offset="0.612" stop-color="rgb(180,180,180)"/><stop offset="0.620" stop-color="rgb(185,185,185)"/><stop offset="0.628" stop-color="rgb(180,180,180)"/><stop offset="0.636" stop-color="rgb(180,180,180)"/><stop offset="0.643" stop-color="rgb(180,180,180)"/><stop offset="0.651" stop-color="rgb(204,204,204)"/><stop offset="0.659" stop-color="rgb(180,180,180)"/><stop offset="0.667" stop-color="rgb(180,180,180)"/><stop offset="0.674" stop-color="rgb(183,183,183)"/><stop offset="0.682" stop-color="rgb(165,165,165)"/><stop offset="0.690" stop-color="rgb(180,180,180)"/><stop offset="0.698" stop-color="rgb(180,180,180)"/><stop offset="0.705" stop-color="rgb(159,159,159)"/><stop offset="0.713" stop-color="rgb(185,185,185)"/><stop offset="0.721" stop-color="rgb(180,180,180)"/><stop offset="0.729" stop-color="rgb(181,181,181)"/><stop offset="0.736" stop-color="rgb(199,199,199)"/><stop offset="0.744" stop-color="rgb(210,210,210)"/><stop offset="0.752" stop-color="rgb(180,180,180)"/><stop offset="0.760" stop-color="rgb(167,167,167)"/><stop offset="0.767" stop-color="rgb(217,217,217)"/><stop offset="0.775" stop-color="rgb(180,180,180)"/><stop offset="0.783" stop-color="rgb(180,180,180)"/><stop offset="0.791" stop-color="rgb(180,180,180)"/><stop offset="0.798" stop-color="rgb(191,191,191)"/><stop offset="0.806" stop-color="rgb(198,198,198)"/><stop offset="0.814" stop-color="rgb(230,230,230)"/><stop offset="0.822" stop-color="rgb(247,247,247)"/><stop offset="0.829" stop-color="rgb(215,215,215)"/><stop offset="0.837" stop-color="rgb(163,163,163)"/><stop offset="0.845" stop-color="rgb(207,207,207)"/><stop offset="0.853" stop-color="rgb(194,194,194)"/><stop offset="0.860" stop-color="rgb(180,180,180)"/><stop offset="0.868" stop-color="rgb(216,216,216)"/><stop offset="0.876" stop-color="rgb(236,236,236)"/><stop offset="0.884" stop-color="rgb(195,195,195)"/><stop offset="0.891" stop-color="rgb(180,180,180)"/><stop offset="0.899" stop-color="rgb(180,180,180)"/><stop offset="0.907" stop-color="rgb(181,181,181)"/><stop offset="0.915" stop-color="rgb(195,195,195)"/><stop offset="0.922" stop-color="rgb(183,183,183)"/><stop offset="0.930" stop-color="rgb(180,180,180)"/><stop offset="0.938" stop-color="rgb(193,193,193)"/><stop offset="0.946" stop-color="rgb(180,180,180)"/><stop offset="0.953" stop-color="rgb(187,187,187)"/><stop offset="0.961" stop-color="rgb(185,185,185)"/><stop offset="0.969" stop-color="rgb(180,180,180)"/><stop offset="0.977" stop-color="rgb(180,180,180)"/><stop offset="0.984" stop-color="rgb(180,180,180)"/><stop offset="0.992" stop-color="rgb(180,180,180)"/><stop offset="1.000" stop-color="rgb(180,180,180)"/></linearGradient><linearGradient id="g2" x1="0" x2="1" y1="0" y2="0"><stop offset="0.000" stop-color="rgb(230,230,230)"/><stop offset="0.008" stop-color="rgb(144,144,144)"/><stop offset="0.016" stop-color="rgb(210,210,210)"/><stop offset="0.023" stop-color="rgb(213,213,213)"/><stop offset="0.031" stop-color="rgb(195,195,195)"/><stop offset="0.039" stop-color="rgb(180,180,180)"/><stop offset="0.047" stop-color="rgb(196,196,196)"/><stop offset="0.054" stop-color="rgb(170,170,170)"/><stop offset="0.062" stop-color="rgb(201,201,201)"/><stop offset="0.070" stop-color="rgb(224,224,224)"/><stop offset="0.078" stop-color="rgb(237,237,237)"/><stop offset="0.085" stop-color="rgb(202,202,202)"/><stop offset="0.093" stop-color="rgb(180,180,180)"/><stop offset="0.101" stop-color="rgb(222,222,222)"/><stop offset="0.109" stop-color="rgb(207,207,207)"/><stop offset="0.116" stop-color="rgb(211,211,211)"/><stop offset="0.124" stop-color="rgb(216,216,216)"/><stop offset="0.132" stop-color="rgb(210,210,210)"/><stop offset="0.140" stop-color="rgb(208,208,208)"/><stop offset="0.147" stop-color="rgb(226,226,226)"/><stop offset="0.155" stop-color="rgb(245,245,245)"/><stop offset="0.163" stop-color="rgb(250,250,250)"/><stop offset="0.171" stop-color="rgb(228,228,228)"/><stop offset="0.178" stop-color="rgb(208,208,208)"/><stop offset="0.186" stop-color="rgb(232,232,232)"/><stop offset="0.194" stop-color="rgb(152,152,152)"/><stop offset="0.202" stop-color="rgb(180,180,180)"/><stop offset="0.209" stop-color="rgb(211,211,211)"/><stop offset="0.217" stop-color="rgb(244,244,244)"/><stop offset="0.225" stop-color="rgb(249,249,249)"/><stop offset="0.233" stop-color="rgb(250,250,250)"/><stop offset="0.240" stop-color="rgb(250,250,250)"/><stop offset="0.248" stop-color="rgb(241,241,241)"/><stop offset="0.256" stop-color="rgb(250,250,250)"/><stop offset="0.264" stop-color="rgb(250,250,250)"/><stop offset="0.271" stop-color="rgb(250,250,250)"/><stop offset="0.279" stop-color="rgb(250,250,250)"/><stop offset="0.287" stop-color="rgb(250,250,250)"/><stop offset="0.295" stop-color="rgb(151,151,151)"/><stop offset="0.302" stop-color="rgb(139,139,139)"/><stop offset="0.310" stop-color="rgb(180,180,180)"/><stop offset="0.318" stop-color="rgb(180,180,180)"/><stop offset="0.326" stop-color="rgb(194,194,194)"/><stop offset="0.333" stop-color="rgb(149,149,149)"/><stop offset="0.341" stop-color="rgb(216,216,216)"/><stop offset="0.349" stop-color="rgb(183,183,183)"/><stop offset="0.357" stop-color="rgb(211,211,211)"/><stop offset="0.364" stop-color="rgb(227,227,227)"/><stop offset="0.372" stop-color="rgb(212,212,212)"/><stop offset="0.380" stop-color="rgb(241,241,241)"/><stop offset="0.388" stop-color="rgb(220,220,220)"/><stop offset="0.395" stop-color="rgb(249,249,249)"/><stop offset="0.403" stop-color="rgb(239,239,239)"/><stop offset="0.411" stop-color="rgb(218,218,218)"/><stop offset="0.419" stop-color="rgb(232,232,232)"/><stop offset="0.426" stop-color="rgb(250,250,250)"/><stop offset="0.434" stop-color="rgb(229,229,229)"/><stop offset="0.442" stop-color="rgb(165,165,165)"/><stop offset="0.450" stop-color="rgb(227,227,227)"/><stop offset="0.457" stop-color="rgb(239,239,239)"/><stop offset="0.465" stop-color="rgb(250,250,250)"/><stop offset="0.473" stop-color="rgb(214,214,214)"/><stop offset="0.481" stop-color="rgb(133,133,133)"/><stop offset="0.488" stop-color="rgb(185,185,185)"/><stop offset="0.496" stop-color="rgb(198,198,198)"/><stop offset="0.504" stop-color="rgb(160,160,160)"/><stop offset="0.512" stop-color="rgb(250,250,250)"/><stop offset="0.519" stop-color="rgb(250,250,250)"/><stop offset="0.527" stop-color="rgb(250,250,250)"/><stop offset="0.535" stop-color="rgb(149,149,149)"/><stop offset="0.543" stop-color="rgb(203,203,203)"/><stop offset="0.550" stop-color="rgb(180,180,180)"/><stop offset="0.558" stop-color="rgb(189,189,189)"/><stop offset="0.566" stop-color="rgb(180,180,180)"/><stop offset="0.574" stop-color="rgb(195,195,195)"/><stop offset="0.581" stop-color="rgb(180,180,180)"/><stop offset="0.589" stop-color="rgb(180,180,180)"/><stop offset="0.597" stop-color="rgb(207,207,207)"/><stop offset="0.605" stop-color="rgb(187,187,187)"/><stop offset="0.612" stop-color="rgb(183,183,183)"/><stop offset="0.620" stop-color="rgb(180,180,180)"/><stop offset="0.628" stop-color="rgb(180,180,180)"/><stop offset="0.636" stop-color="rgb(201,201,201)"/><stop offset="0.643" stop-color="rgb(180,180,180)"/><stop offset="0.651" stop-color="rgb(215,215,215)"/><stop offset="0.659" stop-color="rgb(213,213,213)"/><stop offset="0.667" stop-color="rgb(209,209,209)"/><stop offset="0.674" stop-color="rgb(210,210,210)"/><stop offset="0.682" stop-color="rgb(180,180,180)"/><stop offset="0.690" stop-color="rgb(199,199,199)"/><stop offset="0.698" stop-color="rgb(189,189,189)"/><stop offset="0.705" stop-color="rgb(180,180,180)"/><stop offset="0.713" stop-color="rgb(180,180,180)"/><stop offset="0.721" stop-color="rgb(180,180,180)"/><stop offset="0.729" stop-color="rgb(180,180,180)"/><stop offset="0.736" stop-color="rgb(180,180,180)"/><stop offset="0.744" stop-color="rgb(127,127,127)"/><stop offset="0.752" stop-color="rgb(185,185,185)"/><stop offset="0.760" stop-color="rgb(180,180,180)"/><stop offset="0.767" stop-color="rgb(210,210,210)"/><stop offset="0.775" stop-color="rgb(180,180,180)"/><stop offset="0.783" stop-color="rgb(180,180,180)"/><stop offset="0.791" stop-color="rgb(184,184,184)"/><stop offset="0.798" stop-color="rgb(221,221,221)"/><stop offset="0.806" stop-color="rgb(190,190,190)"/><stop offset="0.814" stop-color="rgb(213,213,213)"/><stop offset="0.822" stop-color="rgb(217,217,217)"/><stop offset="0.829" stop-color="rgb(185,185,185)"/><stop offset="0.837" stop-color="rgb(226,226,226)"/><stop offset="0.845" stop-color="rgb(189,189,189)"/><stop offset="0.853" stop-color="rgb(180,180,180)"/><stop offset="0.860" stop-color="rgb(180,180,180)"/><stop offset="0.868" stop-color="rgb(180,180,180)"/><stop offset="0.876" stop-color="rgb(180,180,180)"/><stop offset="0.884" stop-color="rgb(180,180,180)"/><stop offset="0.891" stop-color="rgb(180,180,180)"/><stop offset="0.899" stop-color="rgb(215,215,215)"/><stop offset="0.907" stop-color="rgb(186,186,186)"/><stop offset="0.915" stop-color="rgb(180,180,180)"/><stop offset="0.922" stop-color="rgb(180,180,180)"/><stop offset="0.930" stop-color="rgb(180,180,180)"/><stop offset="0.938" stop-color="rgb(180,180,180)"/><stop offset="0.946" stop-color="rgb(180,180,180)"/><stop offset="0.953" stop-color="rgb(193,193,193)"/><stop offset="0.961" stop-color="rgb(219,219,219)"/><stop offset="0.969" stop-color="rgb(248,248,248)"/><stop offset="0.977" stop-color="rgb(245,245,245)"/><stop offset="0.984" stop-color="rgb(250,250,250)"/><stop offset="0.992" stop-color="rgb(250,250,250)"/><stop offset="1.000" stop-color="rgb(250,250,250)"/></linearGradient><linearGradient id="g3" x1="0" x2="1" y1="0" y2="0"><stop offset="0.000" stop-color="rgb(242,242,242)"/><stop offset="0.059" stop-color="rgb(242,242,242)"/><stop offset="0.118" stop-color="rgb(242,242,242)"/><stop offset="0.176" stop-color="rgb(203,203,203)"/><stop offset="0.235" stop-color="rgb(192,192,192)"/><stop offset="0.294" stop-color="rgb(175,175,175)"/><stop offset="0.353" stop-color="rgb(193,193,193)"/><stop offset="0.412" stop-color="rgb(199,199,199)"/><stop offset="0.471" stop-color="rgb(230,230,230)"/><stop offset="0.529" stop-color="rgb(215,215,215)"/><stop offset="0.588" stop-color="rgb(196,196,196)"/><stop offset="0.647" stop-color="rgb(203,203,203)"/><stop offset="0.706" stop-color="rgb(175,175,175)"/><stop offset="0.765" stop-color="rgb(212,212,212)"/><stop offset="0.824" stop-color="rgb(125,125,125)"/><stop offset="0.882" stop-color="rgb(175,175,175)"/><stop offset="0.941" stop-color="rgb(175,175,175)"/><stop offset="1.000" stop-color="rgb(175,175,175)"/></linearGradient><filter id="mot" x="0" y="0" width="100%" height="100%"><feTurbulence type="fractalNoise" baseFrequency="0.22 0.018" numOctaves="2" seed="7"/><feColorMatrix type="matrix" values="0 0 0 0 1  0 0 0 0 1  0 0 0 0 1  1.600 0 0 0 -0.550"/></filter><filter id="mot2" x="0" y="0" width="100%" height="100%"><feTurbulence type="fractalNoise" baseFrequency="0.3 0.02" numOctaves="2" seed="19"/><feColorMatrix type="matrix" values="0 0 0 0 0.150  0 0 0 0 0.150  0 0 0 0 0.150  1.400 0 0 0 -0.700"/></filter><filter id="kb" x="-50%" y="-50%" width="200%" height="200%"><feGaussianBlur stdDeviation=".5"/></filter></defs><rect x="0" y="0" width="82" height="120" fill="#ececec" stroke="none"/><rect x="14" y="0" width="54" height="120" fill="url(#g1)" stroke="none"/><rect x="14" y="0" width="54" height="120" filter="url(#mot)" stroke="none" fill="#fff"/><rect x="14" y="0" width="54" height="120" filter="url(#mot2)" stroke="none" fill="#fff"/></svg>
<svg style="left:1371px;top:277px;overflow:hidden;stroke:none" width="82" height="120" viewBox="0 0 82 120"><rect x="0" y="0" width="82" height="120" fill="#ececec" stroke="none"/><rect x="14" y="0" width="54" height="120" fill="url(#g2)" stroke="none"/><rect x="14" y="0" width="54" height="120" filter="url(#mot)" stroke="none" fill="#fff"/><ellipse cx="29" cy="27" rx="1.7" ry="2.5" fill="#2c2c2c" stroke="none" opacity=".6" filter="url(#kb)"/><ellipse cx="33" cy="52" rx="1.4" ry="2.1" fill="#2c2c2c" stroke="none" opacity=".6" filter="url(#kb)"/><ellipse cx="48" cy="31" rx="1" ry="1.5" fill="#2c2c2c" stroke="none" opacity=".6" filter="url(#kb)"/><ellipse cx="57" cy="60" rx="1.2" ry="1.8" fill="#2c2c2c" stroke="none" opacity=".6" filter="url(#kb)"/><ellipse cx="46" cy="85" rx="1.3" ry="2.0" fill="#2c2c2c" stroke="none" opacity=".6" filter="url(#kb)"/><ellipse cx="24" cy="97" rx="1.7" ry="2.5" fill="#2c2c2c" stroke="none" opacity=".6" filter="url(#kb)"/><ellipse cx="57" cy="101" rx="1.4" ry="2.1" fill="#2c2c2c" stroke="none" opacity=".6" filter="url(#kb)"/><ellipse cx="64" cy="105" rx="1.1" ry="1.7" fill="#2c2c2c" stroke="none" opacity=".6" filter="url(#kb)"/><ellipse cx="57" cy="12" rx="1.5" ry="2.2" fill="#2c2c2c" stroke="none" opacity=".6" filter="url(#kb)"/><ellipse cx="57" cy="4" rx="1" ry="1.5" fill="#2c2c2c" stroke="none" opacity=".6" filter="url(#kb)"/><ellipse cx="31" cy="46" rx="1" ry="1.5" fill="#2c2c2c" stroke="none" opacity=".6" filter="url(#kb)"/><ellipse cx="62" cy="72" rx="1.1" ry="1.7" fill="#2c2c2c" stroke="none" opacity=".6" filter="url(#kb)"/></svg>
<svg style="left:1371px;top:435px;overflow:hidden;stroke:none" width="82" height="120" viewBox="0 0 82 120"><rect x="0" y="0" width="82" height="120" fill="#ececec" stroke="none"/><rect x="14" y="0" width="6" height="120" fill="url(#g3)" stroke="none"/><rect x="20" y="0" width="13.5" height="120" fill="url(#g3)" stroke="none"/><rect x="20" y="0" width="13.5" height="120" fill="#000" opacity="0.14" stroke="none"/><rect x="33.5" y="0" width="14.0" height="120" fill="url(#g3)" stroke="none"/><rect x="47.5" y="0" width="13.5" height="120" fill="url(#g3)" stroke="none"/><rect x="47.5" y="0" width="13.5" height="120" fill="#000" opacity="0.04" stroke="none"/><rect x="61" y="0" width="7" height="120" fill="url(#g3)" stroke="none"/><rect x="14" y="0" width="54" height="120" filter="url(#mot2)" stroke="none" fill="#fff" opacity=".9"/><path d="M20 0v120M33.500 0v120M47.500 0v120M61 0v120" stroke="#1c1c1c" stroke-width="1"/><path d="M14 2.500h6M33.500 2.500h14M61 2.500h7M20 64h13.500M47.500 64h13.500" stroke="#1c1c1c" stroke-width="1"/><ellipse cx="24" cy="14" rx="1.3" ry="2.0" fill="#222" stroke="none" opacity=".7" filter="url(#kb)"/><ellipse cx="24" cy="47" rx="1.4" ry="2.1" fill="#222" stroke="none" opacity=".7" filter="url(#kb)"/><ellipse cx="24" cy="52" rx="1.2" ry="1.8" fill="#222" stroke="none" opacity=".7" filter="url(#kb)"/><ellipse cx="44" cy="46" rx="1.5" ry="2.2" fill="#222" stroke="none" opacity=".7" filter="url(#kb)"/><ellipse cx="44" cy="75" rx="1.5" ry="2.2" fill="#222" stroke="none" opacity=".7" filter="url(#kb)"/><ellipse cx="23" cy="86" rx="1.1" ry="1.7" fill="#222" stroke="none" opacity=".7" filter="url(#kb)"/><ellipse cx="31" cy="101" rx="1" ry="1.5" fill="#222" stroke="none" opacity=".7" filter="url(#kb)"/><ellipse cx="65" cy="117" rx="1.2" ry="1.8" fill="#222" stroke="none" opacity=".7" filter="url(#kb)"/><ellipse cx="15" cy="50" rx="0.9" ry="1.4" fill="#222" stroke="none" opacity=".7" filter="url(#kb)"/></svg>
<svg style="left:1371px;top:593px;overflow:hidden;stroke:none" width="82" height="120" viewBox="0 0 82 120"><rect x="0" y="0" width="82" height="120" fill="#ececec" stroke="none"/><svg x="0" y="15" width="82" height="90" viewBox="0 0 82 90" style="position:static;overflow:hidden"><polygon points="-36.8,98.9 -25.8,87.9 29.0,142.7 18.0,153.7" fill="#d6d6d6" stroke="#1e1e1e" stroke-width=".9"/><polygon points="72.8,98.9 83.8,87.9 138.6,142.7 127.6,153.7" fill="#c8c8c8" stroke="#1e1e1e" stroke-width=".9"/><polygon points="-36.8,77.0 -25.8,66.0 29.0,120.8 18.0,131.8" fill="#e6e6e6" stroke="#1e1e1e" stroke-width=".9"/><polygon points="18.0,131.8 72.8,77.0 83.8,87.9 29.0,142.7" fill="#cecece" stroke="#1e1e1e" stroke-width=".9"/><polygon points="72.8,77.0 83.8,66.0 138.6,120.8 127.6,131.8" fill="#bababa" stroke="#1e1e1e" stroke-width=".9"/><polygon points="-36.8,55.0 -25.8,44.1 29.0,98.9 18.0,109.8" fill="#bababa" stroke="#1e1e1e" stroke-width=".9"/><polygon points="18.0,109.8 72.8,55.0 83.8,66.0 29.0,120.8" fill="#d6d6d6" stroke="#1e1e1e" stroke-width=".9"/><polygon points="72.8,55.0 83.8,44.1 138.6,98.9 127.6,109.8" fill="#e6e6e6" stroke="#1e1e1e" stroke-width=".9"/><polygon points="-36.8,33.1 -25.8,22.2 29.0,77.0 18.0,87.9" fill="#e6e6e6" stroke="#1e1e1e" stroke-width=".9"/><polygon points="18.0,87.9 72.8,33.1 83.8,44.1 29.0,98.9" fill="#e6e6e6" stroke="#1e1e1e" stroke-width=".9"/><polygon points="72.8,33.1 83.8,22.2 138.6,77.0 127.6,87.9" fill="#bababa" stroke="#1e1e1e" stroke-width=".9"/><polygon points="-36.8,11.2 -25.8,0.2 29.0,55.0 18.0,66.0" fill="#dedede" stroke="#1e1e1e" stroke-width=".9"/><polygon points="18.0,66.0 72.8,11.2 83.8,22.2 29.0,77.0" fill="#c8c8c8" stroke="#1e1e1e" stroke-width=".9"/><polygon points="72.8,11.2 83.8,0.2 138.6,55.0 127.6,66.0" fill="#acacac" stroke="#1e1e1e" stroke-width=".9"/><polygon points="-36.8,-10.7 -25.8,-21.7 29.0,33.1 18.0,44.1" fill="#acacac" stroke="#1e1e1e" stroke-width=".9"/><polygon points="18.0,44.1 72.8,-10.7 83.8,0.2 29.0,55.0" fill="#e6e6e6" stroke="#1e1e1e" stroke-width=".9"/><polygon points="72.8,-10.7 83.8,-21.7 138.6,33.1 127.6,44.1" fill="#d6d6d6" stroke="#1e1e1e" stroke-width=".9"/><polygon points="-36.8,-32.6 -25.8,-43.6 29.0,11.2 18.0,22.2" fill="#dedede" stroke="#1e1e1e" stroke-width=".9"/><polygon points="18.0,22.2 72.8,-32.6 83.8,-21.7 29.0,33.1" fill="#dedede" stroke="#1e1e1e" stroke-width=".9"/><polygon points="72.8,-32.6 83.8,-43.6 138.6,11.2 127.6,22.2" fill="#c8c8c8" stroke="#1e1e1e" stroke-width=".9"/><polygon points="-36.8,-54.6 -25.8,-65.5 29.0,-10.7 18.0,0.2" fill="#c8c8c8" stroke="#1e1e1e" stroke-width=".9"/><polygon points="18.0,0.2 72.8,-54.6 83.8,-43.6 29.0,11.2" fill="#acacac" stroke="#1e1e1e" stroke-width=".9"/><polygon points="72.8,-54.6 83.8,-65.5 138.6,-10.7 127.6,0.2" fill="#d6d6d6" stroke="#1e1e1e" stroke-width=".9"/><rect x="0" y="0" width="82" height="90" filter="url(#mot)" stroke="none" fill="#fff" opacity=".25"/></svg></svg>
<svg style="left:1371px;top:751px;overflow:hidden;stroke:none" width="82" height="78" viewBox="0 0 82 78"><rect x="0" y="0" width="82" height="78" fill="#ececec" stroke="none"/><svg x="0" y="15" width="82" height="63" viewBox="0 0 82 63" style="position:static;overflow:hidden"><polygon points="-36.8,98.9 -25.8,87.9 29.0,142.7 18.0,153.7" fill="#e0cca4" stroke="#4a3218" stroke-width=".9"/><polygon points="72.8,98.9 83.8,87.9 138.6,142.7 127.6,153.7" fill="#bfa070" stroke="#4a3218" stroke-width=".9"/><polygon points="-36.8,77.0 -25.8,66.0 29.0,120.8 18.0,131.8" fill="#8c6a40" stroke="#4a3218" stroke-width=".9"/><polygon points="18.0,131.8 72.8,77.0 83.8,87.9 29.0,142.7" fill="#a07c4c" stroke="#4a3218" stroke-width=".9"/><polygon points="72.8,77.0 83.8,66.0 138.6,120.8 127.6,131.8" fill="#a07c4c" stroke="#4a3218" stroke-width=".9"/><polygon points="-36.8,55.0 -25.8,44.1 29.0,98.9 18.0,109.8" fill="#c9ab7a" stroke="#4a3218" stroke-width=".9"/><polygon points="18.0,109.8 72.8,55.0 83.8,66.0 29.0,120.8" fill="#bfa070" stroke="#4a3218" stroke-width=".9"/><polygon points="72.8,55.0 83.8,44.1 138.6,98.9 127.6,109.8" fill="#e0cca4" stroke="#4a3218" stroke-width=".9"/><polygon points="-36.8,33.1 -25.8,22.2 29.0,77.0 18.0,87.9" fill="#b08c5a" stroke="#4a3218" stroke-width=".9"/><polygon points="18.0,87.9 72.8,33.1 83.8,44.1 29.0,98.9" fill="#bfa070" stroke="#4a3218" stroke-width=".9"/><polygon points="72.8,33.1 83.8,22.2 138.6,77.0 127.6,87.9" fill="#c9ab7a" stroke="#4a3218" stroke-width=".9"/><polygon points="-36.8,11.2 -25.8,0.2 29.0,55.0 18.0,66.0" fill="#7c5e3a" stroke="#4a3218" stroke-width=".9"/><polygon points="18.0,66.0 72.8,11.2 83.8,22.2 29.0,77.0" fill="#a07c4c" stroke="#4a3218" stroke-width=".9"/><polygon points="72.8,11.2 83.8,0.2 138.6,55.0 127.6,66.0" fill="#e0cca4" stroke="#4a3218" stroke-width=".9"/><polygon points="-36.8,-10.7 -25.8,-21.7 29.0,33.1 18.0,44.1" fill="#7c5e3a" stroke="#4a3218" stroke-width=".9"/><polygon points="18.0,44.1 72.8,-10.7 83.8,0.2 29.0,55.0" fill="#a07c4c" stroke="#4a3218" stroke-width=".9"/><polygon points="72.8,-10.7 83.8,-21.7 138.6,33.1 127.6,44.1" fill="#a07c4c" stroke="#4a3218" stroke-width=".9"/><polygon points="-36.8,-32.6 -25.8,-43.6 29.0,11.2 18.0,22.2" fill="#d8c096" stroke="#4a3218" stroke-width=".9"/><polygon points="18.0,22.2 72.8,-32.6 83.8,-21.7 29.0,33.1" fill="#c9ab7a" stroke="#4a3218" stroke-width=".9"/><polygon points="72.8,-32.6 83.8,-43.6 138.6,11.2 127.6,22.2" fill="#b08c5a" stroke="#4a3218" stroke-width=".9"/><polygon points="-36.8,-54.6 -25.8,-65.5 29.0,-10.7 18.0,0.2" fill="#a07c4c" stroke="#4a3218" stroke-width=".9"/><polygon points="18.0,0.2 72.8,-54.6 83.8,-43.6 29.0,11.2" fill="#b08c5a" stroke="#4a3218" stroke-width=".9"/><polygon points="72.8,-54.6 83.8,-65.5 138.6,-10.7 127.6,0.2" fill="#7c5e3a" stroke="#4a3218" stroke-width=".9"/></svg></svg>
<div style="left:1371px;top:239px;width:82px;height:37px;background:#404040;"></div>
<div style="left:1371px;top:397px;width:82px;height:37px;background:#404040;"></div>
<div style="left:1371px;top:555px;width:82px;height:37px;background:#404040;"></div>
<div style="left:1371px;top:713px;width:82px;height:37px;background:#404040;"></div>
<svg style="left:1378px;top:250px;color:#d4d4d4;stroke-width:1;stroke-linecap:butt;-webkit-mask-image:linear-gradient(to right,#000 70%,rgba(0,0,0,.25));" width="72" height="14" viewBox="0 0 72 14"><path transform="translate(0.0 0) scale(0.8 1)" d="M1 4h10M6 1v12M6 4.500l-5 6M6 4.500l5 6"/><path transform="translate(8.8 0) scale(0.8 1)" d="M2.500 1.500h7v11h-7zM2.500 5h7M2.500 8.700h7"/><path transform="translate(25.6 0) scale(0.8 1)" d="M2 2.500h7.500c-1.500 5-4 8-8 10M6.500 8l4.500 4.500"/><path transform="translate(34.4 0) scale(0.8 1)" d="M4 1v12M4 5.500l5.500 3"/><path transform="translate(43.2 0) scale(0.8 1)" d="M3 1.500v10.500c3.500-1 6-3.500 8-7"/><path transform="translate(52.0 0) scale(0.8 1)" d="M1.500 7h9"/><path transform="translate(60.8 0) scale(0.8 1)" d="M4 1v12M4 5.500l5.500 3"/></svg>
<svg style="left:1378px;top:408px;color:#d4d4d4;stroke-width:1;stroke-linecap:butt;-webkit-mask-image:linear-gradient(to right,#000 70%,rgba(0,0,0,.25));" width="72" height="14" viewBox="0 0 72 14"><path transform="translate(0.0 0) scale(0.85 1)" d="M1 4h10M6 1v12M6 4.500l-5 6M6 4.500l5 6"/><path transform="translate(9.3 0) scale(0.85 1)" d="M2.500 1.500h7v11h-7zM2.500 5h7M2.500 8.700h7"/><path transform="translate(26.7 0) scale(0.85 1)" d="M1 2h4M3 1l-1 2.500M7 2h4.500M9 1l-1 2.500M1.500 5h4v7.500h-4zM1.500 7.500h4M1.500 10h4M8 5h3.500v5M8 5v8"/><path transform="translate(36.0 0) scale(0.85 1)" d="M2.500 1.500h7v11h-7zM2.500 5h7M2.500 8.700h7"/><path transform="translate(45.4 0) scale(0.85 1)" d="M3 7.500h5"/></svg>
<div class="t" style="left:1432px;top:405px;width:20px;height:20px;line-height:20px;font-size:13px;color:#a0a0a0;overflow:hidden;transform:scaleX(.8);transform-origin:0 50%;-webkit-mask-image:linear-gradient(to right,#000 30%,rgba(0,0,0,.2));">Wo</div>
<svg style="left:1378px;top:566px;color:#d4d4d4;stroke-width:1;stroke-linecap:butt;-webkit-mask-image:linear-gradient(to right,#000 70%,rgba(0,0,0,.25));" width="72" height="14" viewBox="0 0 72 14"><path transform="translate(0.0 0) scale(0.8 1)" d="M1 4h10M6 1v12M6 4.500l-5 6M6 4.500l5 6"/><path transform="translate(8.6 0) scale(0.8 1)" d="M2.500 1.500h7v11h-7zM2.500 5h7M2.500 8.700h7"/><path transform="translate(17.3 0) scale(0.8 1)" d="M2 2.500h8c-.500 5-3 8.500-7.500 10"/><path transform="translate(25.9 0) scale(0.8 1)" d="M2.500 3h7.500v8.500h-7.500z"/><path transform="translate(34.6 0) scale(0.8 1)" d="M1.500 7h9"/><path transform="translate(43.2 0) scale(0.8 1)" d="M3.500 2v6M9 1.500v6c0 3-2 4.500-4.500 5.500"/><path transform="translate(51.8 0) scale(0.8 1)" d="M2 3l3 1.500M2 12c4-1 7-3.500 9-8"/><path transform="translate(60.5 0) scale(0.8 1)" d="M4.500 1.500c-1 3-2 4.500-3.500 6M4.500 3.500h5c-.500 4.500-3 7.500-7 9M9.500 1l1 1.500M11 .500l1 1.500"/></svg>
<svg style="left:1378px;top:724px;color:#d4d4d4;stroke-width:1;stroke-linecap:butt;-webkit-mask-image:linear-gradient(to right,#000 70%,rgba(0,0,0,.25));" width="72" height="14" viewBox="0 0 72 14"><path transform="translate(0.0 0) scale(0.8 1)" d="M1 4h10M6 1v12M6 4.500l-5 6M6 4.500l5 6"/><path transform="translate(8.6 0) scale(0.8 1)" d="M2.500 1.500h7v11h-7zM2.500 5h7M2.500 8.700h7"/><path transform="translate(17.3 0) scale(0.8 1)" d="M2 2.500h8c-.500 5-3 8.500-7.500 10"/><path transform="translate(25.9 0) scale(0.8 1)" d="M2.500 3h7.500v8.500h-7.500z"/><path transform="translate(34.6 0) scale(0.8 1)" d="M1.500 7h9"/><path transform="translate(43.2 0) scale(0.8 1)" d="M3.500 2v6M9 1.500v6c0 3-2 4.500-4.500 5.500"/><path transform="translate(51.8 0) scale(0.8 1)" d="M2 3l3 1.500M2 12c4-1 7-3.500 9-8"/><path transform="translate(60.5 0) scale(0.8 1)" d="M4.500 1.500c-1 3-2 4.500-3.500 6M4.500 3.500h5c-.500 4.500-3 7.500-7 9M9.500 1l1 1.500M11 .500l1 1.500"/></svg>
<div style="left:0px;top:998px;width:1680px;height:2px;background:#2b2b2b;"></div>
<div style="left:0px;top:1000px;width:1680px;height:50px;background:#1f1f1f;"></div>
<svg style="left:20px;top:1015px;color:#ffffff;" width="20" height="20" viewBox="0 0 20 20"><path class="f" d="M0 2.8L8.6 1.6V9.5H0zM9.6 1.5L20 0V9.5H9.6zM0 10.5H8.6V18.4L0 17.2zM9.6 10.5H20V20L9.6 18.5z"/></svg>
<div style="left:60px;top:1001px;width:430px;height:49px;background:#f2f2f2;"></div>
<svg style="left:75px;top:1013px;color:#222;stroke-width:1.7" width="24" height="24" viewBox="0 0 24 24"><circle cx="14.5" cy="9" r="6.2"/><path d="M10 13.8L2 22"/></svg>
<div class="t" style="left:110px;top:1010.0px;height:30px;line-height:30px;font-size:19px;color:#2a2a2a;letter-spacing:-0.26px;">Type here to search</div>
<div style="left:497px;top:1016px;width:1px;height:26px;background:#555;"></div>
<div style="left:500px;top:1016px;width:1px;height:26px;background:#555;"></div>
<div style="left:1168px;top:1000px;width:50px;height:50px;background:#3c3c3c;"></div>
<div style="left:672px;top:1047px;width:40px;height:3px;background:#76b9ed;"></div>
<div style="left:773px;top:1047px;width:40px;height:3px;background:#76b9ed;"></div>
<div style="left:1023px;top:1047px;width:40px;height:3px;background:#76b9ed;"></div>
<div style="left:1073px;top:1047px;width:40px;height:3px;background:#76b9ed;"></div>
<div style="left:1123px;top:1047px;width:40px;height:3px;background:#76b9ed;"></div>
<div style="left:1168px;top:1047px;width:50px;height:3px;background:#76b9ed;"></div>
<svg style="left:523px;top:1009px;stroke:none;" width="32" height="32" viewBox="0 0 32 32"><defs><linearGradient id="sk" x1="0" y1="0" x2="1" y2="1"><stop offset="0" stop-color="#2bb8ee"/><stop offset="1" stop-color="#0a7fd0"/></linearGradient></defs><path fill="url(#sk)" d="M9 2.5a7 7 0 0 1 4 1.2 12 12 0 0 1 14.6 14.6A7 7 0 0 1 18.2 28 12 12 0 0 1 3.7 13.4 7 7 0 0 1 9 2.5z"/><path fill="#fff" d="M16.2 24c-3.6 0-5.8-1.8-5.8-3.5 0-.9.7-1.5 1.5-1.5 1.8 0 1.4 2.5 4.2 2.5 1.5 0 2.4-.8 2.4-1.6 0-2.6-8-1.1-8-6.400 0-2.300 2-4.300 5.800-4.100 2.800.1 5 1.500 5 3.100 0 .9-.7 1.500-1.500 1.500-1.600 0-1.400-2.100-3.900-2.100-1.400 0-2.300.6-2.300 1.400 0 2.400 8.100 1.100 8.100 6.400 0 2.600-2.100 4.400-5.500 4.400z"/></svg>
<svg style="left:574px;top:1009px;stroke:none;" width="32" height="32" viewBox="0 0 32 32"><rect x="1" y="1" width="30" height="30" fill="#0061fe"/><path fill="#fff" d="M11 7l-5 3.200 5 3.200 5-3.200zM21 7l-5 3.200 5 3.200 5-3.200zM6 16.600l5 3.200 5-3.200-5-3.200zM21 13.400l-5 3.200 5 3.200 5-3.200zM11 20.900l5 3.200 5-3.200-5-3.200z"/></svg>
<svg style="left:624px;top:1009px;stroke:none;" width="32" height="32" viewBox="0 0 32 32"><defs><linearGradient id="sh" x1="0" y1="0" x2="0" y2="1"><stop offset="0" stop-color="#5aa7f0"/><stop offset="1" stop-color="#1d5bd0"/></linearGradient></defs><path fill="url(#sh)" d="M22 1l-12 11 8 3zM9 14l13 4-9 13 4-11z"/><path fill="#8cc4f7" d="M22 1l-4 14-8-3z" opacity=".55"/></svg>
<svg style="left:675px;top:1009px;stroke:none;" width="32" height="32" viewBox="0 0 32 32"><path fill="#e8a91c" d="M2 6.500a1.500 1.500 0 0 1 1.500-1.500h8l2.500 2.500h14.500a1.500 1.500 0 0 1 1.500 1.500v3h-28z"/><path fill="#fcd462" d="M2 9.500h28v14.500a1.500 1.500 0 0 1-1.500 1.500h-25a1.500 1.500 0 0 1-1.500-1.500z"/><path fill="#3f8ed6" d="M8 18h16v8.500h-4.500v-4.500h-7v4.500h-4.500z"/><rect x="6" y="25.500" width="20" height="1.800" fill="#2f78c0"/></svg>
<svg style="left:725px;top:1009px;stroke:none;" width="32" height="32" viewBox="0 0 32 32"><path fill="none" stroke="#3ba0e6" stroke-width="2.200" d="M10.500 9v-2.500a2.500 2.500 0 0 1 2.500-2.500h6a2.500 2.500 0 0 1 2.500 2.500v2.500"/><path fill="#f4f4f4" d="M2.500 8.500h27v18.500a3 3 0 0 1-3 3h-21a3 3 0 0 1-3-3z"/><rect x="10.500" y="13" width="5" height="5" fill="#f25022"/><rect x="16.500" y="13" width="5" height="5" fill="#7fba00"/><rect x="10.500" y="19" width="5" height="5" fill="#00a4ef"/><rect x="16.500" y="19" width="5" height="5" fill="#ffb900"/></svg>
<svg style="left:776px;top:1009px;stroke:none;" width="32" height="32" viewBox="0 0 32 32"><defs><linearGradient id="ms" x1="0" y1="1" x2="1" y2="0"><stop offset="0" stop-color="#1e8bff"/><stop offset=".5" stop-color="#a033ff"/><stop offset="1" stop-color="#ff5c87"/></linearGradient></defs><path fill="url(#ms)" d="M16 1.500c-8.300 0-14.700 6-14.700 13.800 0 4.200 1.800 7.800 4.700 10.300v4.400l4.100-2.200c1.800.6 3.800.9 5.900.9 8.300 0 14.700-6 14.700-13.400s-6.400-13.800-14.700-13.800z"/><path fill="#fff" d="M6.500 19.500l5.600-8.200 4.200 3.400 5.200-3.400h4l-5.700 8.200-4.100-3.400-5.200 3.400z"/></svg>
<svg style="left:826px;top:1009px;stroke:none;" width="32" height="32" viewBox="0 0 32 32"><path fill="#e64a19" d="M5 8l13-6.500 9 2.500v24l-9 2.500-13-6 13 1.500v-20l-8 2.500v13l-5 2.500z"/><path fill="#ff8f6b" d="M18 1.500l9 2.500v24l-9 2.500z" opacity=".55"/></svg>
<svg style="left:876px;top:1009px;stroke:none;" width="32" height="32" viewBox="0 0 32 32"><path fill="#1a73c8" d="M2 11l14-9.500 14 9.500v3h-28z"/><path fill="#fff" d="M6 7h20v12h-20z"/><path fill="#9fd4f5" d="M8 9h16v1.200h-16z"/><path fill="#2fa4e8" d="M2 11l14 9 14-9v17.500a1.500 1.500 0 0 1-1.500 1.500h-25a1.500 1.500 0 0 1-1.500-1.500z"/><path fill="#52c0f5" d="M2 29l14-11 14 11v.500a.5.500 0 0 1-.5.500h-27a.5.500 0 0 1-.5-.5z"/></svg>
<svg style="left:926px;top:1009px;stroke:none;" width="32" height="32" viewBox="0 0 32 32"><ellipse cx="15" cy="11" rx="13.500" ry="7.500" fill="#f3f3f3" stroke="#d23c3c" stroke-width="1.800" transform="rotate(-18 15 11)"/><path stroke="#777" stroke-width="1.500" fill="none" d="M13 5l6 14M20 4l-5 15"/><circle cx="14" cy="24" r="3.600" fill="none" stroke="#2e7fd0" stroke-width="2.200"/><circle cx="24.500" cy="21.500" r="3.600" fill="none" stroke="#2e7fd0" stroke-width="2.200"/></svg>
<svg style="left:976px;top:1009px;stroke:none;" width="32" height="32" viewBox="0 0 32 32"><defs><linearGradient id="ed" x1="0" y1="0" x2="1" y2="1"><stop offset="0" stop-color="#2fc3d8"/><stop offset="1" stop-color="#1565c0"/></linearGradient><linearGradient id="ed2" x1="0" y1="0" x2="1" y2="0"><stop offset="0" stop-color="#1b9de2"/><stop offset="1" stop-color="#5ed46a"/></linearGradient></defs><circle cx="16" cy="16" r="14.500" fill="url(#ed)"/><path fill="url(#ed2)" d="M3 11c3-8 11-11 18-8.500 6 2.200 9.500 7.500 9.500 12.500 0 4-3 7-7 7-3 0-5-1.500-5-3.500 0-1.500 1.500-2 1.500-4 0-3-3-5.500-7-5.500-4.500 0-8 2-10 2z"/><path fill="#0c4a9e" d="M12.500 16c-3.500 3-3 9 1.500 12.500 3 2 7 2 10 .5-6 .5-11-3.500-11.500-13z" opacity=".8"/></svg>
<svg style="left:1026px;top:1009px;stroke:none;" width="32" height="32" viewBox="0 0 32 32"><circle cx="15" cy="15" r="13.500" fill="#ea4335"/><path fill="#34a853" d="M3.300 8.200a13.500 13.500 0 0 0 10.200 20.200l5.500-9.500-6.800-.5z"/><path fill="#fbbc05" d="M28.300 11h-12l5.800 8-6.600 9.500a13.500 13.500 0 0 0 12.800-17.500z"/><circle cx="15" cy="15" r="6.200" fill="#fff"/><circle cx="15" cy="15" r="4.800" fill="#4285f4"/><circle cx="23.500" cy="23.500" r="8" fill="#c43e1c"/><path fill="#fff" d="M21.200 19.500h1.700v6.500h3.600v1.500h-5.300z"/></svg>
<svg style="left:1075px;top:1009px;stroke:none;" width="32" height="32" viewBox="0 0 32 32"><path fill="#41a5ee" d="M9 1.500h20a1.500 1.500 0 0 1 1.500 1.500v6.500h-23v-6.500a1.500 1.500 0 0 1 1.500-1.500z"/><rect x="7.500" y="9.500" width="23" height="7" fill="#2b7cd3"/><rect x="7.500" y="16.500" width="23" height="7" fill="#185abd"/><path fill="#103f91" d="M7.500 23.500h23v5.500a1.500 1.500 0 0 1-1.500 1.500h-20a1.500 1.500 0 0 1-1.500-1.500z"/><rect x="1.500" y="8" width="16" height="16" rx="1.500" fill="#185abd"/><path fill="#fff" d="M4.200 11.500h2.100l1.500 6.500 1.700-6.500h1.800l1.700 6.500 1.500-6.500h2l-2.600 9h-1.800l-1.700-6.200-1.700 6.200h-1.800z"/></svg>
<svg style="left:1126px;top:1009px;stroke:none;" width="32" height="32" viewBox="0 0 32 32"><defs><linearGradient id="cs" x1="0" y1="0" x2="0" y2="1"><stop offset="0" stop-color="#e4e4e4"/><stop offset="1" stop-color="#c4c4c4"/></linearGradient></defs><rect x="1" y="1" width="30" height="30" rx="7" fill="url(#cs)"/><path fill="none" stroke="#8a8a8a" stroke-width="2.800" stroke-linecap="round" d="M20 14.500c-2-1.500-6-1-6.500 1.500-.5 3 4 3.500 7 2 4-2 5-7 1-9.500-4-2.500-11-1-13.500 3.500-2.500 5 .5 10.500 7 11 3 .2 5-.5 7-2"/></svg>
<svg style="left:1176px;top:1009px;stroke:none;" width="32" height="32" viewBox="0 0 32 32"><rect x="1" y="1" width="30" height="30" rx="7" fill="url(#cs)"/><path fill="none" stroke="#1c1c1c" stroke-width="3" stroke-linecap="round" d="M8 12.500c3-5 12-6 15.500-2.500 3 3 0 7.500-5 8.500-3 .6-6-.5-5.500-2.500.5-2 4.500-1.800 5.500.5 1 2.500.500 5-1 7.500"/></svg>
<svg style="left:1231px;top:1009px;stroke:none;" width="32" height="32" viewBox="0 0 32 32"><circle cx="14.500" cy="15" r="12.500" fill="#1d8fe0" stroke="#fff" stroke-width="2"/><path fill="none" stroke="#fff" stroke-width="3.200" stroke-linecap="round" d="M10 11.500c0-3 2-4.500 4.500-4.500s4.500 1.500 4.500 4c0 3-4.200 3.200-4.200 6.500"/><circle cx="14.700" cy="22.500" r="2" fill="#fff"/><circle cx="24.500" cy="24.500" r="6" fill="#f5a623"/><rect x="23.600" y="23.500" width="1.900" height="5" fill="#fff"/><circle cx="24.500" cy="21.500" r="1.100" fill="#fff"/></svg>
<svg style="left:1296px;top:1013px;stroke:none" width="30" height="24" viewBox="0 0 30 24"><defs><linearGradient id="wc" x1="0" y1="0" x2="1" y2="1"><stop offset="0" stop-color="#eaf4fd"/><stop offset="1" stop-color="#8fc4ee"/></linearGradient></defs><path fill="url(#wc)" d="M7.500 20.500a6 6 0 0 1-.8-12 8.500 8.500 0 0 1 16-1.500 6.800 6.800 0 0 1 .8 13.500z"/></svg>
<div class="t" style="left:1336px;top:1012.0px;height:28px;line-height:28px;font-size:19px;color:#ffffff;letter-spacing:-1.60px;">12°C</div>
<svg style="left:1392px;top:1016px;color:#fff;stroke-width:1.500" width="22" height="18" viewBox="0 0 22 18"><path d="M3 13l8-8 8 8"/></svg>
<svg style="left:1421px;top:1017px;stroke:none" width="24" height="16" viewBox="0 0 24 16"><path fill="#9a9a9a" d="M6 14a4.500 4.500 0 0 1-.5-9 6 6 0 0 1 11-1 5 5 0 0 1 1 10z"/><path fill="#f2f2f2" d="M8 14.500a3.800 3.800 0 0 1 .3-7.500 5.500 5.500 0 0 1 9.700.8 3.500 3.500 0 0 1 1 6.700z"/></svg>
<svg style="left:1451px;top:1014px;color:#fff;" width="24" height="22" viewBox="0 0 24 22"><path d="M1.500 8h3.500l4.500-4.500v15l-4.500-4.500h-3.500z" stroke="#fff" stroke-width="1.300"/><path d="M12.500 8.500a3.500 3.500 0 0 1 0 5" stroke="#ddd"/><path d="M15.200 6a7 7 0 0 1 0 10" stroke="#888"/><path d="M18 3.500a10.500 10.500 0 0 1 0 15" stroke="#555"/></svg>
<div class="t" style="left:1486px;top:1014.5px;height:21px;line-height:21px;font-size:14px;color:#ffffff;letter-spacing:-0.67px;">FRA</div>
<div class="t" style="left:1537px;top:1002.5px;height:21px;line-height:21px;font-size:14px;color:#ffffff;letter-spacing:0.23px;">10:24 AM</div>
<div class="t" style="left:1530px;top:1025.5px;height:21px;line-height:21px;font-size:14px;color:#ffffff;letter-spacing:0.34px;">2022-05-03</div>
<svg style="left:1629px;top:1015px;color:#fff;" width="24" height="24" viewBox="0 0 24 24"><path class="f" d="M1 1h19v13.500h-4a5 5 0 0 0-3 4.500h-6l-3 3v-3h-3z" fill="#fff"/><path d="M4.500 5h12M4.500 8h12M4.500 11h9" stroke="#1f1f1f" stroke-width="1.200"/><circle cx="18" cy="18" r="4" stroke="#fff" fill="#1f1f1f" stroke-width="1.200"/><path d="M19.500 16.200a2.300 2.300 0 1 0 .8 2.800" stroke="#fff" stroke-width="1"/></svg>
<div style="left:1673px;top:1000px;width:1px;height:50px;background:#555;"></div></div></body></html>
